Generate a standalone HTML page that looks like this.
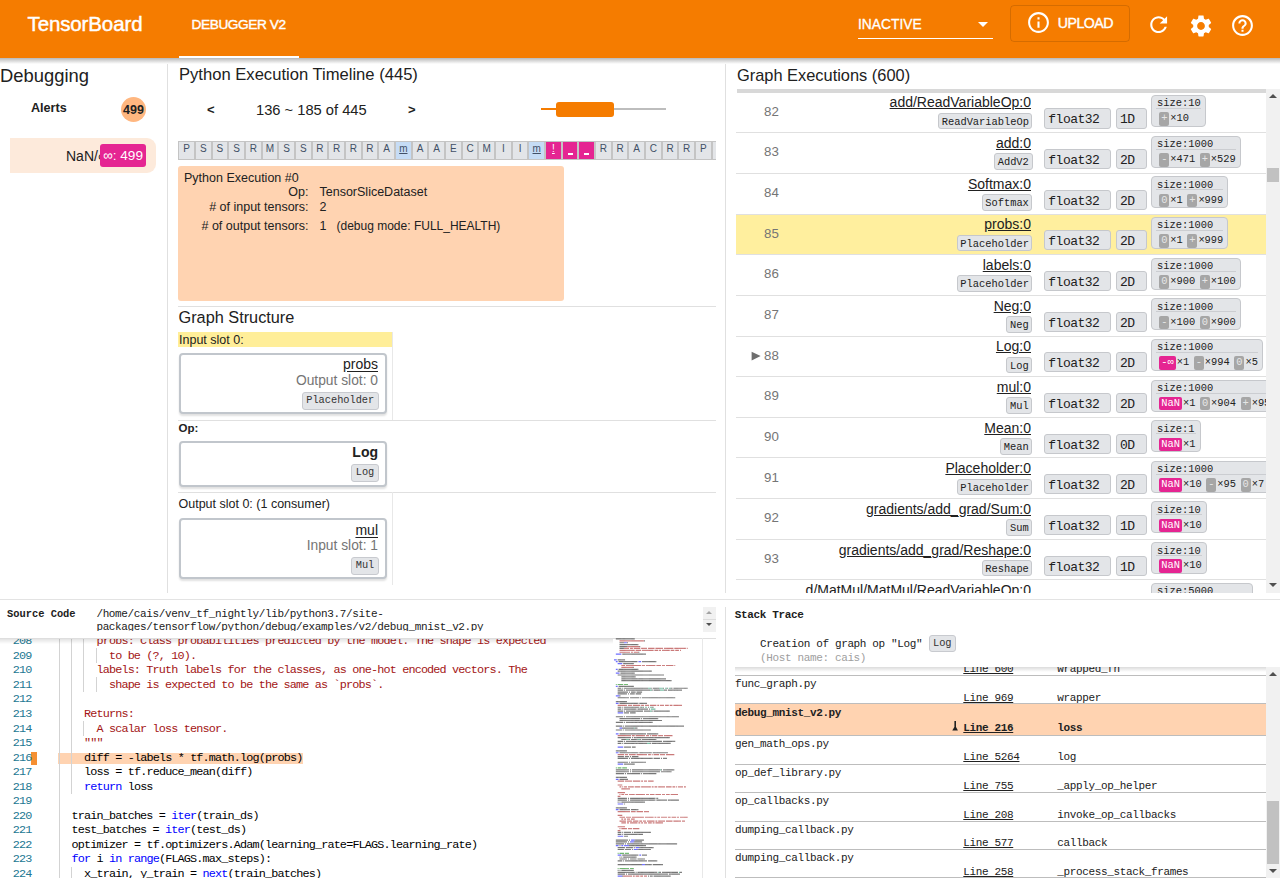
<!DOCTYPE html>
<html><head><meta charset="utf-8">
<style>
*{box-sizing:border-box;margin:0;padding:0}
html,body{width:1280px;height:878px;overflow:hidden;background:#fff;font-family:"Liberation Sans",sans-serif;color:#212121}
body{position:relative}
.t{position:absolute;white-space:pre}
.b{position:absolute}
.m{font-family:"Liberation Mono",monospace}
.u{text-decoration:underline;text-underline-offset:2px}
</style></head><body>

<div class="b" style="left:0px;top:0px;width:1280px;height:58px;background:#f57c00"></div>
<div class="t" style="left:27.5px;top:14.00px;font-size:20.5px;line-height:20px;color:#fff;letter-spacing:-0.12px;-webkit-text-stroke:0.45px #fff">TensorBoard</div>
<div class="t" style="left:191.5px;top:14.60px;font-size:13.7px;line-height:20px;color:#fff;letter-spacing:-0.42px;-webkit-text-stroke:0.4px #fff">DEBUGGER V2</div>
<div class="b" style="left:179px;top:56px;width:120px;height:2px;background:#fff"></div>
<div class="t" style="left:858px;top:14.80px;font-size:13.8px;line-height:20px;color:#fff;-webkit-text-stroke:0.3px #fff">INACTIVE</div>
<div class="b" style="left:858px;top:38px;width:135px;height:1px;background:#fff"></div>
<div class="b" style="left:978px;top:22px;width:0;height:0;border-left:5px solid transparent;border-right:5px solid transparent;border-top:5px solid #fff"></div>
<div class="b" style="left:1010px;top:5px;width:120px;height:37px;border:1px solid rgba(0,0,0,0.13);border-radius:4px"></div>
<div class="t" style="left:1057.8px;top:12.90px;font-size:14.2px;line-height:20px;color:#fff;letter-spacing:-0.55px;-webkit-text-stroke:0.4px #fff">UPLOAD</div>
<svg class="b" style="left:1026.3px;top:10.4px" width="25" height="25" viewBox="0 0 24 24"><path fill="#fff" d="M11 7h2v2h-2zm0 4h2v6h-2zm1-9C6.48 2 2 6.48 2 12s4.48 10 10 10 10-4.48 10-10S17.52 2 12 2zm0 18c-4.41 0-8-3.59-8-8s3.59-8 8-8 8 3.59 8 8-3.59 8-8 8z"/></svg>
<svg class="b" style="left:1146.1px;top:12.1px" width="25.3" height="25.3" viewBox="0 0 24 24"><path fill="#fff" d="M17.65 6.35C16.2 4.9 14.21 4 12 4c-4.42 0-7.99 3.58-7.99 8s3.57 8 7.99 8c3.73 0 6.840-2.55 7.73-6h-2.08c-.82 2.33-3.04 4-5.65 4-3.310 0-6-2.69-6-6s2.69-6 6-6c1.66 0 3.14.69 4.22 1.78L13 11h7V4l-2.35 2.35z"/></svg>
<svg class="b" style="left:1187.5px;top:12.6px" width="26" height="26" viewBox="0 0 24 24"><path fill="#fff" d="M19.14,12.94c0.04-0.3,0.06-0.61,0.06-0.94c0-0.32-0.02-0.64-0.07-0.94l2.03-1.58c0.18-0.14,0.23-0.41,0.12-0.61 l-1.92-3.32c-0.12-0.22-0.37-0.29-0.59-0.22l-2.39,0.96c-0.5-0.38-1.03-0.7-1.62-0.94L14.4,2.81c-0.04-0.24-0.24-0.41-0.48-0.41 h-3.84c-0.24,0-0.43,0.17-0.47,0.41L9.25,5.35C8.66,5.59,8.12,5.92,7.63,6.29L5.24,5.33c-0.22-0.08-0.47,0-0.59,0.22L2.74,8.87 C2.62,9.08,2.66,9.34,2.86,9.48l2.03,1.580C4.84,11.36,4.8,11.69,4.8,12s0.02,0.64,0.07,0.94l-2.03,1.58 c-0.18,0.14-0.23,0.41-0.12,0.61l1.92,3.32c0.12,0.22,0.37,0.29,0.59,0.22l2.39-0.96c0.5,0.38,1.03,0.7,1.62,0.94l0.36,2.54 c0.05,0.24,0.24,0.41,0.48,0.41h3.84c0.24,0,0.44-0.17,0.47-0.41l0.36-2.54c0.59-0.24,1.13-0.56,1.62-0.94l2.39,0.96 c0.22,0.08,0.47,0,0.59-0.22l1.92-3.32c0.12-0.22,0.07-0.47-0.12-0.61L19.14,12.94z M12,15.6c-1.98,0-3.6-1.62-3.6-3.6 s1.62-3.6,3.6-3.6s3.6,1.62,3.6,3.6S13.98,15.6,12,15.6z"/></svg>
<svg class="b" style="left:1229.6px;top:13.25px" width="25" height="25" viewBox="0 0 24 24"><path fill="#fff" d="M11 18h2v-2h-2v2zm1-16C6.48 2 2 6.48 2 12s4.48 10 10 10 10-4.48 10-10S17.52 2 12 2zm0 18c-4.41 0-8-3.590-8-8s3.59-8 8-8 8 3.59 8 8-3.59 8-8 8zm0-14c-2.21 0-4 1.79-4 4h2c0-1.1.9-2 2-2s2 .9 2 2c0 2-3 1.75-3 5h2c0-2.25 3-2.5 3-5 0-2.21-1.790-4-4-4z"/></svg>
<div class="b" style="left:0px;top:58px;width:1280px;height:6px;background:linear-gradient(rgba(0,0,0,0.28),rgba(0,0,0,0))"></div>
<div class="t" style="left:0px;top:66.00px;font-size:18.4px;line-height:20px;color:#212121">Debugging</div>
<div class="t" style="left:31px;top:98.00px;font-size:12.6px;line-height:20px;font-weight:bold;color:#212121">Alerts</div>
<div class="b" style="left:121px;top:97px;width:25px;height:25px;border-radius:50%;background:#ffb780"></div>
<div class="t" style="left:121px;top:100.00px;font-size:12.5px;line-height:20px;font-weight:bold;width:25px;text-align:center;color:#212121">499</div>
<div class="b" style="left:10px;top:138px;width:146px;height:35px;background:#fdeadb;border-radius:0 9px 9px 0"></div>
<div class="t" style="left:66px;top:145.50px;font-size:14px;line-height:20px;color:#212121">NaN/∞</div>
<div class="b" style="left:100px;top:144px;width:46px;height:23px;background:#e52592;border-radius:3px"></div>
<div class="t" style="left:100px;top:146.10px;font-size:13.6px;line-height:20px;color:#fff;width:46px;text-align:center">∞: 499</div>
<div class="b" style="left:167px;top:64px;width:1px;height:529px;background:#e0e0e0"></div>
<div class="t" style="left:179px;top:65.00px;font-size:16.6px;line-height:20px;">Python Execution Timeline (445)</div>
<div class="t" style="left:207px;top:100.00px;font-size:13px;line-height:20px;font-weight:bold">&lt;</div>
<div class="t" style="left:256px;top:100.00px;font-size:14.7px;line-height:20px;">136 ~ 185 of 445</div>
<div class="t" style="left:408px;top:100.00px;font-size:13px;line-height:20px;font-weight:bold">&gt;</div>
<div class="b" style="left:541px;top:108px;width:15px;height:2px;background:#f57c00"></div>
<div class="b" style="left:613px;top:108px;width:53px;height:1.5px;background:#bdbdbd"></div>
<div class="b" style="left:555.5px;top:102px;width:58px;height:14.5px;background:#f57c00;border-radius:3px"></div>
<div class="b" style="left:178.30px;top:141px;width:16.67px;height:19px;background:#e3e5e8;border:1px solid #c4c4c4;color:#425066;font-size:10px;line-height:13.5px;text-align:center;">P</div>
<div class="b" style="left:194.97px;top:141px;width:16.67px;height:19px;background:#e3e5e8;border:1px solid #c4c4c4;color:#425066;font-size:10px;line-height:13.5px;text-align:center;">S</div>
<div class="b" style="left:211.64px;top:141px;width:16.67px;height:19px;background:#e3e5e8;border:1px solid #c4c4c4;color:#425066;font-size:10px;line-height:13.5px;text-align:center;">S</div>
<div class="b" style="left:228.31px;top:141px;width:16.67px;height:19px;background:#e3e5e8;border:1px solid #c4c4c4;color:#425066;font-size:10px;line-height:13.5px;text-align:center;">S</div>
<div class="b" style="left:244.98px;top:141px;width:16.67px;height:19px;background:#e3e5e8;border:1px solid #c4c4c4;color:#425066;font-size:10px;line-height:13.5px;text-align:center;">R</div>
<div class="b" style="left:261.65px;top:141px;width:16.67px;height:19px;background:#e3e5e8;border:1px solid #c4c4c4;color:#425066;font-size:10px;line-height:13.5px;text-align:center;">M</div>
<div class="b" style="left:278.32px;top:141px;width:16.67px;height:19px;background:#e3e5e8;border:1px solid #c4c4c4;color:#425066;font-size:10px;line-height:13.5px;text-align:center;">S</div>
<div class="b" style="left:294.99px;top:141px;width:16.67px;height:19px;background:#e3e5e8;border:1px solid #c4c4c4;color:#425066;font-size:10px;line-height:13.5px;text-align:center;">S</div>
<div class="b" style="left:311.66px;top:141px;width:16.67px;height:19px;background:#e3e5e8;border:1px solid #c4c4c4;color:#425066;font-size:10px;line-height:13.5px;text-align:center;">R</div>
<div class="b" style="left:328.33px;top:141px;width:16.67px;height:19px;background:#e3e5e8;border:1px solid #c4c4c4;color:#425066;font-size:10px;line-height:13.5px;text-align:center;">R</div>
<div class="b" style="left:345.00px;top:141px;width:16.67px;height:19px;background:#e3e5e8;border:1px solid #c4c4c4;color:#425066;font-size:10px;line-height:13.5px;text-align:center;">R</div>
<div class="b" style="left:361.67px;top:141px;width:16.67px;height:19px;background:#e3e5e8;border:1px solid #c4c4c4;color:#425066;font-size:10px;line-height:13.5px;text-align:center;">R</div>
<div class="b" style="left:378.34px;top:141px;width:16.67px;height:19px;background:#e3e5e8;border:1px solid #c4c4c4;color:#425066;font-size:10px;line-height:13.5px;text-align:center;">A</div>
<div class="b" style="left:395.01px;top:141px;width:16.67px;height:19px;background:#c6dcf5;border:1px solid #c4c4c4;color:#425066;font-size:10px;line-height:13.5px;text-align:center;text-decoration:underline;">m</div>
<div class="b" style="left:411.68px;top:141px;width:16.67px;height:19px;background:#e3e5e8;border:1px solid #c4c4c4;color:#425066;font-size:10px;line-height:13.5px;text-align:center;">A</div>
<div class="b" style="left:428.35px;top:141px;width:16.67px;height:19px;background:#e3e5e8;border:1px solid #c4c4c4;color:#425066;font-size:10px;line-height:13.5px;text-align:center;">A</div>
<div class="b" style="left:445.02px;top:141px;width:16.67px;height:19px;background:#e3e5e8;border:1px solid #c4c4c4;color:#425066;font-size:10px;line-height:13.5px;text-align:center;">E</div>
<div class="b" style="left:461.69px;top:141px;width:16.67px;height:19px;background:#e3e5e8;border:1px solid #c4c4c4;color:#425066;font-size:10px;line-height:13.5px;text-align:center;">C</div>
<div class="b" style="left:478.36px;top:141px;width:16.67px;height:19px;background:#e3e5e8;border:1px solid #c4c4c4;color:#425066;font-size:10px;line-height:13.5px;text-align:center;">M</div>
<div class="b" style="left:495.03px;top:141px;width:16.67px;height:19px;background:#e3e5e8;border:1px solid #c4c4c4;color:#425066;font-size:10px;line-height:13.5px;text-align:center;">I</div>
<div class="b" style="left:511.70px;top:141px;width:16.67px;height:19px;background:#e3e5e8;border:1px solid #c4c4c4;color:#425066;font-size:10px;line-height:13.5px;text-align:center;">I</div>
<div class="b" style="left:528.37px;top:141px;width:16.67px;height:19px;background:#c6dcf5;border:1px solid #c4c4c4;color:#425066;font-size:10px;line-height:13.5px;text-align:center;text-decoration:underline;">m</div>
<div class="b" style="left:545.04px;top:141px;width:16.67px;height:19px;background:#e52592;border:1px solid #c4c4c4;color:#fff;font-size:10px;line-height:13.5px;text-align:center;text-decoration:underline;">!</div>
<div class="b" style="left:561.71px;top:141px;width:16.67px;height:19px;background:#e52592;border:1px solid #c4c4c4;color:#fff;font-size:10px;line-height:13.5px;text-align:center;"><span style='display:inline-block;width:5px;height:2px;background:#fff;vertical-align:-3px'></span></div>
<div class="b" style="left:578.38px;top:141px;width:16.67px;height:19px;background:#e52592;border:1px solid #c4c4c4;color:#fff;font-size:10px;line-height:13.5px;text-align:center;"><span style='display:inline-block;width:5px;height:2px;background:#fff;vertical-align:-3px'></span></div>
<div class="b" style="left:595.05px;top:141px;width:16.67px;height:19px;background:#e3e5e8;border:1px solid #c4c4c4;color:#425066;font-size:10px;line-height:13.5px;text-align:center;">R</div>
<div class="b" style="left:611.72px;top:141px;width:16.67px;height:19px;background:#e3e5e8;border:1px solid #c4c4c4;color:#425066;font-size:10px;line-height:13.5px;text-align:center;">R</div>
<div class="b" style="left:628.39px;top:141px;width:16.67px;height:19px;background:#e3e5e8;border:1px solid #c4c4c4;color:#425066;font-size:10px;line-height:13.5px;text-align:center;">A</div>
<div class="b" style="left:645.06px;top:141px;width:16.67px;height:19px;background:#e3e5e8;border:1px solid #c4c4c4;color:#425066;font-size:10px;line-height:13.5px;text-align:center;">C</div>
<div class="b" style="left:661.73px;top:141px;width:16.67px;height:19px;background:#e3e5e8;border:1px solid #c4c4c4;color:#425066;font-size:10px;line-height:13.5px;text-align:center;">R</div>
<div class="b" style="left:678.40px;top:141px;width:16.67px;height:19px;background:#e3e5e8;border:1px solid #c4c4c4;color:#425066;font-size:10px;line-height:13.5px;text-align:center;">R</div>
<div class="b" style="left:695.07px;top:141px;width:16.67px;height:19px;background:#e3e5e8;border:1px solid #c4c4c4;color:#425066;font-size:10px;line-height:13.5px;text-align:center;">P</div>
<div class="b" style="left:711.74px;top:141px;width:4.76px;height:19px;background:#e3e5e8;border:1px solid #c4c4c4;border-right:none"></div>
<div class="b" style="left:178px;top:166px;width:386px;height:135px;background:#ffd3b1;border-radius:3px"></div>
<div class="t" style="left:184px;top:167.50px;font-size:12.5px;line-height:20px;">Python Execution #0</div>
<div class="t" style="left:-191.5px;width:500px;text-align:right;top:182.00px;font-size:12.5px;line-height:20px;">Op:</div>
<div class="t" style="left:319.5px;top:182.00px;font-size:12.5px;line-height:20px;">TensorSliceDataset</div>
<div class="t" style="left:-191.5px;width:500px;text-align:right;top:196.50px;font-size:12.5px;line-height:20px;"># of input tensors:</div>
<div class="t" style="left:319.5px;top:196.50px;font-size:12.5px;line-height:20px;">2</div>
<div class="t" style="left:-191.5px;width:500px;text-align:right;top:215.50px;font-size:12.5px;line-height:20px;"># of output tensors:</div>
<div class="t" style="left:319.5px;top:215.50px;font-size:12.5px;line-height:20px;">1</div>
<div class="t" style="left:336.5px;top:215.50px;font-size:12px;line-height:20px;">(debug mode: FULL_HEALTH)</div>
<div class="b" style="left:178px;top:306px;width:538px;height:1px;background:#e0e0e0"></div>
<div class="t" style="left:178.5px;top:307.00px;font-size:16.3px;line-height:20px;">Graph Structure</div>
<div class="b" style="left:178px;top:332px;width:215px;height:14.5px;background:#ffee99"></div>
<div class="t" style="left:179px;top:329.50px;font-size:12.5px;line-height:20px;">Input slot 0:</div>
<div class="b" style="left:392px;top:332px;width:1px;height:88px;background:#e8e8e8"></div>
<div class="b" style="left:178.5px;top:352.5px;width:208px;height:61.5px;border:2px solid #c1c6cc;border-radius:4px;box-shadow:0 2px 2px rgba(0,0,0,0.12);background:#fff"></div>
<div class="t" style="left:-122px;width:500px;text-align:right;top:354.00px;font-size:14px;line-height:20px;text-decoration:underline;text-underline-offset:2px">probs</div>
<div class="t" style="left:-122px;width:500px;text-align:right;top:370.50px;font-size:13.8px;line-height:20px;color:#757575">Output slot: 0</div>
<div class="b m" style="left:302px;top:392px;width:76.5px;height:17.5px;background:#e3e5e8;border:1px solid #c8cacf;border-radius:3px;font-size:10.3px;line-height:15.5px;text-align:center;color:#333;">Placeholder</div>
<div class="b" style="left:178px;top:420px;width:538px;height:1px;background:#e0e0e0"></div>
<div class="t" style="left:178.5px;top:417.50px;font-size:11.5px;line-height:20px;font-weight:bold">Op:</div>
<div class="b" style="left:178.5px;top:440.5px;width:208px;height:46.2px;border:2px solid #c1c6cc;border-radius:4px;box-shadow:0 2px 2px rgba(0,0,0,0.12);background:#fff"></div>
<div class="t" style="left:-122px;width:500px;text-align:right;top:442.00px;font-size:14px;line-height:20px;font-weight:bold">Log</div>
<div class="b m" style="left:351.4px;top:464px;width:27.2px;height:17.5px;background:#e3e5e8;border:1px solid #c8cacf;border-radius:3px;font-size:10.3px;line-height:15.5px;text-align:center;color:#333;">Log</div>
<div class="b" style="left:178px;top:491.5px;width:538px;height:1px;background:#e0e0e0"></div>
<div class="b" style="left:392px;top:491.5px;width:1px;height:93px;background:#e8e8e8"></div>
<div class="t" style="left:178.5px;top:494.00px;font-size:12.5px;line-height:20px;">Output slot 0: (1 consumer)</div>
<div class="b" style="left:178.5px;top:517.5px;width:208px;height:61px;border:2px solid #c1c6cc;border-radius:4px;box-shadow:0 2px 2px rgba(0,0,0,0.12);background:#fff"></div>
<div class="t" style="left:-122px;width:500px;text-align:right;top:519.50px;font-size:14px;line-height:20px;text-decoration:underline;text-underline-offset:2px">mul</div>
<div class="t" style="left:-122px;width:500px;text-align:right;top:536.00px;font-size:13.8px;line-height:20px;color:#757575">Input slot: 1</div>
<div class="b m" style="left:351.4px;top:557px;width:27.2px;height:17.5px;background:#e3e5e8;border:1px solid #c8cacf;border-radius:3px;font-size:10.3px;line-height:15.5px;text-align:center;color:#333;">Mul</div>
<div class="b" style="left:725px;top:64px;width:1px;height:529px;background:#e0e0e0"></div>
<div class="t" style="left:737px;top:65.00px;font-size:16.4px;line-height:20px;">Graph Executions (600)</div>
<div class="b" style="left:736px;top:89px;width:530px;height:504px;overflow:hidden">
<div class="b" style="left:1px;top:0px;width:529px;height:4px;background:#d8d8d8"></div>
<div class="b" style="left:0;top:3.65px;width:530px;height:40.65px;background:transparent;border-bottom:1px solid #e0e0e0"></div>
<div class="t" style="left:28px;top:12.65px;font-size:13.3px;line-height:20px;color:#757575">82</div>
<div class="t" style="left:-105px;width:400px;text-align:right;top:3.40px;font-size:14px;line-height:20px;color:#212121;overflow:hidden"><span style="text-decoration:underline;text-underline-offset:1px">add/ReadVariableOp:0</span></div>
<div class="b m" style="left:202.20px;top:23.65px;width:94.30px;height:16.7px;background:#e3e5e8;border:1px solid #c6c8cc;border-radius:3px;font-size:10.4px;line-height:16.6px;text-align:center;color:#212121">ReadVariableOp</div>
<div class="b m" style="left:307.70000000000005px;top:19.35px;width:67.2px;height:20.2px;background:#e3e5e8;border:1px solid #c6c8cc;border-radius:3px;font-size:13px;letter-spacing:-0.5px;line-height:21.7px;padding-left:3.6px;color:#212121">float32</div>
<div class="b m" style="left:380px;top:19.35px;width:30.5px;height:20.2px;background:#e3e5e8;border:1px solid #c6c8cc;border-radius:3px;font-size:13px;letter-spacing:-0.5px;line-height:21.7px;padding-left:3px;color:#212121">1D</div>
<div class="b m" style="left:415px;top:5.95px;height:32px;background:#e3e5e8;border:1px solid #c6c8cc;border-radius:4px;font-size:10.4px;color:#212121;white-space:nowrap;padding:0 4px 0 4px"><div style="line-height:15px;height:12.5px;border-bottom:1px solid #cbcdd1;padding-left:1px;margin-top:0.5px">size:10</div><div style="padding-left:3.3px;padding-top:3.4px;height:16px"><span style="display:inline-block;margin-left:0;background:#a6a6a6;color:#e6e6e6;border-radius:2px;width:10px;text-align:center;line-height:13.6px;height:13.6px;vertical-align:top">+</span><span style="display:inline-block;padding-left:1px;line-height:13.2px;vertical-align:top">×10</span></div></div>
<div class="b" style="left:0;top:44.30px;width:530px;height:40.65px;background:transparent;border-bottom:1px solid #e0e0e0"></div>
<div class="t" style="left:28px;top:53.30px;font-size:13.3px;line-height:20px;color:#757575">83</div>
<div class="t" style="left:-105px;width:400px;text-align:right;top:44.05px;font-size:14px;line-height:20px;color:#212121;overflow:hidden"><span style="text-decoration:underline;text-underline-offset:1px">add:0</span></div>
<div class="b m" style="left:258.00px;top:64.30px;width:38.50px;height:16.7px;background:#e3e5e8;border:1px solid #c6c8cc;border-radius:3px;font-size:10.4px;line-height:16.6px;text-align:center;color:#212121">AddV2</div>
<div class="b m" style="left:307.70000000000005px;top:60.00px;width:67.2px;height:20.2px;background:#e3e5e8;border:1px solid #c6c8cc;border-radius:3px;font-size:13px;letter-spacing:-0.5px;line-height:21.7px;padding-left:3.6px;color:#212121">float32</div>
<div class="b m" style="left:380px;top:60.00px;width:30.5px;height:20.2px;background:#e3e5e8;border:1px solid #c6c8cc;border-radius:3px;font-size:13px;letter-spacing:-0.5px;line-height:21.7px;padding-left:3px;color:#212121">2D</div>
<div class="b m" style="left:415px;top:46.60px;height:32px;background:#e3e5e8;border:1px solid #c6c8cc;border-radius:4px;font-size:10.4px;color:#212121;white-space:nowrap;padding:0 4px 0 4px"><div style="line-height:15px;height:12.5px;border-bottom:1px solid #cbcdd1;padding-left:1px;margin-top:0.5px">size:1000</div><div style="padding-left:3.3px;padding-top:3.4px;height:16px"><span style="display:inline-block;margin-left:0;background:#a6a6a6;color:#e6e6e6;border-radius:2px;width:10px;text-align:center;line-height:13.6px;height:13.6px;vertical-align:top">-</span><span style="display:inline-block;padding-left:1px;line-height:13.2px;vertical-align:top">×471</span><span style="display:inline-block;margin-left:4.6px;background:#a6a6a6;color:#e6e6e6;border-radius:2px;width:10px;text-align:center;line-height:13.6px;height:13.6px;vertical-align:top">+</span><span style="display:inline-block;padding-left:1px;line-height:13.2px;vertical-align:top">×529</span></div></div>
<div class="b" style="left:0;top:84.95px;width:530px;height:40.65px;background:transparent;border-bottom:1px solid #e0e0e0"></div>
<div class="t" style="left:28px;top:93.95px;font-size:13.3px;line-height:20px;color:#757575">84</div>
<div class="t" style="left:-105px;width:400px;text-align:right;top:84.70px;font-size:14px;line-height:20px;color:#212121;overflow:hidden"><span style="text-decoration:underline;text-underline-offset:1px">Softmax:0</span></div>
<div class="b m" style="left:245.60px;top:104.95px;width:50.90px;height:16.7px;background:#e3e5e8;border:1px solid #c6c8cc;border-radius:3px;font-size:10.4px;line-height:16.6px;text-align:center;color:#212121">Softmax</div>
<div class="b m" style="left:307.70000000000005px;top:100.65px;width:67.2px;height:20.2px;background:#e3e5e8;border:1px solid #c6c8cc;border-radius:3px;font-size:13px;letter-spacing:-0.5px;line-height:21.7px;padding-left:3.6px;color:#212121">float32</div>
<div class="b m" style="left:380px;top:100.65px;width:30.5px;height:20.2px;background:#e3e5e8;border:1px solid #c6c8cc;border-radius:3px;font-size:13px;letter-spacing:-0.5px;line-height:21.7px;padding-left:3px;color:#212121">2D</div>
<div class="b m" style="left:415px;top:87.25px;height:32px;background:#e3e5e8;border:1px solid #c6c8cc;border-radius:4px;font-size:10.4px;color:#212121;white-space:nowrap;padding:0 4px 0 4px"><div style="line-height:15px;height:12.5px;border-bottom:1px solid #cbcdd1;padding-left:1px;margin-top:0.5px">size:1000</div><div style="padding-left:3.3px;padding-top:3.4px;height:16px"><span style="display:inline-block;margin-left:0;background:#a6a6a6;color:#e6e6e6;border-radius:2px;width:10px;text-align:center;line-height:13.6px;height:13.6px;vertical-align:top">0</span><span style="display:inline-block;padding-left:1px;line-height:13.2px;vertical-align:top">×1</span><span style="display:inline-block;margin-left:4.6px;background:#a6a6a6;color:#e6e6e6;border-radius:2px;width:10px;text-align:center;line-height:13.6px;height:13.6px;vertical-align:top">+</span><span style="display:inline-block;padding-left:1px;line-height:13.2px;vertical-align:top">×999</span></div></div>
<div class="b" style="left:0;top:125.60px;width:530px;height:40.65px;background:#ffef9e;border-bottom:1px solid #e0e0e0"></div>
<div class="t" style="left:28px;top:134.60px;font-size:13.3px;line-height:20px;color:#757575">85</div>
<div class="t" style="left:-105px;width:400px;text-align:right;top:125.35px;font-size:14px;line-height:20px;color:#212121;overflow:hidden"><span style="text-decoration:underline;text-underline-offset:1px">probs:0</span></div>
<div class="b m" style="left:220.80px;top:145.60px;width:75.70px;height:16.7px;background:#e3e5e8;border:1px solid #c6c8cc;border-radius:3px;font-size:10.4px;line-height:16.6px;text-align:center;color:#212121">Placeholder</div>
<div class="b m" style="left:307.70000000000005px;top:141.30px;width:67.2px;height:20.2px;background:#e3e5e8;border:1px solid #c6c8cc;border-radius:3px;font-size:13px;letter-spacing:-0.5px;line-height:21.7px;padding-left:3.6px;color:#212121">float32</div>
<div class="b m" style="left:380px;top:141.30px;width:30.5px;height:20.2px;background:#e3e5e8;border:1px solid #c6c8cc;border-radius:3px;font-size:13px;letter-spacing:-0.5px;line-height:21.7px;padding-left:3px;color:#212121">2D</div>
<div class="b m" style="left:415px;top:127.90px;height:32px;background:#e3e5e8;border:1px solid #c6c8cc;border-radius:4px;font-size:10.4px;color:#212121;white-space:nowrap;padding:0 4px 0 4px"><div style="line-height:15px;height:12.5px;border-bottom:1px solid #cbcdd1;padding-left:1px;margin-top:0.5px">size:1000</div><div style="padding-left:3.3px;padding-top:3.4px;height:16px"><span style="display:inline-block;margin-left:0;background:#a6a6a6;color:#e6e6e6;border-radius:2px;width:10px;text-align:center;line-height:13.6px;height:13.6px;vertical-align:top">0</span><span style="display:inline-block;padding-left:1px;line-height:13.2px;vertical-align:top">×1</span><span style="display:inline-block;margin-left:4.6px;background:#a6a6a6;color:#e6e6e6;border-radius:2px;width:10px;text-align:center;line-height:13.6px;height:13.6px;vertical-align:top">+</span><span style="display:inline-block;padding-left:1px;line-height:13.2px;vertical-align:top">×999</span></div></div>
<div class="b" style="left:0;top:166.25px;width:530px;height:40.65px;background:transparent;border-bottom:1px solid #e0e0e0"></div>
<div class="t" style="left:28px;top:175.25px;font-size:13.3px;line-height:20px;color:#757575">86</div>
<div class="t" style="left:-105px;width:400px;text-align:right;top:166.00px;font-size:14px;line-height:20px;color:#212121;overflow:hidden"><span style="text-decoration:underline;text-underline-offset:1px">labels:0</span></div>
<div class="b m" style="left:220.80px;top:186.25px;width:75.70px;height:16.7px;background:#e3e5e8;border:1px solid #c6c8cc;border-radius:3px;font-size:10.4px;line-height:16.6px;text-align:center;color:#212121">Placeholder</div>
<div class="b m" style="left:307.70000000000005px;top:181.95px;width:67.2px;height:20.2px;background:#e3e5e8;border:1px solid #c6c8cc;border-radius:3px;font-size:13px;letter-spacing:-0.5px;line-height:21.7px;padding-left:3.6px;color:#212121">float32</div>
<div class="b m" style="left:380px;top:181.95px;width:30.5px;height:20.2px;background:#e3e5e8;border:1px solid #c6c8cc;border-radius:3px;font-size:13px;letter-spacing:-0.5px;line-height:21.7px;padding-left:3px;color:#212121">2D</div>
<div class="b m" style="left:415px;top:168.55px;height:32px;background:#e3e5e8;border:1px solid #c6c8cc;border-radius:4px;font-size:10.4px;color:#212121;white-space:nowrap;padding:0 4px 0 4px"><div style="line-height:15px;height:12.5px;border-bottom:1px solid #cbcdd1;padding-left:1px;margin-top:0.5px">size:1000</div><div style="padding-left:3.3px;padding-top:3.4px;height:16px"><span style="display:inline-block;margin-left:0;background:#a6a6a6;color:#e6e6e6;border-radius:2px;width:10px;text-align:center;line-height:13.6px;height:13.6px;vertical-align:top">0</span><span style="display:inline-block;padding-left:1px;line-height:13.2px;vertical-align:top">×900</span><span style="display:inline-block;margin-left:4.6px;background:#a6a6a6;color:#e6e6e6;border-radius:2px;width:10px;text-align:center;line-height:13.6px;height:13.6px;vertical-align:top">+</span><span style="display:inline-block;padding-left:1px;line-height:13.2px;vertical-align:top">×100</span></div></div>
<div class="b" style="left:0;top:206.90px;width:530px;height:40.65px;background:transparent;border-bottom:1px solid #e0e0e0"></div>
<div class="t" style="left:28px;top:215.90px;font-size:13.3px;line-height:20px;color:#757575">87</div>
<div class="t" style="left:-105px;width:400px;text-align:right;top:206.65px;font-size:14px;line-height:20px;color:#212121;overflow:hidden"><span style="text-decoration:underline;text-underline-offset:1px">Neg:0</span></div>
<div class="b m" style="left:270.40px;top:226.90px;width:26.10px;height:16.7px;background:#e3e5e8;border:1px solid #c6c8cc;border-radius:3px;font-size:10.4px;line-height:16.6px;text-align:center;color:#212121">Neg</div>
<div class="b m" style="left:307.70000000000005px;top:222.60px;width:67.2px;height:20.2px;background:#e3e5e8;border:1px solid #c6c8cc;border-radius:3px;font-size:13px;letter-spacing:-0.5px;line-height:21.7px;padding-left:3.6px;color:#212121">float32</div>
<div class="b m" style="left:380px;top:222.60px;width:30.5px;height:20.2px;background:#e3e5e8;border:1px solid #c6c8cc;border-radius:3px;font-size:13px;letter-spacing:-0.5px;line-height:21.7px;padding-left:3px;color:#212121">2D</div>
<div class="b m" style="left:415px;top:209.20px;height:32px;background:#e3e5e8;border:1px solid #c6c8cc;border-radius:4px;font-size:10.4px;color:#212121;white-space:nowrap;padding:0 4px 0 4px"><div style="line-height:15px;height:12.5px;border-bottom:1px solid #cbcdd1;padding-left:1px;margin-top:0.5px">size:1000</div><div style="padding-left:3.3px;padding-top:3.4px;height:16px"><span style="display:inline-block;margin-left:0;background:#a6a6a6;color:#e6e6e6;border-radius:2px;width:10px;text-align:center;line-height:13.6px;height:13.6px;vertical-align:top">-</span><span style="display:inline-block;padding-left:1px;line-height:13.2px;vertical-align:top">×100</span><span style="display:inline-block;margin-left:4.6px;background:#a6a6a6;color:#e6e6e6;border-radius:2px;width:10px;text-align:center;line-height:13.6px;height:13.6px;vertical-align:top">0</span><span style="display:inline-block;padding-left:1px;line-height:13.2px;vertical-align:top">×900</span></div></div>
<div class="b" style="left:0;top:247.55px;width:530px;height:40.65px;background:transparent;border-bottom:1px solid #e0e0e0"></div>
<svg class="b" style="left:15px;top:262px" width="11" height="11" viewBox="751 351 11 11"><polygon points="751.6,351.8 760.6,356.1 751.6,360.5" fill="#6e6e6e"/></svg>
<div class="t" style="left:28px;top:256.55px;font-size:13.3px;line-height:20px;color:#757575">88</div>
<div class="t" style="left:-105px;width:400px;text-align:right;top:247.30px;font-size:14px;line-height:20px;color:#212121;overflow:hidden"><span style="text-decoration:underline;text-underline-offset:1px">Log:0</span></div>
<div class="b m" style="left:270.40px;top:267.55px;width:26.10px;height:16.7px;background:#e3e5e8;border:1px solid #c6c8cc;border-radius:3px;font-size:10.4px;line-height:16.6px;text-align:center;color:#212121">Log</div>
<div class="b m" style="left:307.70000000000005px;top:263.25px;width:67.2px;height:20.2px;background:#e3e5e8;border:1px solid #c6c8cc;border-radius:3px;font-size:13px;letter-spacing:-0.5px;line-height:21.7px;padding-left:3.6px;color:#212121">float32</div>
<div class="b m" style="left:380px;top:263.25px;width:30.5px;height:20.2px;background:#e3e5e8;border:1px solid #c6c8cc;border-radius:3px;font-size:13px;letter-spacing:-0.5px;line-height:21.7px;padding-left:3px;color:#212121">2D</div>
<div class="b m" style="left:415px;top:249.85px;height:32px;background:#e3e5e8;border:1px solid #c6c8cc;border-radius:4px;font-size:10.4px;color:#212121;white-space:nowrap;padding:0 4px 0 4px"><div style="line-height:15px;height:12.5px;border-bottom:1px solid #cbcdd1;padding-left:1px;margin-top:0.5px">size:1000</div><div style="padding-left:3.3px;padding-top:3.4px;height:16px"><span style="display:inline-block;margin-left:0;background:#e52592;color:#fff;border-radius:2px;padding:0 2px;line-height:13.6px;height:13.6px;vertical-align:top">-∞</span><span style="display:inline-block;padding-left:1px;line-height:13.2px;vertical-align:top">×1</span><span style="display:inline-block;margin-left:4.6px;background:#a6a6a6;color:#e6e6e6;border-radius:2px;width:10px;text-align:center;line-height:13.6px;height:13.6px;vertical-align:top">-</span><span style="display:inline-block;padding-left:1px;line-height:13.2px;vertical-align:top">×994</span><span style="display:inline-block;margin-left:4.6px;background:#a6a6a6;color:#e6e6e6;border-radius:2px;width:10px;text-align:center;line-height:13.6px;height:13.6px;vertical-align:top">0</span><span style="display:inline-block;padding-left:1px;line-height:13.2px;vertical-align:top">×5</span></div></div>
<div class="b" style="left:0;top:288.20px;width:530px;height:40.65px;background:transparent;border-bottom:1px solid #e0e0e0"></div>
<div class="t" style="left:28px;top:297.20px;font-size:13.3px;line-height:20px;color:#757575">89</div>
<div class="t" style="left:-105px;width:400px;text-align:right;top:287.95px;font-size:14px;line-height:20px;color:#212121;overflow:hidden"><span style="text-decoration:underline;text-underline-offset:1px">mul:0</span></div>
<div class="b m" style="left:270.40px;top:308.20px;width:26.10px;height:16.7px;background:#e3e5e8;border:1px solid #c6c8cc;border-radius:3px;font-size:10.4px;line-height:16.6px;text-align:center;color:#212121">Mul</div>
<div class="b m" style="left:307.70000000000005px;top:303.90px;width:67.2px;height:20.2px;background:#e3e5e8;border:1px solid #c6c8cc;border-radius:3px;font-size:13px;letter-spacing:-0.5px;line-height:21.7px;padding-left:3.6px;color:#212121">float32</div>
<div class="b m" style="left:380px;top:303.90px;width:30.5px;height:20.2px;background:#e3e5e8;border:1px solid #c6c8cc;border-radius:3px;font-size:13px;letter-spacing:-0.5px;line-height:21.7px;padding-left:3px;color:#212121">2D</div>
<div class="b m" style="left:415px;top:290.50px;height:32px;background:#e3e5e8;border:1px solid #c6c8cc;border-radius:4px;font-size:10.4px;color:#212121;white-space:nowrap;padding:0 4px 0 4px"><div style="line-height:15px;height:12.5px;border-bottom:1px solid #cbcdd1;padding-left:1px;margin-top:0.5px">size:1000</div><div style="padding-left:3.3px;padding-top:3.4px;height:16px"><span style="display:inline-block;margin-left:0;background:#e52592;color:#fff;border-radius:2px;padding:0 2px;line-height:13.6px;height:13.6px;vertical-align:top">NaN</span><span style="display:inline-block;padding-left:1px;line-height:13.2px;vertical-align:top">×1</span><span style="display:inline-block;margin-left:4.6px;background:#a6a6a6;color:#e6e6e6;border-radius:2px;width:10px;text-align:center;line-height:13.6px;height:13.6px;vertical-align:top">0</span><span style="display:inline-block;padding-left:1px;line-height:13.2px;vertical-align:top">×904</span><span style="display:inline-block;margin-left:4.6px;background:#a6a6a6;color:#e6e6e6;border-radius:2px;width:10px;text-align:center;line-height:13.6px;height:13.6px;vertical-align:top">+</span><span style="display:inline-block;padding-left:1px;line-height:13.2px;vertical-align:top">×95</span></div></div>
<div class="b" style="left:0;top:328.85px;width:530px;height:40.65px;background:transparent;border-bottom:1px solid #e0e0e0"></div>
<div class="t" style="left:28px;top:337.85px;font-size:13.3px;line-height:20px;color:#757575">90</div>
<div class="t" style="left:-105px;width:400px;text-align:right;top:328.60px;font-size:14px;line-height:20px;color:#212121;overflow:hidden"><span style="text-decoration:underline;text-underline-offset:1px">Mean:0</span></div>
<div class="b m" style="left:264.20px;top:348.85px;width:32.30px;height:16.7px;background:#e3e5e8;border:1px solid #c6c8cc;border-radius:3px;font-size:10.4px;line-height:16.6px;text-align:center;color:#212121">Mean</div>
<div class="b m" style="left:307.70000000000005px;top:344.55px;width:67.2px;height:20.2px;background:#e3e5e8;border:1px solid #c6c8cc;border-radius:3px;font-size:13px;letter-spacing:-0.5px;line-height:21.7px;padding-left:3.6px;color:#212121">float32</div>
<div class="b m" style="left:380px;top:344.55px;width:30.5px;height:20.2px;background:#e3e5e8;border:1px solid #c6c8cc;border-radius:3px;font-size:13px;letter-spacing:-0.5px;line-height:21.7px;padding-left:3px;color:#212121">0D</div>
<div class="b m" style="left:415px;top:331.15px;height:32px;background:#e3e5e8;border:1px solid #c6c8cc;border-radius:4px;font-size:10.4px;color:#212121;white-space:nowrap;padding:0 4px 0 4px"><div style="line-height:15px;height:12.5px;border-bottom:1px solid #cbcdd1;padding-left:1px;margin-top:0.5px">size:1</div><div style="padding-left:3.3px;padding-top:3.4px;height:16px"><span style="display:inline-block;margin-left:0;background:#e52592;color:#fff;border-radius:2px;padding:0 2px;line-height:13.6px;height:13.6px;vertical-align:top">NaN</span><span style="display:inline-block;padding-left:1px;line-height:13.2px;vertical-align:top">×1</span></div></div>
<div class="b" style="left:0;top:369.50px;width:530px;height:40.65px;background:transparent;border-bottom:1px solid #e0e0e0"></div>
<div class="t" style="left:28px;top:378.50px;font-size:13.3px;line-height:20px;color:#757575">91</div>
<div class="t" style="left:-105px;width:400px;text-align:right;top:369.25px;font-size:14px;line-height:20px;color:#212121;overflow:hidden"><span style="text-decoration:underline;text-underline-offset:1px">Placeholder:0</span></div>
<div class="b m" style="left:220.80px;top:389.50px;width:75.70px;height:16.7px;background:#e3e5e8;border:1px solid #c6c8cc;border-radius:3px;font-size:10.4px;line-height:16.6px;text-align:center;color:#212121">Placeholder</div>
<div class="b m" style="left:307.70000000000005px;top:385.20px;width:67.2px;height:20.2px;background:#e3e5e8;border:1px solid #c6c8cc;border-radius:3px;font-size:13px;letter-spacing:-0.5px;line-height:21.7px;padding-left:3.6px;color:#212121">float32</div>
<div class="b m" style="left:380px;top:385.20px;width:30.5px;height:20.2px;background:#e3e5e8;border:1px solid #c6c8cc;border-radius:3px;font-size:13px;letter-spacing:-0.5px;line-height:21.7px;padding-left:3px;color:#212121">2D</div>
<div class="b m" style="left:415px;top:371.80px;height:32px;background:#e3e5e8;border:1px solid #c6c8cc;border-radius:4px;font-size:10.4px;color:#212121;white-space:nowrap;padding:0 4px 0 4px"><div style="line-height:15px;height:12.5px;border-bottom:1px solid #cbcdd1;padding-left:1px;margin-top:0.5px">size:1000</div><div style="padding-left:3.3px;padding-top:3.4px;height:16px"><span style="display:inline-block;margin-left:0;background:#e52592;color:#fff;border-radius:2px;padding:0 2px;line-height:13.6px;height:13.6px;vertical-align:top">NaN</span><span style="display:inline-block;padding-left:1px;line-height:13.2px;vertical-align:top">×10</span><span style="display:inline-block;margin-left:4.6px;background:#a6a6a6;color:#e6e6e6;border-radius:2px;width:10px;text-align:center;line-height:13.6px;height:13.6px;vertical-align:top">-</span><span style="display:inline-block;padding-left:1px;line-height:13.2px;vertical-align:top">×95</span><span style="display:inline-block;margin-left:4.6px;background:#a6a6a6;color:#e6e6e6;border-radius:2px;width:10px;text-align:center;line-height:13.6px;height:13.6px;vertical-align:top">0</span><span style="display:inline-block;padding-left:1px;line-height:13.2px;vertical-align:top">×7</span><span style="display:inline-block;margin-left:4.6px;background:#a6a6a6;color:#e6e6e6;border-radius:2px;width:10px;text-align:center;line-height:13.6px;height:13.6px;vertical-align:top">+</span><span style="display:inline-block;padding-left:1px;line-height:13.2px;vertical-align:top">×888</span></div></div>
<div class="b" style="left:0;top:410.15px;width:530px;height:40.65px;background:transparent;border-bottom:1px solid #e0e0e0"></div>
<div class="t" style="left:28px;top:419.15px;font-size:13.3px;line-height:20px;color:#757575">92</div>
<div class="t" style="left:-105px;width:400px;text-align:right;top:409.90px;font-size:14px;line-height:20px;color:#212121;overflow:hidden"><span style="text-decoration:underline;text-underline-offset:1px">gradients/add_grad/Sum:0</span></div>
<div class="b m" style="left:270.40px;top:430.15px;width:26.10px;height:16.7px;background:#e3e5e8;border:1px solid #c6c8cc;border-radius:3px;font-size:10.4px;line-height:16.6px;text-align:center;color:#212121">Sum</div>
<div class="b m" style="left:307.70000000000005px;top:425.85px;width:67.2px;height:20.2px;background:#e3e5e8;border:1px solid #c6c8cc;border-radius:3px;font-size:13px;letter-spacing:-0.5px;line-height:21.7px;padding-left:3.6px;color:#212121">float32</div>
<div class="b m" style="left:380px;top:425.85px;width:30.5px;height:20.2px;background:#e3e5e8;border:1px solid #c6c8cc;border-radius:3px;font-size:13px;letter-spacing:-0.5px;line-height:21.7px;padding-left:3px;color:#212121">1D</div>
<div class="b m" style="left:415px;top:412.45px;height:32px;background:#e3e5e8;border:1px solid #c6c8cc;border-radius:4px;font-size:10.4px;color:#212121;white-space:nowrap;padding:0 4px 0 4px"><div style="line-height:15px;height:12.5px;border-bottom:1px solid #cbcdd1;padding-left:1px;margin-top:0.5px">size:10</div><div style="padding-left:3.3px;padding-top:3.4px;height:16px"><span style="display:inline-block;margin-left:0;background:#e52592;color:#fff;border-radius:2px;padding:0 2px;line-height:13.6px;height:13.6px;vertical-align:top">NaN</span><span style="display:inline-block;padding-left:1px;line-height:13.2px;vertical-align:top">×10</span></div></div>
<div class="b" style="left:0;top:450.80px;width:530px;height:40.65px;background:transparent;border-bottom:1px solid #e0e0e0"></div>
<div class="t" style="left:28px;top:459.80px;font-size:13.3px;line-height:20px;color:#757575">93</div>
<div class="t" style="left:-105px;width:400px;text-align:right;top:450.55px;font-size:14px;line-height:20px;color:#212121;overflow:hidden"><span style="text-decoration:underline;text-underline-offset:1px">gradients/add_grad/Reshape:0</span></div>
<div class="b m" style="left:245.60px;top:470.80px;width:50.90px;height:16.7px;background:#e3e5e8;border:1px solid #c6c8cc;border-radius:3px;font-size:10.4px;line-height:16.6px;text-align:center;color:#212121">Reshape</div>
<div class="b m" style="left:307.70000000000005px;top:466.50px;width:67.2px;height:20.2px;background:#e3e5e8;border:1px solid #c6c8cc;border-radius:3px;font-size:13px;letter-spacing:-0.5px;line-height:21.7px;padding-left:3.6px;color:#212121">float32</div>
<div class="b m" style="left:380px;top:466.50px;width:30.5px;height:20.2px;background:#e3e5e8;border:1px solid #c6c8cc;border-radius:3px;font-size:13px;letter-spacing:-0.5px;line-height:21.7px;padding-left:3px;color:#212121">1D</div>
<div class="b m" style="left:415px;top:453.10px;height:32px;background:#e3e5e8;border:1px solid #c6c8cc;border-radius:4px;font-size:10.4px;color:#212121;white-space:nowrap;padding:0 4px 0 4px"><div style="line-height:15px;height:12.5px;border-bottom:1px solid #cbcdd1;padding-left:1px;margin-top:0.5px">size:10</div><div style="padding-left:3.3px;padding-top:3.4px;height:16px"><span style="display:inline-block;margin-left:0;background:#e52592;color:#fff;border-radius:2px;padding:0 2px;line-height:13.6px;height:13.6px;vertical-align:top">NaN</span><span style="display:inline-block;padding-left:1px;line-height:13.2px;vertical-align:top">×10</span></div></div>
<div class="b" style="left:0;top:491.45px;width:530px;height:40.65px;background:transparent;border-bottom:1px solid #e0e0e0"></div>
<div class="t" style="left:28px;top:500.45px;font-size:13.3px;line-height:20px;color:#757575">94</div>
<div class="t" style="left:-105px;width:400px;text-align:right;top:491.20px;font-size:14px;line-height:20px;color:#212121;overflow:hidden"><span style="text-decoration:underline;text-underline-offset:1px">d/MatMul/MatMul/ReadVariableOp:0</span></div>
<div class="b m" style="left:202.20px;top:511.45px;width:94.30px;height:16.7px;background:#e3e5e8;border:1px solid #c6c8cc;border-radius:3px;font-size:10.4px;line-height:16.6px;text-align:center;color:#212121">ReadVariableOp</div>
<div class="b m" style="left:307.70000000000005px;top:507.15px;width:67.2px;height:20.2px;background:#e3e5e8;border:1px solid #c6c8cc;border-radius:3px;font-size:13px;letter-spacing:-0.5px;line-height:21.7px;padding-left:3.6px;color:#212121">float32</div>
<div class="b m" style="left:380px;top:507.15px;width:30.5px;height:20.2px;background:#e3e5e8;border:1px solid #c6c8cc;border-radius:3px;font-size:13px;letter-spacing:-0.5px;line-height:21.7px;padding-left:3px;color:#212121">2D</div>
<div class="b m" style="left:415px;top:493.75px;height:32px;background:#e3e5e8;border:1px solid #c6c8cc;border-radius:4px;font-size:10.4px;color:#212121;white-space:nowrap;padding:0 4px 0 4px"><div style="line-height:15px;height:12.5px;border-bottom:1px solid #cbcdd1;padding-left:1px;margin-top:0.5px">size:5000</div><div style="padding-left:3.3px;padding-top:3.4px;height:16px"><span style="display:inline-block;margin-left:0;background:#a6a6a6;color:#e6e6e6;border-radius:2px;width:10px;text-align:center;line-height:13.6px;height:13.6px;vertical-align:top">-</span><span style="display:inline-block;padding-left:1px;line-height:13.2px;vertical-align:top">×2471</span><span style="display:inline-block;margin-left:4.6px;background:#a6a6a6;color:#e6e6e6;border-radius:2px;width:10px;text-align:center;line-height:13.6px;height:13.6px;vertical-align:top">+</span><span style="display:inline-block;padding-left:1px;line-height:13.2px;vertical-align:top">×2529</span></div></div>
</div>
<div class="b" style="left:1266px;top:89px;width:14px;height:504px;background:#f1f1f1"></div>
<div class="b" style="left:1267px;top:168px;width:12px;height:14px;background:#c1c1c1"></div>
<div class="b" style="left:1269px;top:94px;width:0;height:0;border-left:4px solid transparent;border-right:4px solid transparent;border-bottom:4px solid #505050"></div>
<div class="b" style="left:1269px;top:583px;width:0;height:0;border-left:4px solid transparent;border-right:4px solid transparent;border-top:4px solid #505050"></div>
<div class="b" style="left:0px;top:599px;width:1280px;height:1px;background:#e3e3e3"></div>
<div class="b" style="left:0px;top:600px;width:725px;height:38px;background:#fff"></div>
<div class="t m" style="left:7px;top:607px;font-size:10.4px;line-height:15px;font-weight:bold;color:#212121">Source Code</div>
<div class="b" style="left:96.4px;top:600px;width:600px;height:31.2px;overflow:hidden"><div class="t m" style="left:0;top:7.6px;font-size:11px;letter-spacing:-0.36px;line-height:13.1px;color:#212121">/home/cais/venv_tf_nightly/lib/python3.7/site-
packages/tensorflow/python/debug/examples/v2/debug_mnist_v2.py</div></div>
<div class="b" style="left:703px;top:607px;width:13px;height:25px;background:#f1f1f1"></div>
<div class="b" style="left:706px;top:611px;width:0;height:0;border-left:3.5px solid transparent;border-right:3.5px solid transparent;border-bottom:3.5px solid #a3a3a3"></div>
<div class="b" style="left:706px;top:623px;width:0;height:0;border-left:3.5px solid transparent;border-right:3.5px solid transparent;border-top:3.5px solid #505050"></div>
<div class="b" style="left:703px;top:619px;width:13px;height:1px;background:#dcdcdc"></div>
<div class="b" style="left:0;top:638px;width:716px;height:240px;overflow:hidden;background:#fff">
<div class="t m" style="left:0;width:31.4px;text-align:right;top:-18.32px;font-size:11.8px;letter-spacing:-0.84px;line-height:14.55px;color:#237893">207</div>
<div class="b" style="left:58.50px;top:-18.82px;width:1px;height:14.55px;background:#d3d3d3"></div>
<div class="b" style="left:70.98px;top:-18.82px;width:1px;height:14.55px;background:#d3d3d3"></div>
<div class="t m" style="left:59px;top:-18.32px;font-size:11.8px;letter-spacing:-0.84px;line-height:14.55px"><span style="color:#a31515">    Args:</span></div>
<div class="t m" style="left:0;width:31.4px;text-align:right;top:-3.77px;font-size:11.8px;letter-spacing:-0.84px;line-height:14.55px;color:#237893">208</div>
<div class="b" style="left:58.50px;top:-4.27px;width:1px;height:14.55px;background:#d3d3d3"></div>
<div class="b" style="left:70.98px;top:-4.27px;width:1px;height:14.55px;background:#d3d3d3"></div>
<div class="b" style="left:83.46px;top:-4.27px;width:1px;height:14.55px;background:#d3d3d3"></div>
<div class="t m" style="left:59px;top:-3.77px;font-size:11.8px;letter-spacing:-0.84px;line-height:14.55px"><span style="color:#a31515">      probs: Class probabilities predicted by the model. The shape is expected</span></div>
<div class="t m" style="left:0;width:31.4px;text-align:right;top:10.77px;font-size:11.8px;letter-spacing:-0.84px;line-height:14.55px;color:#237893">209</div>
<div class="b" style="left:58.50px;top:10.27px;width:1px;height:14.55px;background:#d3d3d3"></div>
<div class="b" style="left:70.98px;top:10.27px;width:1px;height:14.55px;background:#d3d3d3"></div>
<div class="b" style="left:83.46px;top:10.27px;width:1px;height:14.55px;background:#d3d3d3"></div>
<div class="b" style="left:95.94px;top:10.27px;width:1px;height:14.55px;background:#d3d3d3"></div>
<div class="t m" style="left:59px;top:10.77px;font-size:11.8px;letter-spacing:-0.84px;line-height:14.55px"><span style="color:#a31515">        to be (?, 10).</span></div>
<div class="t m" style="left:0;width:31.4px;text-align:right;top:25.33px;font-size:11.8px;letter-spacing:-0.84px;line-height:14.55px;color:#237893">210</div>
<div class="b" style="left:58.50px;top:24.83px;width:1px;height:14.55px;background:#d3d3d3"></div>
<div class="b" style="left:70.98px;top:24.83px;width:1px;height:14.55px;background:#d3d3d3"></div>
<div class="b" style="left:83.46px;top:24.83px;width:1px;height:14.55px;background:#d3d3d3"></div>
<div class="t m" style="left:59px;top:25.33px;font-size:11.8px;letter-spacing:-0.84px;line-height:14.55px"><span style="color:#a31515">      labels: Truth labels for the classes, as one-hot encoded vectors. The</span></div>
<div class="t m" style="left:0;width:31.4px;text-align:right;top:39.88px;font-size:11.8px;letter-spacing:-0.84px;line-height:14.55px;color:#237893">211</div>
<div class="b" style="left:58.50px;top:39.38px;width:1px;height:14.55px;background:#d3d3d3"></div>
<div class="b" style="left:70.98px;top:39.38px;width:1px;height:14.55px;background:#d3d3d3"></div>
<div class="b" style="left:83.46px;top:39.38px;width:1px;height:14.55px;background:#d3d3d3"></div>
<div class="b" style="left:95.94px;top:39.38px;width:1px;height:14.55px;background:#d3d3d3"></div>
<div class="t m" style="left:59px;top:39.88px;font-size:11.8px;letter-spacing:-0.84px;line-height:14.55px"><span style="color:#a31515">        shape is expected to be the same as `probs`.</span></div>
<div class="t m" style="left:0;width:31.4px;text-align:right;top:54.43px;font-size:11.8px;letter-spacing:-0.84px;line-height:14.55px;color:#237893">212</div>
<div class="b" style="left:58.50px;top:53.93px;width:1px;height:14.55px;background:#d3d3d3"></div>
<div class="b" style="left:70.98px;top:53.93px;width:1px;height:14.55px;background:#d3d3d3"></div>
<div class="t m" style="left:59px;top:54.43px;font-size:11.8px;letter-spacing:-0.84px;line-height:14.55px"><span style="color:#a31515"></span></div>
<div class="t m" style="left:0;width:31.4px;text-align:right;top:68.98px;font-size:11.8px;letter-spacing:-0.84px;line-height:14.55px;color:#237893">213</div>
<div class="b" style="left:58.50px;top:68.48px;width:1px;height:14.55px;background:#d3d3d3"></div>
<div class="b" style="left:70.98px;top:68.48px;width:1px;height:14.55px;background:#d3d3d3"></div>
<div class="t m" style="left:59px;top:68.98px;font-size:11.8px;letter-spacing:-0.84px;line-height:14.55px"><span style="color:#a31515">    Returns:</span></div>
<div class="t m" style="left:0;width:31.4px;text-align:right;top:83.52px;font-size:11.8px;letter-spacing:-0.84px;line-height:14.55px;color:#237893">214</div>
<div class="b" style="left:58.50px;top:83.02px;width:1px;height:14.55px;background:#d3d3d3"></div>
<div class="b" style="left:70.98px;top:83.02px;width:1px;height:14.55px;background:#d3d3d3"></div>
<div class="b" style="left:83.46px;top:83.02px;width:1px;height:14.55px;background:#d3d3d3"></div>
<div class="t m" style="left:59px;top:83.52px;font-size:11.8px;letter-spacing:-0.84px;line-height:14.55px"><span style="color:#a31515">      A scalar loss tensor.</span></div>
<div class="t m" style="left:0;width:31.4px;text-align:right;top:98.08px;font-size:11.8px;letter-spacing:-0.84px;line-height:14.55px;color:#237893">215</div>
<div class="b" style="left:58.50px;top:97.58px;width:1px;height:14.55px;background:#d3d3d3"></div>
<div class="b" style="left:70.98px;top:97.58px;width:1px;height:14.55px;background:#d3d3d3"></div>
<div class="t m" style="left:59px;top:98.08px;font-size:11.8px;letter-spacing:-0.84px;line-height:14.55px"><span style="color:#a31515">    &quot;&quot;&quot;</span></div>
<div class="b" style="left:58.25px;top:114.50px;width:245px;height:11.2px;background:#ffd3b1"></div>
<div class="b" style="left:31.25px;top:113.70px;width:5.5px;height:13.8px;background:#f59033"></div>
<div class="t m" style="left:0;width:31.4px;text-align:right;top:112.62px;font-size:11.8px;letter-spacing:-0.84px;line-height:14.55px;color:#237893">216</div>
<div class="b" style="left:58.50px;top:112.12px;width:1px;height:14.55px;background:#d3d3d3"></div>
<div class="b" style="left:70.98px;top:112.12px;width:1px;height:14.55px;background:#d3d3d3"></div>
<div class="t m" style="left:59px;top:112.62px;font-size:11.8px;letter-spacing:-0.84px;line-height:14.55px"><span style="color:#000000">    </span><span style="color:#000000">diff</span><span style="color:#000000"> </span><span style="color:#000000">=</span><span style="color:#000000"> </span><span style="color:#000000">-</span><span style="color:#000000">labels</span><span style="color:#000000"> </span><span style="color:#000000">*</span><span style="color:#000000"> </span><span style="color:#000000">tf</span><span style="color:#000000">.</span><span style="color:#000000">math</span><span style="color:#000000">.</span><span style="color:#000000">log</span><span style="color:#000000">(</span><span style="color:#000000">probs</span><span style="color:#000000">)</span></div>
<div class="t m" style="left:0;width:31.4px;text-align:right;top:127.18px;font-size:11.8px;letter-spacing:-0.84px;line-height:14.55px;color:#237893">217</div>
<div class="b" style="left:58.50px;top:126.68px;width:1px;height:14.55px;background:#d3d3d3"></div>
<div class="b" style="left:70.98px;top:126.68px;width:1px;height:14.55px;background:#d3d3d3"></div>
<div class="t m" style="left:59px;top:127.18px;font-size:11.8px;letter-spacing:-0.84px;line-height:14.55px"><span style="color:#000000">    </span><span style="color:#000000">loss</span><span style="color:#000000"> </span><span style="color:#000000">=</span><span style="color:#000000"> </span><span style="color:#000000">tf</span><span style="color:#000000">.</span><span style="color:#000000">reduce_mean</span><span style="color:#000000">(</span><span style="color:#000000">diff</span><span style="color:#000000">)</span></div>
<div class="t m" style="left:0;width:31.4px;text-align:right;top:141.73px;font-size:11.8px;letter-spacing:-0.84px;line-height:14.55px;color:#237893">218</div>
<div class="b" style="left:58.50px;top:141.23px;width:1px;height:14.55px;background:#d3d3d3"></div>
<div class="b" style="left:70.98px;top:141.23px;width:1px;height:14.55px;background:#d3d3d3"></div>
<div class="t m" style="left:59px;top:141.73px;font-size:11.8px;letter-spacing:-0.84px;line-height:14.55px"><span style="color:#000000">    </span><span style="color:#0000ff">return</span><span style="color:#000000"> </span><span style="color:#000000">loss</span></div>
<div class="t m" style="left:0;width:31.4px;text-align:right;top:156.27px;font-size:11.8px;letter-spacing:-0.84px;line-height:14.55px;color:#237893">219</div>
<div class="b" style="left:58.50px;top:155.77px;width:1px;height:14.55px;background:#d3d3d3"></div>
<div class="t m" style="left:59px;top:156.27px;font-size:11.8px;letter-spacing:-0.84px;line-height:14.55px"></div>
<div class="t m" style="left:0;width:31.4px;text-align:right;top:170.83px;font-size:11.8px;letter-spacing:-0.84px;line-height:14.55px;color:#237893">220</div>
<div class="b" style="left:58.50px;top:170.33px;width:1px;height:14.55px;background:#d3d3d3"></div>
<div class="t m" style="left:59px;top:170.83px;font-size:11.8px;letter-spacing:-0.84px;line-height:14.55px"><span style="color:#000000">  </span><span style="color:#000000">train_batches</span><span style="color:#000000"> </span><span style="color:#000000">=</span><span style="color:#000000"> </span><span style="color:#0000ff">iter</span><span style="color:#000000">(</span><span style="color:#000000">train_ds</span><span style="color:#000000">)</span></div>
<div class="t m" style="left:0;width:31.4px;text-align:right;top:185.38px;font-size:11.8px;letter-spacing:-0.84px;line-height:14.55px;color:#237893">221</div>
<div class="b" style="left:58.50px;top:184.88px;width:1px;height:14.55px;background:#d3d3d3"></div>
<div class="t m" style="left:59px;top:185.38px;font-size:11.8px;letter-spacing:-0.84px;line-height:14.55px"><span style="color:#000000">  </span><span style="color:#000000">test_batches</span><span style="color:#000000"> </span><span style="color:#000000">=</span><span style="color:#000000"> </span><span style="color:#0000ff">iter</span><span style="color:#000000">(</span><span style="color:#000000">test_ds</span><span style="color:#000000">)</span></div>
<div class="t m" style="left:0;width:31.4px;text-align:right;top:199.93px;font-size:11.8px;letter-spacing:-0.84px;line-height:14.55px;color:#237893">222</div>
<div class="b" style="left:58.50px;top:199.43px;width:1px;height:14.55px;background:#d3d3d3"></div>
<div class="t m" style="left:59px;top:199.93px;font-size:11.8px;letter-spacing:-0.84px;line-height:14.55px"><span style="color:#000000">  </span><span style="color:#000000">optimizer</span><span style="color:#000000"> </span><span style="color:#000000">=</span><span style="color:#000000"> </span><span style="color:#000000">tf</span><span style="color:#000000">.</span><span style="color:#000000">optimizers</span><span style="color:#000000">.</span><span style="color:#000000">Adam</span><span style="color:#000000">(</span><span style="color:#000000">learning_rate</span><span style="color:#000000">=</span><span style="color:#000000">FLAGS</span><span style="color:#000000">.</span><span style="color:#000000">learning_rate</span><span style="color:#000000">)</span></div>
<div class="t m" style="left:0;width:31.4px;text-align:right;top:214.48px;font-size:11.8px;letter-spacing:-0.84px;line-height:14.55px;color:#237893">223</div>
<div class="b" style="left:58.50px;top:213.98px;width:1px;height:14.55px;background:#d3d3d3"></div>
<div class="t m" style="left:59px;top:214.48px;font-size:11.8px;letter-spacing:-0.84px;line-height:14.55px"><span style="color:#000000">  </span><span style="color:#0000ff">for</span><span style="color:#000000"> </span><span style="color:#000000">i</span><span style="color:#000000"> </span><span style="color:#0000ff">in</span><span style="color:#000000"> </span><span style="color:#0000ff">range</span><span style="color:#000000">(</span><span style="color:#000000">FLAGS</span><span style="color:#000000">.</span><span style="color:#000000">max_steps</span><span style="color:#000000">)</span><span style="color:#000000">:</span></div>
<div class="t m" style="left:0;width:31.4px;text-align:right;top:229.02px;font-size:11.8px;letter-spacing:-0.84px;line-height:14.55px;color:#237893">224</div>
<div class="b" style="left:58.50px;top:228.52px;width:1px;height:14.55px;background:#d3d3d3"></div>
<div class="b" style="left:70.98px;top:228.52px;width:1px;height:14.55px;background:#d3d3d3"></div>
<div class="t m" style="left:59px;top:229.02px;font-size:11.8px;letter-spacing:-0.84px;line-height:14.55px"><span style="color:#000000">    </span><span style="color:#000000">x_train</span><span style="color:#000000">,</span><span style="color:#000000"> </span><span style="color:#000000">y_train</span><span style="color:#000000"> </span><span style="color:#000000">=</span><span style="color:#000000"> </span><span style="color:#0000ff">next</span><span style="color:#000000">(</span><span style="color:#000000">train_batches</span><span style="color:#000000">)</span></div>
<div class="t m" style="left:0;width:31.4px;text-align:right;top:243.58px;font-size:11.8px;letter-spacing:-0.84px;line-height:14.55px;color:#237893">225</div>
<div class="b" style="left:58.50px;top:243.08px;width:1px;height:14.55px;background:#d3d3d3"></div>
<div class="b" style="left:70.98px;top:243.08px;width:1px;height:14.55px;background:#d3d3d3"></div>
<div class="t m" style="left:59px;top:243.58px;font-size:11.8px;letter-spacing:-0.84px;line-height:14.55px"><span style="color:#000000">    </span><span style="color:#000000">x_test</span><span style="color:#000000">,</span><span style="color:#000000"> </span><span style="color:#000000">y_test</span><span style="color:#000000"> </span><span style="color:#000000">=</span><span style="color:#000000"> </span><span style="color:#0000ff">next</span><span style="color:#000000">(</span><span style="color:#000000">test_batches</span><span style="color:#000000">)</span></div>
<div class="b" style="left:0;top:0;width:613px;height:6px;background:linear-gradient(rgba(0,0,0,0.13),rgba(0,0,0,0))"></div>
<div class="b" style="left:0;top:0;width:716px;height:1px;background:#dedede"></div>
<svg class="b" style="left:614px;top:0.35000000000002274px" width="89" height="240" viewBox="0 0 89 240"><line x1="1.89" y1="0.95" x2="7.57" y2="0.95" stroke="#111111" stroke-width="1.2" stroke-dasharray="0.62 0.326" opacity="0.85"/><line x1="7.57" y1="0.95" x2="8.51" y2="0.95" stroke="#111111" stroke-width="1.2" stroke-dasharray="0.62 0.326" opacity="0.85"/><line x1="8.51" y1="0.95" x2="19.87" y2="0.95" stroke="#111111" stroke-width="1.2" stroke-dasharray="0.62 0.326" opacity="0.85"/><line x1="19.87" y1="0.95" x2="20.81" y2="0.95" stroke="#111111" stroke-width="1.2" stroke-dasharray="0.62 0.326" opacity="0.85"/><line x1="5.68" y1="2.85" x2="30.27" y2="2.85" stroke="#a31515" stroke-width="1.2" stroke-dasharray="0.62 0.326" opacity="0.85"/><line x1="30.27" y1="2.85" x2="31.22" y2="2.85" stroke="#111111" stroke-width="1.2" stroke-dasharray="0.62 0.326" opacity="0.85"/><line x1="5.68" y1="4.74" x2="9.46" y2="4.74" stroke="#111111" stroke-width="1.2" stroke-dasharray="0.62 0.326" opacity="0.85"/><line x1="9.46" y1="4.74" x2="10.41" y2="4.74" stroke="#111111" stroke-width="1.2" stroke-dasharray="0.62 0.326" opacity="0.85"/><line x1="10.41" y1="4.74" x2="13.24" y2="4.74" stroke="#0000ff" stroke-width="1.2" stroke-dasharray="0.62 0.326" opacity="0.85"/><line x1="13.24" y1="4.74" x2="14.19" y2="4.74" stroke="#111111" stroke-width="1.2" stroke-dasharray="0.62 0.326" opacity="0.85"/><line x1="5.68" y1="6.64" x2="12.30" y2="6.64" stroke="#111111" stroke-width="1.2" stroke-dasharray="0.62 0.326" opacity="0.85"/><line x1="12.30" y1="6.64" x2="13.24" y2="6.64" stroke="#111111" stroke-width="1.2" stroke-dasharray="0.62 0.326" opacity="0.85"/><line x1="13.24" y1="6.64" x2="23.65" y2="6.64" stroke="#111111" stroke-width="1.2" stroke-dasharray="0.62 0.326" opacity="0.85"/><line x1="23.65" y1="6.64" x2="24.60" y2="6.64" stroke="#111111" stroke-width="1.2" stroke-dasharray="0.62 0.326" opacity="0.85"/><line x1="5.68" y1="8.54" x2="12.30" y2="8.54" stroke="#111111" stroke-width="1.2" stroke-dasharray="0.62 0.326" opacity="0.85"/><line x1="12.30" y1="8.54" x2="13.24" y2="8.54" stroke="#111111" stroke-width="1.2" stroke-dasharray="0.62 0.326" opacity="0.85"/><line x1="13.24" y1="8.54" x2="25.54" y2="8.54" stroke="#a31515" stroke-width="1.2" stroke-dasharray="0.62 0.326" opacity="0.85"/><line x1="25.54" y1="8.54" x2="26.49" y2="8.54" stroke="#111111" stroke-width="1.2" stroke-dasharray="0.62 0.326" opacity="0.85"/><line x1="5.68" y1="10.43" x2="9.46" y2="10.43" stroke="#111111" stroke-width="1.2" stroke-dasharray="0.62 0.326" opacity="0.85"/><line x1="9.46" y1="10.43" x2="10.41" y2="10.43" stroke="#111111" stroke-width="1.2" stroke-dasharray="0.62 0.326" opacity="0.85"/><line x1="10.41" y1="10.43" x2="15.14" y2="10.43" stroke="#a31515" stroke-width="1.2" stroke-dasharray="0.62 0.326" opacity="0.85"/><line x1="16.08" y1="10.43" x2="18.92" y2="10.43" stroke="#a31515" stroke-width="1.2" stroke-dasharray="0.62 0.326" opacity="0.85"/><line x1="19.87" y1="10.43" x2="26.49" y2="10.43" stroke="#a31515" stroke-width="1.2" stroke-dasharray="0.62 0.326" opacity="0.85"/><line x1="27.43" y1="10.43" x2="33.11" y2="10.43" stroke="#a31515" stroke-width="1.2" stroke-dasharray="0.62 0.326" opacity="0.85"/><line x1="34.06" y1="10.43" x2="40.68" y2="10.43" stroke="#a31515" stroke-width="1.2" stroke-dasharray="0.62 0.326" opacity="0.85"/><line x1="41.62" y1="10.43" x2="49.19" y2="10.43" stroke="#a31515" stroke-width="1.2" stroke-dasharray="0.62 0.326" opacity="0.85"/><line x1="50.14" y1="10.43" x2="59.60" y2="10.43" stroke="#a31515" stroke-width="1.2" stroke-dasharray="0.62 0.326" opacity="0.85"/><line x1="60.54" y1="10.43" x2="71.90" y2="10.43" stroke="#a31515" stroke-width="1.2" stroke-dasharray="0.62 0.326" opacity="0.85"/><line x1="72.84" y1="10.43" x2="73.79" y2="10.43" stroke="#a31515" stroke-width="1.2" stroke-dasharray="0.62 0.326" opacity="0.85"/><line x1="5.68" y1="12.33" x2="20.81" y2="12.33" stroke="#a31515" stroke-width="1.2" stroke-dasharray="0.62 0.326" opacity="0.85"/><line x1="21.76" y1="12.33" x2="27.43" y2="12.33" stroke="#a31515" stroke-width="1.2" stroke-dasharray="0.62 0.326" opacity="0.85"/><line x1="28.38" y1="12.33" x2="39.73" y2="12.33" stroke="#a31515" stroke-width="1.2" stroke-dasharray="0.62 0.326" opacity="0.85"/><line x1="40.68" y1="12.33" x2="44.46" y2="12.33" stroke="#a31515" stroke-width="1.2" stroke-dasharray="0.62 0.326" opacity="0.85"/><line x1="45.41" y1="12.33" x2="47.30" y2="12.33" stroke="#a31515" stroke-width="1.2" stroke-dasharray="0.62 0.326" opacity="0.85"/><line x1="48.25" y1="12.33" x2="55.81" y2="12.33" stroke="#a31515" stroke-width="1.2" stroke-dasharray="0.62 0.326" opacity="0.85"/><line x1="56.76" y1="12.33" x2="60.54" y2="12.33" stroke="#a31515" stroke-width="1.2" stroke-dasharray="0.62 0.326" opacity="0.85"/><line x1="61.49" y1="12.33" x2="65.27" y2="12.33" stroke="#a31515" stroke-width="1.2" stroke-dasharray="0.62 0.326" opacity="0.85"/><line x1="66.22" y1="12.33" x2="67.17" y2="12.33" stroke="#a31515" stroke-width="1.2" stroke-dasharray="0.62 0.326" opacity="0.85"/><line x1="5.68" y1="14.23" x2="16.08" y2="14.23" stroke="#a31515" stroke-width="1.2" stroke-dasharray="0.62 0.326" opacity="0.85"/><line x1="17.03" y1="14.23" x2="18.92" y2="14.23" stroke="#a31515" stroke-width="1.2" stroke-dasharray="0.62 0.326" opacity="0.85"/><line x1="19.87" y1="14.23" x2="24.60" y2="14.23" stroke="#a31515" stroke-width="1.2" stroke-dasharray="0.62 0.326" opacity="0.85"/><line x1="24.60" y1="14.23" x2="25.54" y2="14.23" stroke="#111111" stroke-width="1.2" stroke-dasharray="0.62 0.326" opacity="0.85"/><line x1="1.89" y1="16.13" x2="7.57" y2="16.13" stroke="#0000ff" stroke-width="1.2" stroke-dasharray="0.62 0.326" opacity="0.85"/><line x1="8.51" y1="16.13" x2="14.19" y2="16.13" stroke="#111111" stroke-width="1.2" stroke-dasharray="0.62 0.326" opacity="0.85"/><line x1="14.19" y1="16.13" x2="15.14" y2="16.13" stroke="#111111" stroke-width="1.2" stroke-dasharray="0.62 0.326" opacity="0.85"/><line x1="15.14" y1="16.13" x2="30.27" y2="16.13" stroke="#111111" stroke-width="1.2" stroke-dasharray="0.62 0.326" opacity="0.85"/><line x1="30.27" y1="16.13" x2="31.22" y2="16.13" stroke="#111111" stroke-width="1.2" stroke-dasharray="0.62 0.326" opacity="0.85"/><line x1="31.22" y1="16.13" x2="32.16" y2="16.13" stroke="#111111" stroke-width="1.2" stroke-dasharray="0.62 0.326" opacity="0.85"/><line x1="0.00" y1="21.82" x2="2.84" y2="21.82" stroke="#0000ff" stroke-width="1.2" stroke-dasharray="0.62 0.326" opacity="0.85"/><line x1="3.78" y1="21.82" x2="7.57" y2="21.82" stroke="#111111" stroke-width="1.2" stroke-dasharray="0.62 0.326" opacity="0.85"/><line x1="7.57" y1="21.82" x2="8.51" y2="21.82" stroke="#111111" stroke-width="1.2" stroke-dasharray="0.62 0.326" opacity="0.85"/><line x1="8.51" y1="21.82" x2="9.46" y2="21.82" stroke="#111111" stroke-width="1.2" stroke-dasharray="0.62 0.326" opacity="0.85"/><line x1="9.46" y1="21.82" x2="10.41" y2="21.82" stroke="#111111" stroke-width="1.2" stroke-dasharray="0.62 0.326" opacity="0.85"/><line x1="10.41" y1="21.82" x2="11.35" y2="21.82" stroke="#111111" stroke-width="1.2" stroke-dasharray="0.62 0.326" opacity="0.85"/><line x1="1.89" y1="23.71" x2="3.78" y2="23.71" stroke="#0000ff" stroke-width="1.2" stroke-dasharray="0.62 0.326" opacity="0.85"/><line x1="4.73" y1="23.71" x2="9.46" y2="23.71" stroke="#111111" stroke-width="1.2" stroke-dasharray="0.62 0.326" opacity="0.85"/><line x1="9.46" y1="23.71" x2="10.41" y2="23.71" stroke="#111111" stroke-width="1.2" stroke-dasharray="0.62 0.326" opacity="0.85"/><line x1="10.41" y1="23.71" x2="23.65" y2="23.71" stroke="#111111" stroke-width="1.2" stroke-dasharray="0.62 0.326" opacity="0.85"/><line x1="24.60" y1="23.71" x2="27.43" y2="23.71" stroke="#0000ff" stroke-width="1.2" stroke-dasharray="0.62 0.326" opacity="0.85"/><line x1="28.38" y1="23.71" x2="33.11" y2="23.71" stroke="#111111" stroke-width="1.2" stroke-dasharray="0.62 0.326" opacity="0.85"/><line x1="33.11" y1="23.71" x2="34.06" y2="23.71" stroke="#111111" stroke-width="1.2" stroke-dasharray="0.62 0.326" opacity="0.85"/><line x1="34.06" y1="23.71" x2="41.62" y2="23.71" stroke="#111111" stroke-width="1.2" stroke-dasharray="0.62 0.326" opacity="0.85"/><line x1="41.62" y1="23.71" x2="42.57" y2="23.71" stroke="#111111" stroke-width="1.2" stroke-dasharray="0.62 0.326" opacity="0.85"/><line x1="3.78" y1="25.61" x2="8.51" y2="25.61" stroke="#0000ff" stroke-width="1.2" stroke-dasharray="0.62 0.326" opacity="0.85"/><line x1="9.46" y1="25.61" x2="18.92" y2="25.61" stroke="#111111" stroke-width="1.2" stroke-dasharray="0.62 0.326" opacity="0.85"/><line x1="18.92" y1="25.61" x2="19.87" y2="25.61" stroke="#111111" stroke-width="1.2" stroke-dasharray="0.62 0.326" opacity="0.85"/><line x1="7.57" y1="27.51" x2="11.35" y2="27.51" stroke="#a31515" stroke-width="1.2" stroke-dasharray="0.62 0.326" opacity="0.85"/><line x1="12.30" y1="27.51" x2="27.43" y2="27.51" stroke="#a31515" stroke-width="1.2" stroke-dasharray="0.62 0.326" opacity="0.85"/><line x1="28.38" y1="27.51" x2="31.22" y2="27.51" stroke="#a31515" stroke-width="1.2" stroke-dasharray="0.62 0.326" opacity="0.85"/><line x1="32.16" y1="27.51" x2="41.62" y2="27.51" stroke="#a31515" stroke-width="1.2" stroke-dasharray="0.62 0.326" opacity="0.85"/><line x1="42.57" y1="27.51" x2="47.30" y2="27.51" stroke="#a31515" stroke-width="1.2" stroke-dasharray="0.62 0.326" opacity="0.85"/><line x1="48.25" y1="27.51" x2="51.08" y2="27.51" stroke="#a31515" stroke-width="1.2" stroke-dasharray="0.62 0.326" opacity="0.85"/><line x1="52.03" y1="27.51" x2="59.60" y2="27.51" stroke="#a31515" stroke-width="1.2" stroke-dasharray="0.62 0.326" opacity="0.85"/><line x1="60.54" y1="27.51" x2="61.49" y2="27.51" stroke="#a31515" stroke-width="1.2" stroke-dasharray="0.62 0.326" opacity="0.85"/><line x1="7.57" y1="29.41" x2="18.92" y2="29.41" stroke="#a31515" stroke-width="1.2" stroke-dasharray="0.62 0.326" opacity="0.85"/><line x1="18.92" y1="29.41" x2="19.87" y2="29.41" stroke="#111111" stroke-width="1.2" stroke-dasharray="0.62 0.326" opacity="0.85"/><line x1="1.89" y1="31.30" x2="3.78" y2="31.30" stroke="#0000ff" stroke-width="1.2" stroke-dasharray="0.62 0.326" opacity="0.85"/><line x1="4.73" y1="31.30" x2="9.46" y2="31.30" stroke="#111111" stroke-width="1.2" stroke-dasharray="0.62 0.326" opacity="0.85"/><line x1="9.46" y1="31.30" x2="10.41" y2="31.30" stroke="#111111" stroke-width="1.2" stroke-dasharray="0.62 0.326" opacity="0.85"/><line x1="10.41" y1="31.30" x2="23.65" y2="31.30" stroke="#111111" stroke-width="1.2" stroke-dasharray="0.62 0.326" opacity="0.85"/><line x1="23.65" y1="31.30" x2="24.60" y2="31.30" stroke="#111111" stroke-width="1.2" stroke-dasharray="0.62 0.326" opacity="0.85"/><line x1="3.78" y1="33.20" x2="5.68" y2="33.20" stroke="#111111" stroke-width="1.2" stroke-dasharray="0.62 0.326" opacity="0.85"/><line x1="5.68" y1="33.20" x2="6.62" y2="33.20" stroke="#111111" stroke-width="1.2" stroke-dasharray="0.62 0.326" opacity="0.85"/><line x1="6.62" y1="33.20" x2="15.14" y2="33.20" stroke="#111111" stroke-width="1.2" stroke-dasharray="0.62 0.326" opacity="0.85"/><line x1="15.14" y1="33.20" x2="16.08" y2="33.20" stroke="#111111" stroke-width="1.2" stroke-dasharray="0.62 0.326" opacity="0.85"/><line x1="16.08" y1="33.20" x2="35.95" y2="33.20" stroke="#111111" stroke-width="1.2" stroke-dasharray="0.62 0.326" opacity="0.85"/><line x1="35.95" y1="33.20" x2="36.89" y2="33.20" stroke="#111111" stroke-width="1.2" stroke-dasharray="0.62 0.326" opacity="0.85"/><line x1="36.89" y1="33.20" x2="37.84" y2="33.20" stroke="#111111" stroke-width="1.2" stroke-dasharray="0.62 0.326" opacity="0.85"/><line x1="1.89" y1="35.10" x2="5.68" y2="35.10" stroke="#0000ff" stroke-width="1.2" stroke-dasharray="0.62 0.326" opacity="0.85"/><line x1="6.62" y1="35.10" x2="11.35" y2="35.10" stroke="#111111" stroke-width="1.2" stroke-dasharray="0.62 0.326" opacity="0.85"/><line x1="11.35" y1="35.10" x2="12.30" y2="35.10" stroke="#111111" stroke-width="1.2" stroke-dasharray="0.62 0.326" opacity="0.85"/><line x1="12.30" y1="35.10" x2="19.87" y2="35.10" stroke="#111111" stroke-width="1.2" stroke-dasharray="0.62 0.326" opacity="0.85"/><line x1="19.87" y1="35.10" x2="20.81" y2="35.10" stroke="#111111" stroke-width="1.2" stroke-dasharray="0.62 0.326" opacity="0.85"/><line x1="3.78" y1="36.99" x2="5.68" y2="36.99" stroke="#111111" stroke-width="1.2" stroke-dasharray="0.62 0.326" opacity="0.85"/><line x1="5.68" y1="36.99" x2="6.62" y2="36.99" stroke="#111111" stroke-width="1.2" stroke-dasharray="0.62 0.326" opacity="0.85"/><line x1="6.62" y1="36.99" x2="15.14" y2="36.99" stroke="#111111" stroke-width="1.2" stroke-dasharray="0.62 0.326" opacity="0.85"/><line x1="15.14" y1="36.99" x2="16.08" y2="36.99" stroke="#111111" stroke-width="1.2" stroke-dasharray="0.62 0.326" opacity="0.85"/><line x1="16.08" y1="36.99" x2="27.43" y2="36.99" stroke="#111111" stroke-width="1.2" stroke-dasharray="0.62 0.326" opacity="0.85"/><line x1="27.43" y1="36.99" x2="28.38" y2="36.99" stroke="#111111" stroke-width="1.2" stroke-dasharray="0.62 0.326" opacity="0.85"/><line x1="28.38" y1="36.99" x2="49.19" y2="36.99" stroke="#111111" stroke-width="1.2" stroke-dasharray="0.62 0.326" opacity="0.85"/><line x1="49.19" y1="36.99" x2="50.14" y2="36.99" stroke="#111111" stroke-width="1.2" stroke-dasharray="0.62 0.326" opacity="0.85"/><line x1="7.57" y1="38.89" x2="12.30" y2="38.89" stroke="#111111" stroke-width="1.2" stroke-dasharray="0.62 0.326" opacity="0.85"/><line x1="12.30" y1="38.89" x2="13.24" y2="38.89" stroke="#111111" stroke-width="1.2" stroke-dasharray="0.62 0.326" opacity="0.85"/><line x1="13.24" y1="38.89" x2="20.81" y2="38.89" stroke="#111111" stroke-width="1.2" stroke-dasharray="0.62 0.326" opacity="0.85"/><line x1="20.81" y1="38.89" x2="21.76" y2="38.89" stroke="#111111" stroke-width="1.2" stroke-dasharray="0.62 0.326" opacity="0.85"/><line x1="7.57" y1="40.79" x2="23.65" y2="40.79" stroke="#111111" stroke-width="1.2" stroke-dasharray="0.62 0.326" opacity="0.85"/><line x1="23.65" y1="40.79" x2="24.60" y2="40.79" stroke="#111111" stroke-width="1.2" stroke-dasharray="0.62 0.326" opacity="0.85"/><line x1="24.60" y1="40.79" x2="29.33" y2="40.79" stroke="#111111" stroke-width="1.2" stroke-dasharray="0.62 0.326" opacity="0.85"/><line x1="29.33" y1="40.79" x2="30.27" y2="40.79" stroke="#111111" stroke-width="1.2" stroke-dasharray="0.62 0.326" opacity="0.85"/><line x1="30.27" y1="40.79" x2="51.08" y2="40.79" stroke="#111111" stroke-width="1.2" stroke-dasharray="0.62 0.326" opacity="0.85"/><line x1="51.08" y1="40.79" x2="52.03" y2="40.79" stroke="#111111" stroke-width="1.2" stroke-dasharray="0.62 0.326" opacity="0.85"/><line x1="7.57" y1="42.68" x2="26.49" y2="42.68" stroke="#111111" stroke-width="1.2" stroke-dasharray="0.62 0.326" opacity="0.85"/><line x1="26.49" y1="42.68" x2="27.43" y2="42.68" stroke="#111111" stroke-width="1.2" stroke-dasharray="0.62 0.326" opacity="0.85"/><line x1="27.43" y1="42.68" x2="32.16" y2="42.68" stroke="#111111" stroke-width="1.2" stroke-dasharray="0.62 0.326" opacity="0.85"/><line x1="32.16" y1="42.68" x2="33.11" y2="42.68" stroke="#111111" stroke-width="1.2" stroke-dasharray="0.62 0.326" opacity="0.85"/><line x1="33.11" y1="42.68" x2="56.76" y2="42.68" stroke="#111111" stroke-width="1.2" stroke-dasharray="0.62 0.326" opacity="0.85"/><line x1="56.76" y1="42.68" x2="57.71" y2="42.68" stroke="#111111" stroke-width="1.2" stroke-dasharray="0.62 0.326" opacity="0.85"/><line x1="1.89" y1="46.48" x2="2.84" y2="46.48" stroke="#008000" stroke-width="1.2" stroke-dasharray="0.62 0.326" opacity="0.85"/><line x1="3.78" y1="46.48" x2="9.46" y2="46.48" stroke="#008000" stroke-width="1.2" stroke-dasharray="0.62 0.326" opacity="0.85"/><line x1="10.41" y1="46.48" x2="14.19" y2="46.48" stroke="#008000" stroke-width="1.2" stroke-dasharray="0.62 0.326" opacity="0.85"/><line x1="1.89" y1="48.38" x2="3.78" y2="48.38" stroke="#0000ff" stroke-width="1.2" stroke-dasharray="0.62 0.326" opacity="0.85"/><line x1="4.73" y1="48.38" x2="9.46" y2="48.38" stroke="#111111" stroke-width="1.2" stroke-dasharray="0.62 0.326" opacity="0.85"/><line x1="9.46" y1="48.38" x2="10.41" y2="48.38" stroke="#111111" stroke-width="1.2" stroke-dasharray="0.62 0.326" opacity="0.85"/><line x1="10.41" y1="48.38" x2="18.92" y2="48.38" stroke="#111111" stroke-width="1.2" stroke-dasharray="0.62 0.326" opacity="0.85"/><line x1="18.92" y1="48.38" x2="19.87" y2="48.38" stroke="#111111" stroke-width="1.2" stroke-dasharray="0.62 0.326" opacity="0.85"/><line x1="3.78" y1="50.27" x2="7.57" y2="50.27" stroke="#111111" stroke-width="1.2" stroke-dasharray="0.62 0.326" opacity="0.85"/><line x1="8.51" y1="50.27" x2="9.46" y2="50.27" stroke="#111111" stroke-width="1.2" stroke-dasharray="0.62 0.326" opacity="0.85"/><line x1="10.41" y1="50.27" x2="12.30" y2="50.27" stroke="#111111" stroke-width="1.2" stroke-dasharray="0.62 0.326" opacity="0.85"/><line x1="12.30" y1="50.27" x2="13.24" y2="50.27" stroke="#111111" stroke-width="1.2" stroke-dasharray="0.62 0.326" opacity="0.85"/><line x1="13.24" y1="50.27" x2="18.92" y2="50.27" stroke="#111111" stroke-width="1.2" stroke-dasharray="0.62 0.326" opacity="0.85"/><line x1="18.92" y1="50.27" x2="19.87" y2="50.27" stroke="#111111" stroke-width="1.2" stroke-dasharray="0.62 0.326" opacity="0.85"/><line x1="19.87" y1="50.27" x2="26.49" y2="50.27" stroke="#111111" stroke-width="1.2" stroke-dasharray="0.62 0.326" opacity="0.85"/><line x1="26.49" y1="50.27" x2="27.43" y2="50.27" stroke="#111111" stroke-width="1.2" stroke-dasharray="0.62 0.326" opacity="0.85"/><line x1="27.43" y1="50.27" x2="33.11" y2="50.27" stroke="#111111" stroke-width="1.2" stroke-dasharray="0.62 0.326" opacity="0.85"/><line x1="33.11" y1="50.27" x2="34.06" y2="50.27" stroke="#111111" stroke-width="1.2" stroke-dasharray="0.62 0.326" opacity="0.85"/><line x1="34.06" y1="50.27" x2="36.89" y2="50.27" stroke="#098658" stroke-width="1.2" stroke-dasharray="0.62 0.326" opacity="0.85"/><line x1="36.89" y1="50.27" x2="37.84" y2="50.27" stroke="#111111" stroke-width="1.2" stroke-dasharray="0.62 0.326" opacity="0.85"/><line x1="38.79" y1="50.27" x2="43.52" y2="50.27" stroke="#111111" stroke-width="1.2" stroke-dasharray="0.62 0.326" opacity="0.85"/><line x1="43.52" y1="50.27" x2="44.46" y2="50.27" stroke="#111111" stroke-width="1.2" stroke-dasharray="0.62 0.326" opacity="0.85"/><line x1="44.46" y1="50.27" x2="45.41" y2="50.27" stroke="#111111" stroke-width="1.2" stroke-dasharray="0.62 0.326" opacity="0.85"/><line x1="45.41" y1="50.27" x2="49.19" y2="50.27" stroke="#098658" stroke-width="1.2" stroke-dasharray="0.62 0.326" opacity="0.85"/><line x1="49.19" y1="50.27" x2="50.14" y2="50.27" stroke="#111111" stroke-width="1.2" stroke-dasharray="0.62 0.326" opacity="0.85"/><line x1="51.08" y1="50.27" x2="52.98" y2="50.27" stroke="#098658" stroke-width="1.2" stroke-dasharray="0.62 0.326" opacity="0.85"/><line x1="52.98" y1="50.27" x2="53.92" y2="50.27" stroke="#111111" stroke-width="1.2" stroke-dasharray="0.62 0.326" opacity="0.85"/><line x1="54.87" y1="50.27" x2="56.76" y2="50.27" stroke="#098658" stroke-width="1.2" stroke-dasharray="0.62 0.326" opacity="0.85"/><line x1="56.76" y1="50.27" x2="57.71" y2="50.27" stroke="#111111" stroke-width="1.2" stroke-dasharray="0.62 0.326" opacity="0.85"/><line x1="57.71" y1="50.27" x2="58.65" y2="50.27" stroke="#111111" stroke-width="1.2" stroke-dasharray="0.62 0.326" opacity="0.85"/><line x1="59.60" y1="50.27" x2="64.33" y2="50.27" stroke="#111111" stroke-width="1.2" stroke-dasharray="0.62 0.326" opacity="0.85"/><line x1="64.33" y1="50.27" x2="65.27" y2="50.27" stroke="#111111" stroke-width="1.2" stroke-dasharray="0.62 0.326" opacity="0.85"/><line x1="65.27" y1="50.27" x2="67.17" y2="50.27" stroke="#111111" stroke-width="1.2" stroke-dasharray="0.62 0.326" opacity="0.85"/><line x1="67.17" y1="50.27" x2="68.11" y2="50.27" stroke="#111111" stroke-width="1.2" stroke-dasharray="0.62 0.326" opacity="0.85"/><line x1="68.11" y1="50.27" x2="72.84" y2="50.27" stroke="#111111" stroke-width="1.2" stroke-dasharray="0.62 0.326" opacity="0.85"/><line x1="72.84" y1="50.27" x2="73.79" y2="50.27" stroke="#111111" stroke-width="1.2" stroke-dasharray="0.62 0.326" opacity="0.85"/><line x1="3.78" y1="52.17" x2="9.46" y2="52.17" stroke="#111111" stroke-width="1.2" stroke-dasharray="0.62 0.326" opacity="0.85"/><line x1="10.41" y1="52.17" x2="11.35" y2="52.17" stroke="#111111" stroke-width="1.2" stroke-dasharray="0.62 0.326" opacity="0.85"/><line x1="12.30" y1="52.17" x2="14.19" y2="52.17" stroke="#111111" stroke-width="1.2" stroke-dasharray="0.62 0.326" opacity="0.85"/><line x1="14.19" y1="52.17" x2="15.14" y2="52.17" stroke="#111111" stroke-width="1.2" stroke-dasharray="0.62 0.326" opacity="0.85"/><line x1="15.14" y1="52.17" x2="20.81" y2="52.17" stroke="#111111" stroke-width="1.2" stroke-dasharray="0.62 0.326" opacity="0.85"/><line x1="20.81" y1="52.17" x2="21.76" y2="52.17" stroke="#111111" stroke-width="1.2" stroke-dasharray="0.62 0.326" opacity="0.85"/><line x1="21.76" y1="52.17" x2="28.38" y2="52.17" stroke="#111111" stroke-width="1.2" stroke-dasharray="0.62 0.326" opacity="0.85"/><line x1="28.38" y1="52.17" x2="29.33" y2="52.17" stroke="#111111" stroke-width="1.2" stroke-dasharray="0.62 0.326" opacity="0.85"/><line x1="29.33" y1="52.17" x2="35.00" y2="52.17" stroke="#111111" stroke-width="1.2" stroke-dasharray="0.62 0.326" opacity="0.85"/><line x1="35.00" y1="52.17" x2="35.95" y2="52.17" stroke="#111111" stroke-width="1.2" stroke-dasharray="0.62 0.326" opacity="0.85"/><line x1="35.95" y1="52.17" x2="37.84" y2="52.17" stroke="#098658" stroke-width="1.2" stroke-dasharray="0.62 0.326" opacity="0.85"/><line x1="37.84" y1="52.17" x2="38.79" y2="52.17" stroke="#111111" stroke-width="1.2" stroke-dasharray="0.62 0.326" opacity="0.85"/><line x1="39.73" y1="52.17" x2="44.46" y2="52.17" stroke="#111111" stroke-width="1.2" stroke-dasharray="0.62 0.326" opacity="0.85"/><line x1="44.46" y1="52.17" x2="45.41" y2="52.17" stroke="#111111" stroke-width="1.2" stroke-dasharray="0.62 0.326" opacity="0.85"/><line x1="45.41" y1="52.17" x2="46.35" y2="52.17" stroke="#111111" stroke-width="1.2" stroke-dasharray="0.62 0.326" opacity="0.85"/><line x1="46.35" y1="52.17" x2="50.14" y2="52.17" stroke="#098658" stroke-width="1.2" stroke-dasharray="0.62 0.326" opacity="0.85"/><line x1="50.14" y1="52.17" x2="51.08" y2="52.17" stroke="#111111" stroke-width="1.2" stroke-dasharray="0.62 0.326" opacity="0.85"/><line x1="51.08" y1="52.17" x2="52.03" y2="52.17" stroke="#111111" stroke-width="1.2" stroke-dasharray="0.62 0.326" opacity="0.85"/><line x1="52.03" y1="52.17" x2="52.98" y2="52.17" stroke="#111111" stroke-width="1.2" stroke-dasharray="0.62 0.326" opacity="0.85"/><line x1="53.92" y1="52.17" x2="58.65" y2="52.17" stroke="#111111" stroke-width="1.2" stroke-dasharray="0.62 0.326" opacity="0.85"/><line x1="58.65" y1="52.17" x2="59.60" y2="52.17" stroke="#111111" stroke-width="1.2" stroke-dasharray="0.62 0.326" opacity="0.85"/><line x1="59.60" y1="52.17" x2="61.49" y2="52.17" stroke="#111111" stroke-width="1.2" stroke-dasharray="0.62 0.326" opacity="0.85"/><line x1="61.49" y1="52.17" x2="62.44" y2="52.17" stroke="#111111" stroke-width="1.2" stroke-dasharray="0.62 0.326" opacity="0.85"/><line x1="62.44" y1="52.17" x2="67.17" y2="52.17" stroke="#111111" stroke-width="1.2" stroke-dasharray="0.62 0.326" opacity="0.85"/><line x1="67.17" y1="52.17" x2="68.11" y2="52.17" stroke="#111111" stroke-width="1.2" stroke-dasharray="0.62 0.326" opacity="0.85"/><line x1="3.78" y1="54.07" x2="14.19" y2="54.07" stroke="#111111" stroke-width="1.2" stroke-dasharray="0.62 0.326" opacity="0.85"/><line x1="15.14" y1="54.07" x2="16.08" y2="54.07" stroke="#111111" stroke-width="1.2" stroke-dasharray="0.62 0.326" opacity="0.85"/><line x1="17.03" y1="54.07" x2="20.81" y2="54.07" stroke="#111111" stroke-width="1.2" stroke-dasharray="0.62 0.326" opacity="0.85"/><line x1="20.81" y1="54.07" x2="21.76" y2="54.07" stroke="#111111" stroke-width="1.2" stroke-dasharray="0.62 0.326" opacity="0.85"/><line x1="22.70" y1="54.07" x2="28.38" y2="54.07" stroke="#111111" stroke-width="1.2" stroke-dasharray="0.62 0.326" opacity="0.85"/><line x1="3.78" y1="55.96" x2="13.24" y2="55.96" stroke="#111111" stroke-width="1.2" stroke-dasharray="0.62 0.326" opacity="0.85"/><line x1="14.19" y1="55.96" x2="15.14" y2="55.96" stroke="#111111" stroke-width="1.2" stroke-dasharray="0.62 0.326" opacity="0.85"/><line x1="16.08" y1="55.96" x2="19.87" y2="55.96" stroke="#111111" stroke-width="1.2" stroke-dasharray="0.62 0.326" opacity="0.85"/><line x1="19.87" y1="55.96" x2="20.81" y2="55.96" stroke="#111111" stroke-width="1.2" stroke-dasharray="0.62 0.326" opacity="0.85"/><line x1="21.76" y1="55.96" x2="27.43" y2="55.96" stroke="#111111" stroke-width="1.2" stroke-dasharray="0.62 0.326" opacity="0.85"/><line x1="1.89" y1="57.86" x2="5.68" y2="57.86" stroke="#0000ff" stroke-width="1.2" stroke-dasharray="0.62 0.326" opacity="0.85"/><line x1="5.68" y1="57.86" x2="6.62" y2="57.86" stroke="#111111" stroke-width="1.2" stroke-dasharray="0.62 0.326" opacity="0.85"/><line x1="3.78" y1="59.76" x2="14.19" y2="59.76" stroke="#111111" stroke-width="1.2" stroke-dasharray="0.62 0.326" opacity="0.85"/><line x1="14.19" y1="59.76" x2="15.14" y2="59.76" stroke="#111111" stroke-width="1.2" stroke-dasharray="0.62 0.326" opacity="0.85"/><line x1="16.08" y1="59.76" x2="25.54" y2="59.76" stroke="#111111" stroke-width="1.2" stroke-dasharray="0.62 0.326" opacity="0.85"/><line x1="26.49" y1="59.76" x2="27.43" y2="59.76" stroke="#111111" stroke-width="1.2" stroke-dasharray="0.62 0.326" opacity="0.85"/><line x1="28.38" y1="59.76" x2="30.27" y2="59.76" stroke="#111111" stroke-width="1.2" stroke-dasharray="0.62 0.326" opacity="0.85"/><line x1="30.27" y1="59.76" x2="31.22" y2="59.76" stroke="#111111" stroke-width="1.2" stroke-dasharray="0.62 0.326" opacity="0.85"/><line x1="31.22" y1="59.76" x2="35.95" y2="59.76" stroke="#111111" stroke-width="1.2" stroke-dasharray="0.62 0.326" opacity="0.85"/><line x1="35.95" y1="59.76" x2="36.89" y2="59.76" stroke="#111111" stroke-width="1.2" stroke-dasharray="0.62 0.326" opacity="0.85"/><line x1="36.89" y1="59.76" x2="44.46" y2="59.76" stroke="#111111" stroke-width="1.2" stroke-dasharray="0.62 0.326" opacity="0.85"/><line x1="44.46" y1="59.76" x2="45.41" y2="59.76" stroke="#111111" stroke-width="1.2" stroke-dasharray="0.62 0.326" opacity="0.85"/><line x1="45.41" y1="59.76" x2="50.14" y2="59.76" stroke="#111111" stroke-width="1.2" stroke-dasharray="0.62 0.326" opacity="0.85"/><line x1="50.14" y1="59.76" x2="51.08" y2="59.76" stroke="#111111" stroke-width="1.2" stroke-dasharray="0.62 0.326" opacity="0.85"/><line x1="51.08" y1="59.76" x2="59.60" y2="59.76" stroke="#111111" stroke-width="1.2" stroke-dasharray="0.62 0.326" opacity="0.85"/><line x1="59.60" y1="59.76" x2="60.54" y2="59.76" stroke="#111111" stroke-width="1.2" stroke-dasharray="0.62 0.326" opacity="0.85"/><line x1="60.54" y1="59.76" x2="61.49" y2="59.76" stroke="#111111" stroke-width="1.2" stroke-dasharray="0.62 0.326" opacity="0.85"/><line x1="1.89" y1="63.55" x2="2.84" y2="63.55" stroke="#111111" stroke-width="1.2" stroke-dasharray="0.62 0.326" opacity="0.85"/><line x1="2.84" y1="63.55" x2="4.73" y2="63.55" stroke="#111111" stroke-width="1.2" stroke-dasharray="0.62 0.326" opacity="0.85"/><line x1="4.73" y1="63.55" x2="5.68" y2="63.55" stroke="#111111" stroke-width="1.2" stroke-dasharray="0.62 0.326" opacity="0.85"/><line x1="5.68" y1="63.55" x2="13.24" y2="63.55" stroke="#111111" stroke-width="1.2" stroke-dasharray="0.62 0.326" opacity="0.85"/><line x1="1.89" y1="65.45" x2="4.73" y2="65.45" stroke="#0000ff" stroke-width="1.2" stroke-dasharray="0.62 0.326" opacity="0.85"/><line x1="5.68" y1="65.45" x2="18.92" y2="65.45" stroke="#111111" stroke-width="1.2" stroke-dasharray="0.62 0.326" opacity="0.85"/><line x1="18.92" y1="65.45" x2="19.87" y2="65.45" stroke="#111111" stroke-width="1.2" stroke-dasharray="0.62 0.326" opacity="0.85"/><line x1="19.87" y1="65.45" x2="23.65" y2="65.45" stroke="#111111" stroke-width="1.2" stroke-dasharray="0.62 0.326" opacity="0.85"/><line x1="23.65" y1="65.45" x2="24.60" y2="65.45" stroke="#111111" stroke-width="1.2" stroke-dasharray="0.62 0.326" opacity="0.85"/><line x1="25.54" y1="65.45" x2="31.22" y2="65.45" stroke="#111111" stroke-width="1.2" stroke-dasharray="0.62 0.326" opacity="0.85"/><line x1="31.22" y1="65.45" x2="32.16" y2="65.45" stroke="#111111" stroke-width="1.2" stroke-dasharray="0.62 0.326" opacity="0.85"/><line x1="32.16" y1="65.45" x2="33.11" y2="65.45" stroke="#111111" stroke-width="1.2" stroke-dasharray="0.62 0.326" opacity="0.85"/><line x1="3.78" y1="67.34" x2="13.24" y2="67.34" stroke="#a31515" stroke-width="1.2" stroke-dasharray="0.62 0.326" opacity="0.85"/><line x1="14.19" y1="67.34" x2="17.97" y2="67.34" stroke="#a31515" stroke-width="1.2" stroke-dasharray="0.62 0.326" opacity="0.85"/><line x1="18.92" y1="67.34" x2="26.49" y2="67.34" stroke="#a31515" stroke-width="1.2" stroke-dasharray="0.62 0.326" opacity="0.85"/><line x1="27.43" y1="67.34" x2="30.27" y2="67.34" stroke="#a31515" stroke-width="1.2" stroke-dasharray="0.62 0.326" opacity="0.85"/><line x1="31.22" y1="67.34" x2="35.00" y2="67.34" stroke="#a31515" stroke-width="1.2" stroke-dasharray="0.62 0.326" opacity="0.85"/><line x1="35.95" y1="67.34" x2="42.57" y2="67.34" stroke="#a31515" stroke-width="1.2" stroke-dasharray="0.62 0.326" opacity="0.85"/><line x1="43.52" y1="67.34" x2="45.41" y2="67.34" stroke="#a31515" stroke-width="1.2" stroke-dasharray="0.62 0.326" opacity="0.85"/><line x1="46.35" y1="67.34" x2="50.14" y2="67.34" stroke="#a31515" stroke-width="1.2" stroke-dasharray="0.62 0.326" opacity="0.85"/><line x1="51.08" y1="67.34" x2="54.87" y2="67.34" stroke="#a31515" stroke-width="1.2" stroke-dasharray="0.62 0.326" opacity="0.85"/><line x1="55.81" y1="67.34" x2="58.65" y2="67.34" stroke="#a31515" stroke-width="1.2" stroke-dasharray="0.62 0.326" opacity="0.85"/><line x1="59.60" y1="67.34" x2="68.11" y2="67.34" stroke="#a31515" stroke-width="1.2" stroke-dasharray="0.62 0.326" opacity="0.85"/><line x1="3.78" y1="69.24" x2="7.57" y2="69.24" stroke="#111111" stroke-width="1.2" stroke-dasharray="0.62 0.326" opacity="0.85"/><line x1="8.51" y1="69.24" x2="9.46" y2="69.24" stroke="#111111" stroke-width="1.2" stroke-dasharray="0.62 0.326" opacity="0.85"/><line x1="10.41" y1="69.24" x2="12.30" y2="69.24" stroke="#111111" stroke-width="1.2" stroke-dasharray="0.62 0.326" opacity="0.85"/><line x1="12.30" y1="69.24" x2="13.24" y2="69.24" stroke="#111111" stroke-width="1.2" stroke-dasharray="0.62 0.326" opacity="0.85"/><line x1="13.24" y1="69.24" x2="19.87" y2="69.24" stroke="#111111" stroke-width="1.2" stroke-dasharray="0.62 0.326" opacity="0.85"/><line x1="19.87" y1="69.24" x2="20.81" y2="69.24" stroke="#111111" stroke-width="1.2" stroke-dasharray="0.62 0.326" opacity="0.85"/><line x1="20.81" y1="69.24" x2="24.60" y2="69.24" stroke="#111111" stroke-width="1.2" stroke-dasharray="0.62 0.326" opacity="0.85"/><line x1="24.60" y1="69.24" x2="25.54" y2="69.24" stroke="#111111" stroke-width="1.2" stroke-dasharray="0.62 0.326" opacity="0.85"/><line x1="26.49" y1="69.24" x2="27.43" y2="69.24" stroke="#111111" stroke-width="1.2" stroke-dasharray="0.62 0.326" opacity="0.85"/><line x1="27.43" y1="69.24" x2="28.38" y2="69.24" stroke="#111111" stroke-width="1.2" stroke-dasharray="0.62 0.326" opacity="0.85"/><line x1="28.38" y1="69.24" x2="29.33" y2="69.24" stroke="#098658" stroke-width="1.2" stroke-dasharray="0.62 0.326" opacity="0.85"/><line x1="29.33" y1="69.24" x2="30.27" y2="69.24" stroke="#111111" stroke-width="1.2" stroke-dasharray="0.62 0.326" opacity="0.85"/><line x1="31.22" y1="69.24" x2="33.11" y2="69.24" stroke="#098658" stroke-width="1.2" stroke-dasharray="0.62 0.326" opacity="0.85"/><line x1="34.06" y1="69.24" x2="35.00" y2="69.24" stroke="#111111" stroke-width="1.2" stroke-dasharray="0.62 0.326" opacity="0.85"/><line x1="35.95" y1="69.24" x2="37.84" y2="69.24" stroke="#098658" stroke-width="1.2" stroke-dasharray="0.62 0.326" opacity="0.85"/><line x1="37.84" y1="69.24" x2="38.79" y2="69.24" stroke="#111111" stroke-width="1.2" stroke-dasharray="0.62 0.326" opacity="0.85"/><line x1="38.79" y1="69.24" x2="39.73" y2="69.24" stroke="#111111" stroke-width="1.2" stroke-dasharray="0.62 0.326" opacity="0.85"/><line x1="3.78" y1="71.14" x2="7.57" y2="71.14" stroke="#111111" stroke-width="1.2" stroke-dasharray="0.62 0.326" opacity="0.85"/><line x1="8.51" y1="71.14" x2="9.46" y2="71.14" stroke="#111111" stroke-width="1.2" stroke-dasharray="0.62 0.326" opacity="0.85"/><line x1="10.41" y1="71.14" x2="12.30" y2="71.14" stroke="#111111" stroke-width="1.2" stroke-dasharray="0.62 0.326" opacity="0.85"/><line x1="12.30" y1="71.14" x2="13.24" y2="71.14" stroke="#111111" stroke-width="1.2" stroke-dasharray="0.62 0.326" opacity="0.85"/><line x1="13.24" y1="71.14" x2="17.03" y2="71.14" stroke="#111111" stroke-width="1.2" stroke-dasharray="0.62 0.326" opacity="0.85"/><line x1="17.03" y1="71.14" x2="17.97" y2="71.14" stroke="#111111" stroke-width="1.2" stroke-dasharray="0.62 0.326" opacity="0.85"/><line x1="17.97" y1="71.14" x2="21.76" y2="71.14" stroke="#111111" stroke-width="1.2" stroke-dasharray="0.62 0.326" opacity="0.85"/><line x1="21.76" y1="71.14" x2="22.70" y2="71.14" stroke="#111111" stroke-width="1.2" stroke-dasharray="0.62 0.326" opacity="0.85"/><line x1="23.65" y1="71.14" x2="25.54" y2="71.14" stroke="#111111" stroke-width="1.2" stroke-dasharray="0.62 0.326" opacity="0.85"/><line x1="25.54" y1="71.14" x2="26.49" y2="71.14" stroke="#111111" stroke-width="1.2" stroke-dasharray="0.62 0.326" opacity="0.85"/><line x1="26.49" y1="71.14" x2="33.11" y2="71.14" stroke="#111111" stroke-width="1.2" stroke-dasharray="0.62 0.326" opacity="0.85"/><line x1="33.11" y1="71.14" x2="34.06" y2="71.14" stroke="#111111" stroke-width="1.2" stroke-dasharray="0.62 0.326" opacity="0.85"/><line x1="35.00" y1="71.14" x2="35.95" y2="71.14" stroke="#111111" stroke-width="1.2" stroke-dasharray="0.62 0.326" opacity="0.85"/><line x1="36.89" y1="71.14" x2="41.62" y2="71.14" stroke="#098658" stroke-width="1.2" stroke-dasharray="0.62 0.326" opacity="0.85"/><line x1="3.78" y1="73.04" x2="9.46" y2="73.04" stroke="#111111" stroke-width="1.2" stroke-dasharray="0.62 0.326" opacity="0.85"/><line x1="10.41" y1="73.04" x2="11.35" y2="73.04" stroke="#111111" stroke-width="1.2" stroke-dasharray="0.62 0.326" opacity="0.85"/><line x1="12.30" y1="73.04" x2="14.19" y2="73.04" stroke="#111111" stroke-width="1.2" stroke-dasharray="0.62 0.326" opacity="0.85"/><line x1="14.19" y1="73.04" x2="15.14" y2="73.04" stroke="#111111" stroke-width="1.2" stroke-dasharray="0.62 0.326" opacity="0.85"/><line x1="15.14" y1="73.04" x2="21.76" y2="73.04" stroke="#111111" stroke-width="1.2" stroke-dasharray="0.62 0.326" opacity="0.85"/><line x1="21.76" y1="73.04" x2="22.70" y2="73.04" stroke="#111111" stroke-width="1.2" stroke-dasharray="0.62 0.326" opacity="0.85"/><line x1="22.70" y1="73.04" x2="28.38" y2="73.04" stroke="#111111" stroke-width="1.2" stroke-dasharray="0.62 0.326" opacity="0.85"/><line x1="28.38" y1="73.04" x2="29.33" y2="73.04" stroke="#111111" stroke-width="1.2" stroke-dasharray="0.62 0.326" opacity="0.85"/><line x1="30.27" y1="73.04" x2="35.00" y2="73.04" stroke="#111111" stroke-width="1.2" stroke-dasharray="0.62 0.326" opacity="0.85"/><line x1="35.00" y1="73.04" x2="35.95" y2="73.04" stroke="#111111" stroke-width="1.2" stroke-dasharray="0.62 0.326" opacity="0.85"/><line x1="35.95" y1="73.04" x2="37.84" y2="73.04" stroke="#098658" stroke-width="1.2" stroke-dasharray="0.62 0.326" opacity="0.85"/><line x1="37.84" y1="73.04" x2="38.79" y2="73.04" stroke="#111111" stroke-width="1.2" stroke-dasharray="0.62 0.326" opacity="0.85"/><line x1="39.73" y1="73.04" x2="44.46" y2="73.04" stroke="#111111" stroke-width="1.2" stroke-dasharray="0.62 0.326" opacity="0.85"/><line x1="44.46" y1="73.04" x2="45.41" y2="73.04" stroke="#111111" stroke-width="1.2" stroke-dasharray="0.62 0.326" opacity="0.85"/><line x1="45.41" y1="73.04" x2="47.30" y2="73.04" stroke="#111111" stroke-width="1.2" stroke-dasharray="0.62 0.326" opacity="0.85"/><line x1="47.30" y1="73.04" x2="48.25" y2="73.04" stroke="#111111" stroke-width="1.2" stroke-dasharray="0.62 0.326" opacity="0.85"/><line x1="48.25" y1="73.04" x2="54.87" y2="73.04" stroke="#111111" stroke-width="1.2" stroke-dasharray="0.62 0.326" opacity="0.85"/><line x1="54.87" y1="73.04" x2="55.81" y2="73.04" stroke="#111111" stroke-width="1.2" stroke-dasharray="0.62 0.326" opacity="0.85"/><line x1="3.78" y1="74.93" x2="9.46" y2="74.93" stroke="#0000ff" stroke-width="1.2" stroke-dasharray="0.62 0.326" opacity="0.85"/><line x1="10.41" y1="74.93" x2="14.19" y2="74.93" stroke="#111111" stroke-width="1.2" stroke-dasharray="0.62 0.326" opacity="0.85"/><line x1="14.19" y1="74.93" x2="15.14" y2="74.93" stroke="#111111" stroke-width="1.2" stroke-dasharray="0.62 0.326" opacity="0.85"/><line x1="16.08" y1="74.93" x2="21.76" y2="74.93" stroke="#111111" stroke-width="1.2" stroke-dasharray="0.62 0.326" opacity="0.85"/><line x1="1.89" y1="78.73" x2="9.46" y2="78.73" stroke="#111111" stroke-width="1.2" stroke-dasharray="0.62 0.326" opacity="0.85"/><line x1="10.41" y1="78.73" x2="11.35" y2="78.73" stroke="#111111" stroke-width="1.2" stroke-dasharray="0.62 0.326" opacity="0.85"/><line x1="12.30" y1="78.73" x2="14.19" y2="78.73" stroke="#111111" stroke-width="1.2" stroke-dasharray="0.62 0.326" opacity="0.85"/><line x1="14.19" y1="78.73" x2="15.14" y2="78.73" stroke="#111111" stroke-width="1.2" stroke-dasharray="0.62 0.326" opacity="0.85"/><line x1="15.14" y1="78.73" x2="18.92" y2="78.73" stroke="#111111" stroke-width="1.2" stroke-dasharray="0.62 0.326" opacity="0.85"/><line x1="18.92" y1="78.73" x2="19.87" y2="78.73" stroke="#111111" stroke-width="1.2" stroke-dasharray="0.62 0.326" opacity="0.85"/><line x1="19.87" y1="78.73" x2="26.49" y2="78.73" stroke="#111111" stroke-width="1.2" stroke-dasharray="0.62 0.326" opacity="0.85"/><line x1="26.49" y1="78.73" x2="27.43" y2="78.73" stroke="#111111" stroke-width="1.2" stroke-dasharray="0.62 0.326" opacity="0.85"/><line x1="27.43" y1="78.73" x2="44.46" y2="78.73" stroke="#111111" stroke-width="1.2" stroke-dasharray="0.62 0.326" opacity="0.85"/><line x1="44.46" y1="78.73" x2="45.41" y2="78.73" stroke="#111111" stroke-width="1.2" stroke-dasharray="0.62 0.326" opacity="0.85"/><line x1="45.41" y1="78.73" x2="55.81" y2="78.73" stroke="#111111" stroke-width="1.2" stroke-dasharray="0.62 0.326" opacity="0.85"/><line x1="55.81" y1="78.73" x2="56.76" y2="78.73" stroke="#111111" stroke-width="1.2" stroke-dasharray="0.62 0.326" opacity="0.85"/><line x1="56.76" y1="78.73" x2="57.71" y2="78.73" stroke="#111111" stroke-width="1.2" stroke-dasharray="0.62 0.326" opacity="0.85"/><line x1="57.71" y1="78.73" x2="64.33" y2="78.73" stroke="#111111" stroke-width="1.2" stroke-dasharray="0.62 0.326" opacity="0.85"/><line x1="64.33" y1="78.73" x2="65.27" y2="78.73" stroke="#111111" stroke-width="1.2" stroke-dasharray="0.62 0.326" opacity="0.85"/><line x1="5.68" y1="80.62" x2="10.41" y2="80.62" stroke="#111111" stroke-width="1.2" stroke-dasharray="0.62 0.326" opacity="0.85"/><line x1="10.41" y1="80.62" x2="11.35" y2="80.62" stroke="#111111" stroke-width="1.2" stroke-dasharray="0.62 0.326" opacity="0.85"/><line x1="11.35" y1="80.62" x2="26.49" y2="80.62" stroke="#111111" stroke-width="1.2" stroke-dasharray="0.62 0.326" opacity="0.85"/><line x1="27.43" y1="80.62" x2="28.38" y2="80.62" stroke="#111111" stroke-width="1.2" stroke-dasharray="0.62 0.326" opacity="0.85"/><line x1="29.33" y1="80.62" x2="34.06" y2="80.62" stroke="#111111" stroke-width="1.2" stroke-dasharray="0.62 0.326" opacity="0.85"/><line x1="34.06" y1="80.62" x2="35.00" y2="80.62" stroke="#111111" stroke-width="1.2" stroke-dasharray="0.62 0.326" opacity="0.85"/><line x1="35.00" y1="80.62" x2="43.52" y2="80.62" stroke="#111111" stroke-width="1.2" stroke-dasharray="0.62 0.326" opacity="0.85"/><line x1="43.52" y1="80.62" x2="44.46" y2="80.62" stroke="#111111" stroke-width="1.2" stroke-dasharray="0.62 0.326" opacity="0.85"/><line x1="5.68" y1="82.52" x2="9.46" y2="82.52" stroke="#111111" stroke-width="1.2" stroke-dasharray="0.62 0.326" opacity="0.85"/><line x1="9.46" y1="82.52" x2="10.41" y2="82.52" stroke="#111111" stroke-width="1.2" stroke-dasharray="0.62 0.326" opacity="0.85"/><line x1="10.41" y1="82.52" x2="18.92" y2="82.52" stroke="#111111" stroke-width="1.2" stroke-dasharray="0.62 0.326" opacity="0.85"/><line x1="18.92" y1="82.52" x2="19.87" y2="82.52" stroke="#111111" stroke-width="1.2" stroke-dasharray="0.62 0.326" opacity="0.85"/><line x1="19.87" y1="82.52" x2="20.81" y2="82.52" stroke="#111111" stroke-width="1.2" stroke-dasharray="0.62 0.326" opacity="0.85"/><line x1="20.81" y1="82.52" x2="25.54" y2="82.52" stroke="#111111" stroke-width="1.2" stroke-dasharray="0.62 0.326" opacity="0.85"/><line x1="25.54" y1="82.52" x2="26.49" y2="82.52" stroke="#111111" stroke-width="1.2" stroke-dasharray="0.62 0.326" opacity="0.85"/><line x1="26.49" y1="82.52" x2="31.22" y2="82.52" stroke="#111111" stroke-width="1.2" stroke-dasharray="0.62 0.326" opacity="0.85"/><line x1="31.22" y1="82.52" x2="32.16" y2="82.52" stroke="#111111" stroke-width="1.2" stroke-dasharray="0.62 0.326" opacity="0.85"/><line x1="32.16" y1="82.52" x2="47.30" y2="82.52" stroke="#111111" stroke-width="1.2" stroke-dasharray="0.62 0.326" opacity="0.85"/><line x1="47.30" y1="82.52" x2="48.25" y2="82.52" stroke="#111111" stroke-width="1.2" stroke-dasharray="0.62 0.326" opacity="0.85"/><line x1="1.89" y1="84.42" x2="9.46" y2="84.42" stroke="#111111" stroke-width="1.2" stroke-dasharray="0.62 0.326" opacity="0.85"/><line x1="10.41" y1="84.42" x2="11.35" y2="84.42" stroke="#111111" stroke-width="1.2" stroke-dasharray="0.62 0.326" opacity="0.85"/><line x1="12.30" y1="84.42" x2="19.87" y2="84.42" stroke="#111111" stroke-width="1.2" stroke-dasharray="0.62 0.326" opacity="0.85"/><line x1="19.87" y1="84.42" x2="20.81" y2="84.42" stroke="#111111" stroke-width="1.2" stroke-dasharray="0.62 0.326" opacity="0.85"/><line x1="20.81" y1="84.42" x2="23.65" y2="84.42" stroke="#111111" stroke-width="1.2" stroke-dasharray="0.62 0.326" opacity="0.85"/><line x1="23.65" y1="84.42" x2="24.60" y2="84.42" stroke="#111111" stroke-width="1.2" stroke-dasharray="0.62 0.326" opacity="0.85"/><line x1="24.60" y1="84.42" x2="37.84" y2="84.42" stroke="#111111" stroke-width="1.2" stroke-dasharray="0.62 0.326" opacity="0.85"/><line x1="37.84" y1="84.42" x2="38.79" y2="84.42" stroke="#111111" stroke-width="1.2" stroke-dasharray="0.62 0.326" opacity="0.85"/><line x1="1.89" y1="88.21" x2="8.51" y2="88.21" stroke="#111111" stroke-width="1.2" stroke-dasharray="0.62 0.326" opacity="0.85"/><line x1="9.46" y1="88.21" x2="10.41" y2="88.21" stroke="#111111" stroke-width="1.2" stroke-dasharray="0.62 0.326" opacity="0.85"/><line x1="11.35" y1="88.21" x2="13.24" y2="88.21" stroke="#111111" stroke-width="1.2" stroke-dasharray="0.62 0.326" opacity="0.85"/><line x1="13.24" y1="88.21" x2="14.19" y2="88.21" stroke="#111111" stroke-width="1.2" stroke-dasharray="0.62 0.326" opacity="0.85"/><line x1="14.19" y1="88.21" x2="17.97" y2="88.21" stroke="#111111" stroke-width="1.2" stroke-dasharray="0.62 0.326" opacity="0.85"/><line x1="17.97" y1="88.21" x2="18.92" y2="88.21" stroke="#111111" stroke-width="1.2" stroke-dasharray="0.62 0.326" opacity="0.85"/><line x1="18.92" y1="88.21" x2="25.54" y2="88.21" stroke="#111111" stroke-width="1.2" stroke-dasharray="0.62 0.326" opacity="0.85"/><line x1="25.54" y1="88.21" x2="26.49" y2="88.21" stroke="#111111" stroke-width="1.2" stroke-dasharray="0.62 0.326" opacity="0.85"/><line x1="26.49" y1="88.21" x2="43.52" y2="88.21" stroke="#111111" stroke-width="1.2" stroke-dasharray="0.62 0.326" opacity="0.85"/><line x1="43.52" y1="88.21" x2="44.46" y2="88.21" stroke="#111111" stroke-width="1.2" stroke-dasharray="0.62 0.326" opacity="0.85"/><line x1="44.46" y1="88.21" x2="53.92" y2="88.21" stroke="#111111" stroke-width="1.2" stroke-dasharray="0.62 0.326" opacity="0.85"/><line x1="53.92" y1="88.21" x2="54.87" y2="88.21" stroke="#111111" stroke-width="1.2" stroke-dasharray="0.62 0.326" opacity="0.85"/><line x1="54.87" y1="88.21" x2="55.81" y2="88.21" stroke="#111111" stroke-width="1.2" stroke-dasharray="0.62 0.326" opacity="0.85"/><line x1="55.81" y1="88.21" x2="61.49" y2="88.21" stroke="#111111" stroke-width="1.2" stroke-dasharray="0.62 0.326" opacity="0.85"/><line x1="61.49" y1="88.21" x2="62.44" y2="88.21" stroke="#111111" stroke-width="1.2" stroke-dasharray="0.62 0.326" opacity="0.85"/><line x1="62.44" y1="88.21" x2="63.38" y2="88.21" stroke="#111111" stroke-width="1.2" stroke-dasharray="0.62 0.326" opacity="0.85"/><line x1="63.38" y1="88.21" x2="64.33" y2="88.21" stroke="#111111" stroke-width="1.2" stroke-dasharray="0.62 0.326" opacity="0.85"/><line x1="64.33" y1="88.21" x2="69.06" y2="88.21" stroke="#111111" stroke-width="1.2" stroke-dasharray="0.62 0.326" opacity="0.85"/><line x1="69.06" y1="88.21" x2="70.00" y2="88.21" stroke="#111111" stroke-width="1.2" stroke-dasharray="0.62 0.326" opacity="0.85"/><line x1="5.68" y1="90.11" x2="8.51" y2="90.11" stroke="#0000ff" stroke-width="1.2" stroke-dasharray="0.62 0.326" opacity="0.85"/><line x1="8.51" y1="90.11" x2="9.46" y2="90.11" stroke="#111111" stroke-width="1.2" stroke-dasharray="0.62 0.326" opacity="0.85"/><line x1="9.46" y1="90.11" x2="18.92" y2="90.11" stroke="#111111" stroke-width="1.2" stroke-dasharray="0.62 0.326" opacity="0.85"/><line x1="18.92" y1="90.11" x2="19.87" y2="90.11" stroke="#111111" stroke-width="1.2" stroke-dasharray="0.62 0.326" opacity="0.85"/><line x1="19.87" y1="90.11" x2="20.81" y2="90.11" stroke="#098658" stroke-width="1.2" stroke-dasharray="0.62 0.326" opacity="0.85"/><line x1="20.81" y1="90.11" x2="21.76" y2="90.11" stroke="#111111" stroke-width="1.2" stroke-dasharray="0.62 0.326" opacity="0.85"/><line x1="21.76" y1="90.11" x2="22.70" y2="90.11" stroke="#111111" stroke-width="1.2" stroke-dasharray="0.62 0.326" opacity="0.85"/><line x1="22.70" y1="90.11" x2="23.65" y2="90.11" stroke="#111111" stroke-width="1.2" stroke-dasharray="0.62 0.326" opacity="0.85"/><line x1="1.89" y1="92.01" x2="8.51" y2="92.01" stroke="#111111" stroke-width="1.2" stroke-dasharray="0.62 0.326" opacity="0.85"/><line x1="9.46" y1="92.01" x2="10.41" y2="92.01" stroke="#111111" stroke-width="1.2" stroke-dasharray="0.62 0.326" opacity="0.85"/><line x1="11.35" y1="92.01" x2="17.97" y2="92.01" stroke="#111111" stroke-width="1.2" stroke-dasharray="0.62 0.326" opacity="0.85"/><line x1="17.97" y1="92.01" x2="18.92" y2="92.01" stroke="#111111" stroke-width="1.2" stroke-dasharray="0.62 0.326" opacity="0.85"/><line x1="18.92" y1="92.01" x2="21.76" y2="92.01" stroke="#111111" stroke-width="1.2" stroke-dasharray="0.62 0.326" opacity="0.85"/><line x1="21.76" y1="92.01" x2="22.70" y2="92.01" stroke="#111111" stroke-width="1.2" stroke-dasharray="0.62 0.326" opacity="0.85"/><line x1="22.70" y1="92.01" x2="35.95" y2="92.01" stroke="#111111" stroke-width="1.2" stroke-dasharray="0.62 0.326" opacity="0.85"/><line x1="35.95" y1="92.01" x2="36.89" y2="92.01" stroke="#111111" stroke-width="1.2" stroke-dasharray="0.62 0.326" opacity="0.85"/><line x1="1.89" y1="95.80" x2="4.73" y2="95.80" stroke="#0000ff" stroke-width="1.2" stroke-dasharray="0.62 0.326" opacity="0.85"/><line x1="5.68" y1="95.80" x2="21.76" y2="95.80" stroke="#111111" stroke-width="1.2" stroke-dasharray="0.62 0.326" opacity="0.85"/><line x1="21.76" y1="95.80" x2="22.70" y2="95.80" stroke="#111111" stroke-width="1.2" stroke-dasharray="0.62 0.326" opacity="0.85"/><line x1="22.70" y1="95.80" x2="31.22" y2="95.80" stroke="#111111" stroke-width="1.2" stroke-dasharray="0.62 0.326" opacity="0.85"/><line x1="31.22" y1="95.80" x2="32.16" y2="95.80" stroke="#111111" stroke-width="1.2" stroke-dasharray="0.62 0.326" opacity="0.85"/><line x1="33.11" y1="95.80" x2="42.57" y2="95.80" stroke="#111111" stroke-width="1.2" stroke-dasharray="0.62 0.326" opacity="0.85"/><line x1="42.57" y1="95.80" x2="43.52" y2="95.80" stroke="#111111" stroke-width="1.2" stroke-dasharray="0.62 0.326" opacity="0.85"/><line x1="43.52" y1="95.80" x2="44.46" y2="95.80" stroke="#111111" stroke-width="1.2" stroke-dasharray="0.62 0.326" opacity="0.85"/><line x1="3.78" y1="97.70" x2="17.03" y2="97.70" stroke="#a31515" stroke-width="1.2" stroke-dasharray="0.62 0.326" opacity="0.85"/><line x1="17.97" y1="97.70" x2="20.81" y2="97.70" stroke="#a31515" stroke-width="1.2" stroke-dasharray="0.62 0.326" opacity="0.85"/><line x1="21.76" y1="97.70" x2="31.22" y2="97.70" stroke="#a31515" stroke-width="1.2" stroke-dasharray="0.62 0.326" opacity="0.85"/><line x1="32.16" y1="97.70" x2="35.00" y2="97.70" stroke="#a31515" stroke-width="1.2" stroke-dasharray="0.62 0.326" opacity="0.85"/><line x1="35.95" y1="97.70" x2="36.89" y2="97.70" stroke="#a31515" stroke-width="1.2" stroke-dasharray="0.62 0.326" opacity="0.85"/><line x1="37.84" y1="97.70" x2="43.52" y2="97.70" stroke="#a31515" stroke-width="1.2" stroke-dasharray="0.62 0.326" opacity="0.85"/><line x1="44.46" y1="97.70" x2="49.19" y2="97.70" stroke="#a31515" stroke-width="1.2" stroke-dasharray="0.62 0.326" opacity="0.85"/><line x1="50.14" y1="97.70" x2="58.65" y2="97.70" stroke="#a31515" stroke-width="1.2" stroke-dasharray="0.62 0.326" opacity="0.85"/><line x1="3.78" y1="99.59" x2="17.03" y2="99.59" stroke="#111111" stroke-width="1.2" stroke-dasharray="0.62 0.326" opacity="0.85"/><line x1="17.97" y1="99.59" x2="18.92" y2="99.59" stroke="#111111" stroke-width="1.2" stroke-dasharray="0.62 0.326" opacity="0.85"/><line x1="19.87" y1="99.59" x2="21.76" y2="99.59" stroke="#111111" stroke-width="1.2" stroke-dasharray="0.62 0.326" opacity="0.85"/><line x1="21.76" y1="99.59" x2="22.70" y2="99.59" stroke="#111111" stroke-width="1.2" stroke-dasharray="0.62 0.326" opacity="0.85"/><line x1="22.70" y1="99.59" x2="27.43" y2="99.59" stroke="#111111" stroke-width="1.2" stroke-dasharray="0.62 0.326" opacity="0.85"/><line x1="27.43" y1="99.59" x2="28.38" y2="99.59" stroke="#111111" stroke-width="1.2" stroke-dasharray="0.62 0.326" opacity="0.85"/><line x1="28.38" y1="99.59" x2="39.73" y2="99.59" stroke="#111111" stroke-width="1.2" stroke-dasharray="0.62 0.326" opacity="0.85"/><line x1="39.73" y1="99.59" x2="40.68" y2="99.59" stroke="#111111" stroke-width="1.2" stroke-dasharray="0.62 0.326" opacity="0.85"/><line x1="40.68" y1="99.59" x2="54.87" y2="99.59" stroke="#111111" stroke-width="1.2" stroke-dasharray="0.62 0.326" opacity="0.85"/><line x1="54.87" y1="99.59" x2="55.81" y2="99.59" stroke="#111111" stroke-width="1.2" stroke-dasharray="0.62 0.326" opacity="0.85"/><line x1="7.57" y1="101.49" x2="11.35" y2="101.49" stroke="#111111" stroke-width="1.2" stroke-dasharray="0.62 0.326" opacity="0.85"/><line x1="11.35" y1="101.49" x2="12.30" y2="101.49" stroke="#111111" stroke-width="1.2" stroke-dasharray="0.62 0.326" opacity="0.85"/><line x1="12.30" y1="101.49" x2="15.14" y2="101.49" stroke="#098658" stroke-width="1.2" stroke-dasharray="0.62 0.326" opacity="0.85"/><line x1="15.14" y1="101.49" x2="16.08" y2="101.49" stroke="#111111" stroke-width="1.2" stroke-dasharray="0.62 0.326" opacity="0.85"/><line x1="17.03" y1="101.49" x2="22.70" y2="101.49" stroke="#111111" stroke-width="1.2" stroke-dasharray="0.62 0.326" opacity="0.85"/><line x1="22.70" y1="101.49" x2="23.65" y2="101.49" stroke="#111111" stroke-width="1.2" stroke-dasharray="0.62 0.326" opacity="0.85"/><line x1="23.65" y1="101.49" x2="26.49" y2="101.49" stroke="#098658" stroke-width="1.2" stroke-dasharray="0.62 0.326" opacity="0.85"/><line x1="26.49" y1="101.49" x2="27.43" y2="101.49" stroke="#111111" stroke-width="1.2" stroke-dasharray="0.62 0.326" opacity="0.85"/><line x1="28.38" y1="101.49" x2="32.16" y2="101.49" stroke="#111111" stroke-width="1.2" stroke-dasharray="0.62 0.326" opacity="0.85"/><line x1="32.16" y1="101.49" x2="33.11" y2="101.49" stroke="#111111" stroke-width="1.2" stroke-dasharray="0.62 0.326" opacity="0.85"/><line x1="33.11" y1="101.49" x2="41.62" y2="101.49" stroke="#111111" stroke-width="1.2" stroke-dasharray="0.62 0.326" opacity="0.85"/><line x1="41.62" y1="101.49" x2="42.57" y2="101.49" stroke="#111111" stroke-width="1.2" stroke-dasharray="0.62 0.326" opacity="0.85"/><line x1="3.78" y1="103.39" x2="9.46" y2="103.39" stroke="#111111" stroke-width="1.2" stroke-dasharray="0.62 0.326" opacity="0.85"/><line x1="10.41" y1="103.39" x2="11.35" y2="103.39" stroke="#111111" stroke-width="1.2" stroke-dasharray="0.62 0.326" opacity="0.85"/><line x1="12.30" y1="103.39" x2="14.19" y2="103.39" stroke="#111111" stroke-width="1.2" stroke-dasharray="0.62 0.326" opacity="0.85"/><line x1="14.19" y1="103.39" x2="15.14" y2="103.39" stroke="#111111" stroke-width="1.2" stroke-dasharray="0.62 0.326" opacity="0.85"/><line x1="15.14" y1="103.39" x2="22.70" y2="103.39" stroke="#111111" stroke-width="1.2" stroke-dasharray="0.62 0.326" opacity="0.85"/><line x1="22.70" y1="103.39" x2="23.65" y2="103.39" stroke="#111111" stroke-width="1.2" stroke-dasharray="0.62 0.326" opacity="0.85"/><line x1="23.65" y1="103.39" x2="36.89" y2="103.39" stroke="#111111" stroke-width="1.2" stroke-dasharray="0.62 0.326" opacity="0.85"/><line x1="36.89" y1="103.39" x2="37.84" y2="103.39" stroke="#111111" stroke-width="1.2" stroke-dasharray="0.62 0.326" opacity="0.85"/><line x1="37.84" y1="103.39" x2="38.79" y2="103.39" stroke="#111111" stroke-width="1.2" stroke-dasharray="0.62 0.326" opacity="0.85"/><line x1="38.79" y1="103.39" x2="47.30" y2="103.39" stroke="#111111" stroke-width="1.2" stroke-dasharray="0.62 0.326" opacity="0.85"/><line x1="47.30" y1="103.39" x2="48.25" y2="103.39" stroke="#111111" stroke-width="1.2" stroke-dasharray="0.62 0.326" opacity="0.85"/><line x1="49.19" y1="103.39" x2="58.65" y2="103.39" stroke="#111111" stroke-width="1.2" stroke-dasharray="0.62 0.326" opacity="0.85"/><line x1="58.65" y1="103.39" x2="59.60" y2="103.39" stroke="#111111" stroke-width="1.2" stroke-dasharray="0.62 0.326" opacity="0.85"/><line x1="59.60" y1="103.39" x2="60.54" y2="103.39" stroke="#111111" stroke-width="1.2" stroke-dasharray="0.62 0.326" opacity="0.85"/><line x1="60.54" y1="103.39" x2="61.49" y2="103.39" stroke="#111111" stroke-width="1.2" stroke-dasharray="0.62 0.326" opacity="0.85"/><line x1="3.78" y1="105.29" x2="7.57" y2="105.29" stroke="#111111" stroke-width="1.2" stroke-dasharray="0.62 0.326" opacity="0.85"/><line x1="8.51" y1="105.29" x2="9.46" y2="105.29" stroke="#111111" stroke-width="1.2" stroke-dasharray="0.62 0.326" opacity="0.85"/><line x1="10.41" y1="105.29" x2="12.30" y2="105.29" stroke="#111111" stroke-width="1.2" stroke-dasharray="0.62 0.326" opacity="0.85"/><line x1="12.30" y1="105.29" x2="13.24" y2="105.29" stroke="#111111" stroke-width="1.2" stroke-dasharray="0.62 0.326" opacity="0.85"/><line x1="13.24" y1="105.29" x2="20.81" y2="105.29" stroke="#111111" stroke-width="1.2" stroke-dasharray="0.62 0.326" opacity="0.85"/><line x1="20.81" y1="105.29" x2="21.76" y2="105.29" stroke="#111111" stroke-width="1.2" stroke-dasharray="0.62 0.326" opacity="0.85"/><line x1="21.76" y1="105.29" x2="23.65" y2="105.29" stroke="#111111" stroke-width="1.2" stroke-dasharray="0.62 0.326" opacity="0.85"/><line x1="23.65" y1="105.29" x2="24.60" y2="105.29" stroke="#111111" stroke-width="1.2" stroke-dasharray="0.62 0.326" opacity="0.85"/><line x1="24.60" y1="105.29" x2="32.16" y2="105.29" stroke="#111111" stroke-width="1.2" stroke-dasharray="0.62 0.326" opacity="0.85"/><line x1="32.16" y1="105.29" x2="33.11" y2="105.29" stroke="#111111" stroke-width="1.2" stroke-dasharray="0.62 0.326" opacity="0.85"/><line x1="33.11" y1="105.29" x2="35.95" y2="105.29" stroke="#098658" stroke-width="1.2" stroke-dasharray="0.62 0.326" opacity="0.85"/><line x1="35.95" y1="105.29" x2="36.89" y2="105.29" stroke="#111111" stroke-width="1.2" stroke-dasharray="0.62 0.326" opacity="0.85"/><line x1="37.84" y1="105.29" x2="42.57" y2="105.29" stroke="#111111" stroke-width="1.2" stroke-dasharray="0.62 0.326" opacity="0.85"/><line x1="42.57" y1="105.29" x2="43.52" y2="105.29" stroke="#111111" stroke-width="1.2" stroke-dasharray="0.62 0.326" opacity="0.85"/><line x1="43.52" y1="105.29" x2="44.46" y2="105.29" stroke="#111111" stroke-width="1.2" stroke-dasharray="0.62 0.326" opacity="0.85"/><line x1="44.46" y1="105.29" x2="53.92" y2="105.29" stroke="#111111" stroke-width="1.2" stroke-dasharray="0.62 0.326" opacity="0.85"/><line x1="53.92" y1="105.29" x2="54.87" y2="105.29" stroke="#111111" stroke-width="1.2" stroke-dasharray="0.62 0.326" opacity="0.85"/><line x1="54.87" y1="105.29" x2="55.81" y2="105.29" stroke="#111111" stroke-width="1.2" stroke-dasharray="0.62 0.326" opacity="0.85"/><line x1="55.81" y1="105.29" x2="56.76" y2="105.29" stroke="#111111" stroke-width="1.2" stroke-dasharray="0.62 0.326" opacity="0.85"/><line x1="3.78" y1="109.08" x2="9.46" y2="109.08" stroke="#0000ff" stroke-width="1.2" stroke-dasharray="0.62 0.326" opacity="0.85"/><line x1="10.41" y1="109.08" x2="16.08" y2="109.08" stroke="#111111" stroke-width="1.2" stroke-dasharray="0.62 0.326" opacity="0.85"/><line x1="16.08" y1="109.08" x2="17.03" y2="109.08" stroke="#111111" stroke-width="1.2" stroke-dasharray="0.62 0.326" opacity="0.85"/><line x1="17.97" y1="109.08" x2="21.76" y2="109.08" stroke="#111111" stroke-width="1.2" stroke-dasharray="0.62 0.326" opacity="0.85"/><line x1="1.89" y1="112.87" x2="2.84" y2="112.87" stroke="#111111" stroke-width="1.2" stroke-dasharray="0.62 0.326" opacity="0.85"/><line x1="2.84" y1="112.87" x2="4.73" y2="112.87" stroke="#111111" stroke-width="1.2" stroke-dasharray="0.62 0.326" opacity="0.85"/><line x1="4.73" y1="112.87" x2="5.68" y2="112.87" stroke="#111111" stroke-width="1.2" stroke-dasharray="0.62 0.326" opacity="0.85"/><line x1="5.68" y1="112.87" x2="13.24" y2="112.87" stroke="#111111" stroke-width="1.2" stroke-dasharray="0.62 0.326" opacity="0.85"/><line x1="1.89" y1="114.77" x2="4.73" y2="114.77" stroke="#0000ff" stroke-width="1.2" stroke-dasharray="0.62 0.326" opacity="0.85"/><line x1="5.68" y1="114.77" x2="16.08" y2="114.77" stroke="#111111" stroke-width="1.2" stroke-dasharray="0.62 0.326" opacity="0.85"/><line x1="16.08" y1="114.77" x2="17.03" y2="114.77" stroke="#111111" stroke-width="1.2" stroke-dasharray="0.62 0.326" opacity="0.85"/><line x1="17.03" y1="114.77" x2="23.65" y2="114.77" stroke="#111111" stroke-width="1.2" stroke-dasharray="0.62 0.326" opacity="0.85"/><line x1="23.65" y1="114.77" x2="24.60" y2="114.77" stroke="#111111" stroke-width="1.2" stroke-dasharray="0.62 0.326" opacity="0.85"/><line x1="25.54" y1="114.77" x2="36.89" y2="114.77" stroke="#111111" stroke-width="1.2" stroke-dasharray="0.62 0.326" opacity="0.85"/><line x1="36.89" y1="114.77" x2="37.84" y2="114.77" stroke="#111111" stroke-width="1.2" stroke-dasharray="0.62 0.326" opacity="0.85"/><line x1="38.79" y1="114.77" x2="41.62" y2="114.77" stroke="#111111" stroke-width="1.2" stroke-dasharray="0.62 0.326" opacity="0.85"/><line x1="41.62" y1="114.77" x2="42.57" y2="114.77" stroke="#111111" stroke-width="1.2" stroke-dasharray="0.62 0.326" opacity="0.85"/><line x1="42.57" y1="114.77" x2="44.46" y2="114.77" stroke="#111111" stroke-width="1.2" stroke-dasharray="0.62 0.326" opacity="0.85"/><line x1="44.46" y1="114.77" x2="45.41" y2="114.77" stroke="#111111" stroke-width="1.2" stroke-dasharray="0.62 0.326" opacity="0.85"/><line x1="45.41" y1="114.77" x2="47.30" y2="114.77" stroke="#111111" stroke-width="1.2" stroke-dasharray="0.62 0.326" opacity="0.85"/><line x1="47.30" y1="114.77" x2="48.25" y2="114.77" stroke="#111111" stroke-width="1.2" stroke-dasharray="0.62 0.326" opacity="0.85"/><line x1="48.25" y1="114.77" x2="52.03" y2="114.77" stroke="#111111" stroke-width="1.2" stroke-dasharray="0.62 0.326" opacity="0.85"/><line x1="52.03" y1="114.77" x2="52.98" y2="114.77" stroke="#111111" stroke-width="1.2" stroke-dasharray="0.62 0.326" opacity="0.85"/><line x1="52.98" y1="114.77" x2="53.92" y2="114.77" stroke="#111111" stroke-width="1.2" stroke-dasharray="0.62 0.326" opacity="0.85"/><line x1="3.78" y1="116.67" x2="10.41" y2="116.67" stroke="#a31515" stroke-width="1.2" stroke-dasharray="0.62 0.326" opacity="0.85"/><line x1="11.35" y1="116.67" x2="14.19" y2="116.67" stroke="#a31515" stroke-width="1.2" stroke-dasharray="0.62 0.326" opacity="0.85"/><line x1="15.14" y1="116.67" x2="21.76" y2="116.67" stroke="#a31515" stroke-width="1.2" stroke-dasharray="0.62 0.326" opacity="0.85"/><line x1="22.70" y1="116.67" x2="33.11" y2="116.67" stroke="#a31515" stroke-width="1.2" stroke-dasharray="0.62 0.326" opacity="0.85"/><line x1="34.06" y1="116.67" x2="36.89" y2="116.67" stroke="#a31515" stroke-width="1.2" stroke-dasharray="0.62 0.326" opacity="0.85"/><line x1="37.84" y1="116.67" x2="38.79" y2="116.67" stroke="#a31515" stroke-width="1.2" stroke-dasharray="0.62 0.326" opacity="0.85"/><line x1="39.73" y1="116.67" x2="45.41" y2="116.67" stroke="#a31515" stroke-width="1.2" stroke-dasharray="0.62 0.326" opacity="0.85"/><line x1="46.35" y1="116.67" x2="51.08" y2="116.67" stroke="#a31515" stroke-width="1.2" stroke-dasharray="0.62 0.326" opacity="0.85"/><line x1="52.03" y1="116.67" x2="60.54" y2="116.67" stroke="#a31515" stroke-width="1.2" stroke-dasharray="0.62 0.326" opacity="0.85"/><line x1="3.78" y1="118.56" x2="9.46" y2="118.56" stroke="#111111" stroke-width="1.2" stroke-dasharray="0.62 0.326" opacity="0.85"/><line x1="9.46" y1="118.56" x2="10.41" y2="118.56" stroke="#111111" stroke-width="1.2" stroke-dasharray="0.62 0.326" opacity="0.85"/><line x1="11.35" y1="118.56" x2="15.14" y2="118.56" stroke="#111111" stroke-width="1.2" stroke-dasharray="0.62 0.326" opacity="0.85"/><line x1="16.08" y1="118.56" x2="17.03" y2="118.56" stroke="#111111" stroke-width="1.2" stroke-dasharray="0.62 0.326" opacity="0.85"/><line x1="17.97" y1="118.56" x2="24.60" y2="118.56" stroke="#111111" stroke-width="1.2" stroke-dasharray="0.62 0.326" opacity="0.85"/><line x1="3.78" y1="120.46" x2="14.19" y2="120.46" stroke="#111111" stroke-width="1.2" stroke-dasharray="0.62 0.326" opacity="0.85"/><line x1="15.14" y1="120.46" x2="16.08" y2="120.46" stroke="#111111" stroke-width="1.2" stroke-dasharray="0.62 0.326" opacity="0.85"/><line x1="17.03" y1="120.46" x2="18.92" y2="120.46" stroke="#111111" stroke-width="1.2" stroke-dasharray="0.62 0.326" opacity="0.85"/><line x1="18.92" y1="120.46" x2="19.87" y2="120.46" stroke="#111111" stroke-width="1.2" stroke-dasharray="0.62 0.326" opacity="0.85"/><line x1="19.87" y1="120.46" x2="25.54" y2="120.46" stroke="#111111" stroke-width="1.2" stroke-dasharray="0.62 0.326" opacity="0.85"/><line x1="25.54" y1="120.46" x2="26.49" y2="120.46" stroke="#111111" stroke-width="1.2" stroke-dasharray="0.62 0.326" opacity="0.85"/><line x1="26.49" y1="120.46" x2="37.84" y2="120.46" stroke="#111111" stroke-width="1.2" stroke-dasharray="0.62 0.326" opacity="0.85"/><line x1="37.84" y1="120.46" x2="38.79" y2="120.46" stroke="#111111" stroke-width="1.2" stroke-dasharray="0.62 0.326" opacity="0.85"/><line x1="39.73" y1="120.46" x2="45.41" y2="120.46" stroke="#111111" stroke-width="1.2" stroke-dasharray="0.62 0.326" opacity="0.85"/><line x1="45.41" y1="120.46" x2="46.35" y2="120.46" stroke="#111111" stroke-width="1.2" stroke-dasharray="0.62 0.326" opacity="0.85"/><line x1="47.30" y1="120.46" x2="48.25" y2="120.46" stroke="#111111" stroke-width="1.2" stroke-dasharray="0.62 0.326" opacity="0.85"/><line x1="49.19" y1="120.46" x2="52.98" y2="120.46" stroke="#111111" stroke-width="1.2" stroke-dasharray="0.62 0.326" opacity="0.85"/><line x1="3.78" y1="124.26" x2="14.19" y2="124.26" stroke="#111111" stroke-width="1.2" stroke-dasharray="0.62 0.326" opacity="0.85"/><line x1="15.14" y1="124.26" x2="16.08" y2="124.26" stroke="#111111" stroke-width="1.2" stroke-dasharray="0.62 0.326" opacity="0.85"/><line x1="17.03" y1="124.26" x2="19.87" y2="124.26" stroke="#111111" stroke-width="1.2" stroke-dasharray="0.62 0.326" opacity="0.85"/><line x1="19.87" y1="124.26" x2="20.81" y2="124.26" stroke="#111111" stroke-width="1.2" stroke-dasharray="0.62 0.326" opacity="0.85"/><line x1="20.81" y1="124.26" x2="31.22" y2="124.26" stroke="#111111" stroke-width="1.2" stroke-dasharray="0.62 0.326" opacity="0.85"/><line x1="31.22" y1="124.26" x2="32.16" y2="124.26" stroke="#111111" stroke-width="1.2" stroke-dasharray="0.62 0.326" opacity="0.85"/><line x1="3.78" y1="126.15" x2="9.46" y2="126.15" stroke="#0000ff" stroke-width="1.2" stroke-dasharray="0.62 0.326" opacity="0.85"/><line x1="10.41" y1="126.15" x2="20.81" y2="126.15" stroke="#111111" stroke-width="1.2" stroke-dasharray="0.62 0.326" opacity="0.85"/><line x1="1.89" y1="129.95" x2="2.84" y2="129.95" stroke="#008000" stroke-width="1.2" stroke-dasharray="0.62 0.326" opacity="0.85"/><line x1="3.78" y1="129.95" x2="7.57" y2="129.95" stroke="#008000" stroke-width="1.2" stroke-dasharray="0.62 0.326" opacity="0.85"/><line x1="8.51" y1="129.95" x2="13.24" y2="129.95" stroke="#008000" stroke-width="1.2" stroke-dasharray="0.62 0.326" opacity="0.85"/><line x1="1.89" y1="131.84" x2="15.14" y2="131.84" stroke="#111111" stroke-width="1.2" stroke-dasharray="0.62 0.326" opacity="0.85"/><line x1="16.08" y1="131.84" x2="17.03" y2="131.84" stroke="#111111" stroke-width="1.2" stroke-dasharray="0.62 0.326" opacity="0.85"/><line x1="17.97" y1="131.84" x2="34.06" y2="131.84" stroke="#111111" stroke-width="1.2" stroke-dasharray="0.62 0.326" opacity="0.85"/><line x1="34.06" y1="131.84" x2="35.00" y2="131.84" stroke="#111111" stroke-width="1.2" stroke-dasharray="0.62 0.326" opacity="0.85"/><line x1="35.00" y1="131.84" x2="44.46" y2="131.84" stroke="#111111" stroke-width="1.2" stroke-dasharray="0.62 0.326" opacity="0.85"/><line x1="44.46" y1="131.84" x2="45.41" y2="131.84" stroke="#111111" stroke-width="1.2" stroke-dasharray="0.62 0.326" opacity="0.85"/><line x1="45.41" y1="131.84" x2="46.35" y2="131.84" stroke="#111111" stroke-width="1.2" stroke-dasharray="0.62 0.326" opacity="0.85"/><line x1="46.35" y1="131.84" x2="47.30" y2="131.84" stroke="#098658" stroke-width="1.2" stroke-dasharray="0.62 0.326" opacity="0.85"/><line x1="47.30" y1="131.84" x2="48.25" y2="131.84" stroke="#111111" stroke-width="1.2" stroke-dasharray="0.62 0.326" opacity="0.85"/><line x1="49.19" y1="131.84" x2="59.60" y2="131.84" stroke="#111111" stroke-width="1.2" stroke-dasharray="0.62 0.326" opacity="0.85"/><line x1="59.60" y1="131.84" x2="60.54" y2="131.84" stroke="#111111" stroke-width="1.2" stroke-dasharray="0.62 0.326" opacity="0.85"/><line x1="1.89" y1="133.74" x2="15.14" y2="133.74" stroke="#111111" stroke-width="1.2" stroke-dasharray="0.62 0.326" opacity="0.85"/><line x1="16.08" y1="133.74" x2="17.03" y2="133.74" stroke="#111111" stroke-width="1.2" stroke-dasharray="0.62 0.326" opacity="0.85"/><line x1="17.97" y1="133.74" x2="34.06" y2="133.74" stroke="#111111" stroke-width="1.2" stroke-dasharray="0.62 0.326" opacity="0.85"/><line x1="34.06" y1="133.74" x2="35.00" y2="133.74" stroke="#111111" stroke-width="1.2" stroke-dasharray="0.62 0.326" opacity="0.85"/><line x1="35.00" y1="133.74" x2="45.41" y2="133.74" stroke="#111111" stroke-width="1.2" stroke-dasharray="0.62 0.326" opacity="0.85"/><line x1="45.41" y1="133.74" x2="46.35" y2="133.74" stroke="#111111" stroke-width="1.2" stroke-dasharray="0.62 0.326" opacity="0.85"/><line x1="47.30" y1="133.74" x2="56.76" y2="133.74" stroke="#111111" stroke-width="1.2" stroke-dasharray="0.62 0.326" opacity="0.85"/><line x1="56.76" y1="133.74" x2="57.71" y2="133.74" stroke="#111111" stroke-width="1.2" stroke-dasharray="0.62 0.326" opacity="0.85"/><line x1="1.89" y1="135.64" x2="10.41" y2="135.64" stroke="#111111" stroke-width="1.2" stroke-dasharray="0.62 0.326" opacity="0.85"/><line x1="11.35" y1="135.64" x2="12.30" y2="135.64" stroke="#111111" stroke-width="1.2" stroke-dasharray="0.62 0.326" opacity="0.85"/><line x1="13.24" y1="135.64" x2="26.49" y2="135.64" stroke="#111111" stroke-width="1.2" stroke-dasharray="0.62 0.326" opacity="0.85"/><line x1="27.43" y1="135.64" x2="28.38" y2="135.64" stroke="#111111" stroke-width="1.2" stroke-dasharray="0.62 0.326" opacity="0.85"/><line x1="29.33" y1="135.64" x2="42.57" y2="135.64" stroke="#111111" stroke-width="1.2" stroke-dasharray="0.62 0.326" opacity="0.85"/><line x1="1.89" y1="139.43" x2="2.84" y2="139.43" stroke="#111111" stroke-width="1.2" stroke-dasharray="0.62 0.326" opacity="0.85"/><line x1="2.84" y1="139.43" x2="4.73" y2="139.43" stroke="#111111" stroke-width="1.2" stroke-dasharray="0.62 0.326" opacity="0.85"/><line x1="4.73" y1="139.43" x2="5.68" y2="139.43" stroke="#111111" stroke-width="1.2" stroke-dasharray="0.62 0.326" opacity="0.85"/><line x1="5.68" y1="139.43" x2="13.24" y2="139.43" stroke="#111111" stroke-width="1.2" stroke-dasharray="0.62 0.326" opacity="0.85"/><line x1="1.89" y1="141.33" x2="4.73" y2="141.33" stroke="#0000ff" stroke-width="1.2" stroke-dasharray="0.62 0.326" opacity="0.85"/><line x1="5.68" y1="141.33" x2="10.41" y2="141.33" stroke="#111111" stroke-width="1.2" stroke-dasharray="0.62 0.326" opacity="0.85"/><line x1="10.41" y1="141.33" x2="11.35" y2="141.33" stroke="#111111" stroke-width="1.2" stroke-dasharray="0.62 0.326" opacity="0.85"/><line x1="11.35" y1="141.33" x2="12.30" y2="141.33" stroke="#111111" stroke-width="1.2" stroke-dasharray="0.62 0.326" opacity="0.85"/><line x1="12.30" y1="141.33" x2="13.24" y2="141.33" stroke="#111111" stroke-width="1.2" stroke-dasharray="0.62 0.326" opacity="0.85"/><line x1="13.24" y1="141.33" x2="14.19" y2="141.33" stroke="#111111" stroke-width="1.2" stroke-dasharray="0.62 0.326" opacity="0.85"/><line x1="3.78" y1="143.22" x2="10.41" y2="143.22" stroke="#a31515" stroke-width="1.2" stroke-dasharray="0.62 0.326" opacity="0.85"/><line x1="11.35" y1="143.22" x2="17.97" y2="143.22" stroke="#a31515" stroke-width="1.2" stroke-dasharray="0.62 0.326" opacity="0.85"/><line x1="18.92" y1="143.22" x2="26.49" y2="143.22" stroke="#a31515" stroke-width="1.2" stroke-dasharray="0.62 0.326" opacity="0.85"/><line x1="27.43" y1="143.22" x2="29.33" y2="143.22" stroke="#a31515" stroke-width="1.2" stroke-dasharray="0.62 0.326" opacity="0.85"/><line x1="30.27" y1="143.22" x2="33.11" y2="143.22" stroke="#a31515" stroke-width="1.2" stroke-dasharray="0.62 0.326" opacity="0.85"/><line x1="34.06" y1="143.22" x2="39.73" y2="143.22" stroke="#a31515" stroke-width="1.2" stroke-dasharray="0.62 0.326" opacity="0.85"/><line x1="3.78" y1="147.02" x2="8.51" y2="147.02" stroke="#a31515" stroke-width="1.2" stroke-dasharray="0.62 0.326" opacity="0.85"/><line x1="5.68" y1="148.92" x2="7.57" y2="148.92" stroke="#a31515" stroke-width="1.2" stroke-dasharray="0.62 0.326" opacity="0.85"/><line x1="8.51" y1="148.92" x2="9.46" y2="148.92" stroke="#a31515" stroke-width="1.2" stroke-dasharray="0.62 0.326" opacity="0.85"/><line x1="10.41" y1="148.92" x2="13.24" y2="148.92" stroke="#a31515" stroke-width="1.2" stroke-dasharray="0.62 0.326" opacity="0.85"/><line x1="14.19" y1="148.92" x2="19.87" y2="148.92" stroke="#a31515" stroke-width="1.2" stroke-dasharray="0.62 0.326" opacity="0.85"/><line x1="20.81" y1="148.92" x2="26.49" y2="148.92" stroke="#a31515" stroke-width="1.2" stroke-dasharray="0.62 0.326" opacity="0.85"/><line x1="27.43" y1="148.92" x2="36.89" y2="148.92" stroke="#a31515" stroke-width="1.2" stroke-dasharray="0.62 0.326" opacity="0.85"/><line x1="37.84" y1="148.92" x2="39.73" y2="148.92" stroke="#a31515" stroke-width="1.2" stroke-dasharray="0.62 0.326" opacity="0.85"/><line x1="40.68" y1="148.92" x2="43.52" y2="148.92" stroke="#a31515" stroke-width="1.2" stroke-dasharray="0.62 0.326" opacity="0.85"/><line x1="44.46" y1="148.92" x2="51.08" y2="148.92" stroke="#a31515" stroke-width="1.2" stroke-dasharray="0.62 0.326" opacity="0.85"/><line x1="52.03" y1="148.92" x2="57.71" y2="148.92" stroke="#a31515" stroke-width="1.2" stroke-dasharray="0.62 0.326" opacity="0.85"/><line x1="58.65" y1="148.92" x2="61.49" y2="148.92" stroke="#a31515" stroke-width="1.2" stroke-dasharray="0.62 0.326" opacity="0.85"/><line x1="62.44" y1="148.92" x2="63.38" y2="148.92" stroke="#a31515" stroke-width="1.2" stroke-dasharray="0.62 0.326" opacity="0.85"/><line x1="64.33" y1="148.92" x2="69.06" y2="148.92" stroke="#a31515" stroke-width="1.2" stroke-dasharray="0.62 0.326" opacity="0.85"/><line x1="70.00" y1="148.92" x2="71.90" y2="148.92" stroke="#a31515" stroke-width="1.2" stroke-dasharray="0.62 0.326" opacity="0.85"/><line x1="7.57" y1="150.81" x2="16.08" y2="150.81" stroke="#a31515" stroke-width="1.2" stroke-dasharray="0.62 0.326" opacity="0.85"/><line x1="3.78" y1="154.61" x2="11.35" y2="154.61" stroke="#a31515" stroke-width="1.2" stroke-dasharray="0.62 0.326" opacity="0.85"/><line x1="5.68" y1="156.50" x2="6.62" y2="156.50" stroke="#a31515" stroke-width="1.2" stroke-dasharray="0.62 0.326" opacity="0.85"/><line x1="7.57" y1="156.50" x2="10.41" y2="156.50" stroke="#a31515" stroke-width="1.2" stroke-dasharray="0.62 0.326" opacity="0.85"/><line x1="11.35" y1="156.50" x2="14.19" y2="156.50" stroke="#a31515" stroke-width="1.2" stroke-dasharray="0.62 0.326" opacity="0.85"/><line x1="15.14" y1="156.50" x2="20.81" y2="156.50" stroke="#a31515" stroke-width="1.2" stroke-dasharray="0.62 0.326" opacity="0.85"/><line x1="21.76" y1="156.50" x2="31.22" y2="156.50" stroke="#a31515" stroke-width="1.2" stroke-dasharray="0.62 0.326" opacity="0.85"/><line x1="32.16" y1="156.50" x2="35.00" y2="156.50" stroke="#a31515" stroke-width="1.2" stroke-dasharray="0.62 0.326" opacity="0.85"/><line x1="35.95" y1="156.50" x2="40.68" y2="156.50" stroke="#a31515" stroke-width="1.2" stroke-dasharray="0.62 0.326" opacity="0.85"/><line x1="41.62" y1="156.50" x2="47.30" y2="156.50" stroke="#a31515" stroke-width="1.2" stroke-dasharray="0.62 0.326" opacity="0.85"/><line x1="48.25" y1="156.50" x2="51.08" y2="156.50" stroke="#a31515" stroke-width="1.2" stroke-dasharray="0.62 0.326" opacity="0.85"/><line x1="52.03" y1="156.50" x2="55.81" y2="156.50" stroke="#a31515" stroke-width="1.2" stroke-dasharray="0.62 0.326" opacity="0.85"/><line x1="56.76" y1="156.50" x2="64.33" y2="156.50" stroke="#a31515" stroke-width="1.2" stroke-dasharray="0.62 0.326" opacity="0.85"/><line x1="3.78" y1="158.40" x2="6.62" y2="158.40" stroke="#a31515" stroke-width="1.2" stroke-dasharray="0.62 0.326" opacity="0.85"/><line x1="3.78" y1="160.30" x2="13.24" y2="160.30" stroke="#111111" stroke-width="1.2" stroke-dasharray="0.62 0.326" opacity="0.85"/><line x1="14.19" y1="160.30" x2="15.14" y2="160.30" stroke="#111111" stroke-width="1.2" stroke-dasharray="0.62 0.326" opacity="0.85"/><line x1="16.08" y1="160.30" x2="26.49" y2="160.30" stroke="#111111" stroke-width="1.2" stroke-dasharray="0.62 0.326" opacity="0.85"/><line x1="26.49" y1="160.30" x2="27.43" y2="160.30" stroke="#111111" stroke-width="1.2" stroke-dasharray="0.62 0.326" opacity="0.85"/><line x1="27.43" y1="160.30" x2="40.68" y2="160.30" stroke="#111111" stroke-width="1.2" stroke-dasharray="0.62 0.326" opacity="0.85"/><line x1="40.68" y1="160.30" x2="41.62" y2="160.30" stroke="#111111" stroke-width="1.2" stroke-dasharray="0.62 0.326" opacity="0.85"/><line x1="42.57" y1="160.30" x2="43.52" y2="160.30" stroke="#111111" stroke-width="1.2" stroke-dasharray="0.62 0.326" opacity="0.85"/><line x1="43.52" y1="160.30" x2="44.46" y2="160.30" stroke="#111111" stroke-width="1.2" stroke-dasharray="0.62 0.326" opacity="0.85"/><line x1="3.78" y1="162.19" x2="13.24" y2="162.19" stroke="#111111" stroke-width="1.2" stroke-dasharray="0.62 0.326" opacity="0.85"/><line x1="14.19" y1="162.19" x2="15.14" y2="162.19" stroke="#111111" stroke-width="1.2" stroke-dasharray="0.62 0.326" opacity="0.85"/><line x1="16.08" y1="162.19" x2="26.49" y2="162.19" stroke="#111111" stroke-width="1.2" stroke-dasharray="0.62 0.326" opacity="0.85"/><line x1="26.49" y1="162.19" x2="27.43" y2="162.19" stroke="#111111" stroke-width="1.2" stroke-dasharray="0.62 0.326" opacity="0.85"/><line x1="27.43" y1="162.19" x2="40.68" y2="162.19" stroke="#111111" stroke-width="1.2" stroke-dasharray="0.62 0.326" opacity="0.85"/><line x1="40.68" y1="162.19" x2="41.62" y2="162.19" stroke="#111111" stroke-width="1.2" stroke-dasharray="0.62 0.326" opacity="0.85"/><line x1="42.57" y1="162.19" x2="52.03" y2="162.19" stroke="#111111" stroke-width="1.2" stroke-dasharray="0.62 0.326" opacity="0.85"/><line x1="52.03" y1="162.19" x2="52.98" y2="162.19" stroke="#111111" stroke-width="1.2" stroke-dasharray="0.62 0.326" opacity="0.85"/><line x1="53.92" y1="162.19" x2="55.81" y2="162.19" stroke="#111111" stroke-width="1.2" stroke-dasharray="0.62 0.326" opacity="0.85"/><line x1="55.81" y1="162.19" x2="56.76" y2="162.19" stroke="#111111" stroke-width="1.2" stroke-dasharray="0.62 0.326" opacity="0.85"/><line x1="56.76" y1="162.19" x2="64.33" y2="162.19" stroke="#111111" stroke-width="1.2" stroke-dasharray="0.62 0.326" opacity="0.85"/><line x1="64.33" y1="162.19" x2="65.27" y2="162.19" stroke="#111111" stroke-width="1.2" stroke-dasharray="0.62 0.326" opacity="0.85"/><line x1="3.78" y1="164.09" x2="4.73" y2="164.09" stroke="#111111" stroke-width="1.2" stroke-dasharray="0.62 0.326" opacity="0.85"/><line x1="5.68" y1="164.09" x2="6.62" y2="164.09" stroke="#111111" stroke-width="1.2" stroke-dasharray="0.62 0.326" opacity="0.85"/><line x1="7.57" y1="164.09" x2="9.46" y2="164.09" stroke="#111111" stroke-width="1.2" stroke-dasharray="0.62 0.326" opacity="0.85"/><line x1="9.46" y1="164.09" x2="10.41" y2="164.09" stroke="#111111" stroke-width="1.2" stroke-dasharray="0.62 0.326" opacity="0.85"/><line x1="10.41" y1="164.09" x2="12.30" y2="164.09" stroke="#111111" stroke-width="1.2" stroke-dasharray="0.62 0.326" opacity="0.85"/><line x1="12.30" y1="164.09" x2="13.24" y2="164.09" stroke="#111111" stroke-width="1.2" stroke-dasharray="0.62 0.326" opacity="0.85"/><line x1="13.24" y1="164.09" x2="19.87" y2="164.09" stroke="#111111" stroke-width="1.2" stroke-dasharray="0.62 0.326" opacity="0.85"/><line x1="19.87" y1="164.09" x2="20.81" y2="164.09" stroke="#111111" stroke-width="1.2" stroke-dasharray="0.62 0.326" opacity="0.85"/><line x1="20.81" y1="164.09" x2="30.27" y2="164.09" stroke="#111111" stroke-width="1.2" stroke-dasharray="0.62 0.326" opacity="0.85"/><line x1="30.27" y1="164.09" x2="31.22" y2="164.09" stroke="#111111" stroke-width="1.2" stroke-dasharray="0.62 0.326" opacity="0.85"/><line x1="3.78" y1="165.99" x2="9.46" y2="165.99" stroke="#0000ff" stroke-width="1.2" stroke-dasharray="0.62 0.326" opacity="0.85"/><line x1="10.41" y1="165.99" x2="11.35" y2="165.99" stroke="#111111" stroke-width="1.2" stroke-dasharray="0.62 0.326" opacity="0.85"/><line x1="1.89" y1="169.78" x2="2.84" y2="169.78" stroke="#111111" stroke-width="1.2" stroke-dasharray="0.62 0.326" opacity="0.85"/><line x1="2.84" y1="169.78" x2="4.73" y2="169.78" stroke="#111111" stroke-width="1.2" stroke-dasharray="0.62 0.326" opacity="0.85"/><line x1="4.73" y1="169.78" x2="5.68" y2="169.78" stroke="#111111" stroke-width="1.2" stroke-dasharray="0.62 0.326" opacity="0.85"/><line x1="5.68" y1="169.78" x2="13.24" y2="169.78" stroke="#111111" stroke-width="1.2" stroke-dasharray="0.62 0.326" opacity="0.85"/><line x1="1.89" y1="171.68" x2="4.73" y2="171.68" stroke="#0000ff" stroke-width="1.2" stroke-dasharray="0.62 0.326" opacity="0.85"/><line x1="5.68" y1="171.68" x2="9.46" y2="171.68" stroke="#111111" stroke-width="1.2" stroke-dasharray="0.62 0.326" opacity="0.85"/><line x1="9.46" y1="171.68" x2="10.41" y2="171.68" stroke="#111111" stroke-width="1.2" stroke-dasharray="0.62 0.326" opacity="0.85"/><line x1="10.41" y1="171.68" x2="15.14" y2="171.68" stroke="#111111" stroke-width="1.2" stroke-dasharray="0.62 0.326" opacity="0.85"/><line x1="15.14" y1="171.68" x2="16.08" y2="171.68" stroke="#111111" stroke-width="1.2" stroke-dasharray="0.62 0.326" opacity="0.85"/><line x1="17.03" y1="171.68" x2="22.70" y2="171.68" stroke="#111111" stroke-width="1.2" stroke-dasharray="0.62 0.326" opacity="0.85"/><line x1="22.70" y1="171.68" x2="23.65" y2="171.68" stroke="#111111" stroke-width="1.2" stroke-dasharray="0.62 0.326" opacity="0.85"/><line x1="23.65" y1="171.68" x2="24.60" y2="171.68" stroke="#111111" stroke-width="1.2" stroke-dasharray="0.62 0.326" opacity="0.85"/><line x1="3.78" y1="173.58" x2="16.08" y2="173.58" stroke="#a31515" stroke-width="1.2" stroke-dasharray="0.62 0.326" opacity="0.85"/><line x1="17.03" y1="173.58" x2="21.76" y2="173.58" stroke="#a31515" stroke-width="1.2" stroke-dasharray="0.62 0.326" opacity="0.85"/><line x1="22.70" y1="173.58" x2="29.33" y2="173.58" stroke="#a31515" stroke-width="1.2" stroke-dasharray="0.62 0.326" opacity="0.85"/><line x1="30.27" y1="173.58" x2="35.00" y2="173.58" stroke="#a31515" stroke-width="1.2" stroke-dasharray="0.62 0.326" opacity="0.85"/><line x1="3.78" y1="177.37" x2="8.51" y2="177.37" stroke="#a31515" stroke-width="1.2" stroke-dasharray="0.62 0.326" opacity="0.85"/><line x1="5.68" y1="179.27" x2="11.35" y2="179.27" stroke="#a31515" stroke-width="1.2" stroke-dasharray="0.62 0.326" opacity="0.85"/><line x1="12.30" y1="179.27" x2="17.03" y2="179.27" stroke="#a31515" stroke-width="1.2" stroke-dasharray="0.62 0.326" opacity="0.85"/><line x1="17.97" y1="179.27" x2="30.27" y2="179.27" stroke="#a31515" stroke-width="1.2" stroke-dasharray="0.62 0.326" opacity="0.85"/><line x1="31.22" y1="179.27" x2="39.73" y2="179.27" stroke="#a31515" stroke-width="1.2" stroke-dasharray="0.62 0.326" opacity="0.85"/><line x1="40.68" y1="179.27" x2="42.57" y2="179.27" stroke="#a31515" stroke-width="1.2" stroke-dasharray="0.62 0.326" opacity="0.85"/><line x1="43.52" y1="179.27" x2="46.35" y2="179.27" stroke="#a31515" stroke-width="1.2" stroke-dasharray="0.62 0.326" opacity="0.85"/><line x1="47.30" y1="179.27" x2="52.98" y2="179.27" stroke="#a31515" stroke-width="1.2" stroke-dasharray="0.62 0.326" opacity="0.85"/><line x1="53.92" y1="179.27" x2="56.76" y2="179.27" stroke="#a31515" stroke-width="1.2" stroke-dasharray="0.62 0.326" opacity="0.85"/><line x1="57.71" y1="179.27" x2="62.44" y2="179.27" stroke="#a31515" stroke-width="1.2" stroke-dasharray="0.62 0.326" opacity="0.85"/><line x1="63.38" y1="179.27" x2="65.27" y2="179.27" stroke="#a31515" stroke-width="1.2" stroke-dasharray="0.62 0.326" opacity="0.85"/><line x1="66.22" y1="179.27" x2="73.79" y2="179.27" stroke="#a31515" stroke-width="1.2" stroke-dasharray="0.62 0.326" opacity="0.85"/><line x1="7.57" y1="181.16" x2="9.46" y2="181.16" stroke="#a31515" stroke-width="1.2" stroke-dasharray="0.62 0.326" opacity="0.85"/><line x1="10.41" y1="181.16" x2="12.30" y2="181.16" stroke="#a31515" stroke-width="1.2" stroke-dasharray="0.62 0.326" opacity="0.85"/><line x1="13.24" y1="181.16" x2="16.08" y2="181.16" stroke="#a31515" stroke-width="1.2" stroke-dasharray="0.62 0.326" opacity="0.85"/><line x1="17.03" y1="181.16" x2="20.81" y2="181.16" stroke="#a31515" stroke-width="1.2" stroke-dasharray="0.62 0.326" opacity="0.85"/><line x1="5.68" y1="183.06" x2="12.30" y2="183.06" stroke="#a31515" stroke-width="1.2" stroke-dasharray="0.62 0.326" opacity="0.85"/><line x1="13.24" y1="183.06" x2="17.97" y2="183.06" stroke="#a31515" stroke-width="1.2" stroke-dasharray="0.62 0.326" opacity="0.85"/><line x1="18.92" y1="183.06" x2="24.60" y2="183.06" stroke="#a31515" stroke-width="1.2" stroke-dasharray="0.62 0.326" opacity="0.85"/><line x1="25.54" y1="183.06" x2="28.38" y2="183.06" stroke="#a31515" stroke-width="1.2" stroke-dasharray="0.62 0.326" opacity="0.85"/><line x1="29.33" y1="183.06" x2="32.16" y2="183.06" stroke="#a31515" stroke-width="1.2" stroke-dasharray="0.62 0.326" opacity="0.85"/><line x1="33.11" y1="183.06" x2="40.68" y2="183.06" stroke="#a31515" stroke-width="1.2" stroke-dasharray="0.62 0.326" opacity="0.85"/><line x1="41.62" y1="183.06" x2="43.52" y2="183.06" stroke="#a31515" stroke-width="1.2" stroke-dasharray="0.62 0.326" opacity="0.85"/><line x1="44.46" y1="183.06" x2="51.08" y2="183.06" stroke="#a31515" stroke-width="1.2" stroke-dasharray="0.62 0.326" opacity="0.85"/><line x1="52.03" y1="183.06" x2="58.65" y2="183.06" stroke="#a31515" stroke-width="1.2" stroke-dasharray="0.62 0.326" opacity="0.85"/><line x1="59.60" y1="183.06" x2="67.17" y2="183.06" stroke="#a31515" stroke-width="1.2" stroke-dasharray="0.62 0.326" opacity="0.85"/><line x1="68.11" y1="183.06" x2="70.95" y2="183.06" stroke="#a31515" stroke-width="1.2" stroke-dasharray="0.62 0.326" opacity="0.85"/><line x1="7.57" y1="184.96" x2="12.30" y2="184.96" stroke="#a31515" stroke-width="1.2" stroke-dasharray="0.62 0.326" opacity="0.85"/><line x1="13.24" y1="184.96" x2="15.14" y2="184.96" stroke="#a31515" stroke-width="1.2" stroke-dasharray="0.62 0.326" opacity="0.85"/><line x1="16.08" y1="184.96" x2="23.65" y2="184.96" stroke="#a31515" stroke-width="1.2" stroke-dasharray="0.62 0.326" opacity="0.85"/><line x1="24.60" y1="184.96" x2="26.49" y2="184.96" stroke="#a31515" stroke-width="1.2" stroke-dasharray="0.62 0.326" opacity="0.85"/><line x1="27.43" y1="184.96" x2="29.33" y2="184.96" stroke="#a31515" stroke-width="1.2" stroke-dasharray="0.62 0.326" opacity="0.85"/><line x1="30.27" y1="184.96" x2="33.11" y2="184.96" stroke="#a31515" stroke-width="1.2" stroke-dasharray="0.62 0.326" opacity="0.85"/><line x1="34.06" y1="184.96" x2="37.84" y2="184.96" stroke="#a31515" stroke-width="1.2" stroke-dasharray="0.62 0.326" opacity="0.85"/><line x1="38.79" y1="184.96" x2="40.68" y2="184.96" stroke="#a31515" stroke-width="1.2" stroke-dasharray="0.62 0.326" opacity="0.85"/><line x1="41.62" y1="184.96" x2="49.19" y2="184.96" stroke="#a31515" stroke-width="1.2" stroke-dasharray="0.62 0.326" opacity="0.85"/><line x1="3.78" y1="188.75" x2="11.35" y2="188.75" stroke="#a31515" stroke-width="1.2" stroke-dasharray="0.62 0.326" opacity="0.85"/><line x1="5.68" y1="190.65" x2="6.62" y2="190.65" stroke="#a31515" stroke-width="1.2" stroke-dasharray="0.62 0.326" opacity="0.85"/><line x1="7.57" y1="190.65" x2="13.24" y2="190.65" stroke="#a31515" stroke-width="1.2" stroke-dasharray="0.62 0.326" opacity="0.85"/><line x1="14.19" y1="190.65" x2="17.97" y2="190.65" stroke="#a31515" stroke-width="1.2" stroke-dasharray="0.62 0.326" opacity="0.85"/><line x1="18.92" y1="190.65" x2="25.54" y2="190.65" stroke="#a31515" stroke-width="1.2" stroke-dasharray="0.62 0.326" opacity="0.85"/><line x1="3.78" y1="192.55" x2="6.62" y2="192.55" stroke="#a31515" stroke-width="1.2" stroke-dasharray="0.62 0.326" opacity="0.85"/><line x1="3.78" y1="194.44" x2="7.57" y2="194.44" stroke="#111111" stroke-width="1.2" stroke-dasharray="0.62 0.326" opacity="0.85"/><line x1="8.51" y1="194.44" x2="9.46" y2="194.44" stroke="#111111" stroke-width="1.2" stroke-dasharray="0.62 0.326" opacity="0.85"/><line x1="10.41" y1="194.44" x2="11.35" y2="194.44" stroke="#111111" stroke-width="1.2" stroke-dasharray="0.62 0.326" opacity="0.85"/><line x1="11.35" y1="194.44" x2="17.03" y2="194.44" stroke="#111111" stroke-width="1.2" stroke-dasharray="0.62 0.326" opacity="0.85"/><line x1="17.97" y1="194.44" x2="18.92" y2="194.44" stroke="#111111" stroke-width="1.2" stroke-dasharray="0.62 0.326" opacity="0.85"/><line x1="19.87" y1="194.44" x2="21.76" y2="194.44" stroke="#111111" stroke-width="1.2" stroke-dasharray="0.62 0.326" opacity="0.85"/><line x1="21.76" y1="194.44" x2="22.70" y2="194.44" stroke="#111111" stroke-width="1.2" stroke-dasharray="0.62 0.326" opacity="0.85"/><line x1="22.70" y1="194.44" x2="26.49" y2="194.44" stroke="#111111" stroke-width="1.2" stroke-dasharray="0.62 0.326" opacity="0.85"/><line x1="26.49" y1="194.44" x2="27.43" y2="194.44" stroke="#111111" stroke-width="1.2" stroke-dasharray="0.62 0.326" opacity="0.85"/><line x1="27.43" y1="194.44" x2="30.27" y2="194.44" stroke="#111111" stroke-width="1.2" stroke-dasharray="0.62 0.326" opacity="0.85"/><line x1="30.27" y1="194.44" x2="31.22" y2="194.44" stroke="#111111" stroke-width="1.2" stroke-dasharray="0.62 0.326" opacity="0.85"/><line x1="31.22" y1="194.44" x2="35.95" y2="194.44" stroke="#111111" stroke-width="1.2" stroke-dasharray="0.62 0.326" opacity="0.85"/><line x1="35.95" y1="194.44" x2="36.89" y2="194.44" stroke="#111111" stroke-width="1.2" stroke-dasharray="0.62 0.326" opacity="0.85"/><line x1="3.78" y1="196.34" x2="7.57" y2="196.34" stroke="#111111" stroke-width="1.2" stroke-dasharray="0.62 0.326" opacity="0.85"/><line x1="8.51" y1="196.34" x2="9.46" y2="196.34" stroke="#111111" stroke-width="1.2" stroke-dasharray="0.62 0.326" opacity="0.85"/><line x1="10.41" y1="196.34" x2="12.30" y2="196.34" stroke="#111111" stroke-width="1.2" stroke-dasharray="0.62 0.326" opacity="0.85"/><line x1="12.30" y1="196.34" x2="13.24" y2="196.34" stroke="#111111" stroke-width="1.2" stroke-dasharray="0.62 0.326" opacity="0.85"/><line x1="13.24" y1="196.34" x2="23.65" y2="196.34" stroke="#111111" stroke-width="1.2" stroke-dasharray="0.62 0.326" opacity="0.85"/><line x1="23.65" y1="196.34" x2="24.60" y2="196.34" stroke="#111111" stroke-width="1.2" stroke-dasharray="0.62 0.326" opacity="0.85"/><line x1="24.60" y1="196.34" x2="28.38" y2="196.34" stroke="#111111" stroke-width="1.2" stroke-dasharray="0.62 0.326" opacity="0.85"/><line x1="28.38" y1="196.34" x2="29.33" y2="196.34" stroke="#111111" stroke-width="1.2" stroke-dasharray="0.62 0.326" opacity="0.85"/><line x1="3.78" y1="198.24" x2="9.46" y2="198.24" stroke="#0000ff" stroke-width="1.2" stroke-dasharray="0.62 0.326" opacity="0.85"/><line x1="10.41" y1="198.24" x2="14.19" y2="198.24" stroke="#111111" stroke-width="1.2" stroke-dasharray="0.62 0.326" opacity="0.85"/><line x1="1.89" y1="202.03" x2="14.19" y2="202.03" stroke="#111111" stroke-width="1.2" stroke-dasharray="0.62 0.326" opacity="0.85"/><line x1="15.14" y1="202.03" x2="16.08" y2="202.03" stroke="#111111" stroke-width="1.2" stroke-dasharray="0.62 0.326" opacity="0.85"/><line x1="17.03" y1="202.03" x2="20.81" y2="202.03" stroke="#0000ff" stroke-width="1.2" stroke-dasharray="0.62 0.326" opacity="0.85"/><line x1="20.81" y1="202.03" x2="21.76" y2="202.03" stroke="#111111" stroke-width="1.2" stroke-dasharray="0.62 0.326" opacity="0.85"/><line x1="21.76" y1="202.03" x2="29.33" y2="202.03" stroke="#111111" stroke-width="1.2" stroke-dasharray="0.62 0.326" opacity="0.85"/><line x1="29.33" y1="202.03" x2="30.27" y2="202.03" stroke="#111111" stroke-width="1.2" stroke-dasharray="0.62 0.326" opacity="0.85"/><line x1="1.89" y1="203.93" x2="13.24" y2="203.93" stroke="#111111" stroke-width="1.2" stroke-dasharray="0.62 0.326" opacity="0.85"/><line x1="14.19" y1="203.93" x2="15.14" y2="203.93" stroke="#111111" stroke-width="1.2" stroke-dasharray="0.62 0.326" opacity="0.85"/><line x1="16.08" y1="203.93" x2="19.87" y2="203.93" stroke="#0000ff" stroke-width="1.2" stroke-dasharray="0.62 0.326" opacity="0.85"/><line x1="19.87" y1="203.93" x2="20.81" y2="203.93" stroke="#111111" stroke-width="1.2" stroke-dasharray="0.62 0.326" opacity="0.85"/><line x1="20.81" y1="203.93" x2="27.43" y2="203.93" stroke="#111111" stroke-width="1.2" stroke-dasharray="0.62 0.326" opacity="0.85"/><line x1="27.43" y1="203.93" x2="28.38" y2="203.93" stroke="#111111" stroke-width="1.2" stroke-dasharray="0.62 0.326" opacity="0.85"/><line x1="1.89" y1="205.83" x2="10.41" y2="205.83" stroke="#111111" stroke-width="1.2" stroke-dasharray="0.62 0.326" opacity="0.85"/><line x1="11.35" y1="205.83" x2="12.30" y2="205.83" stroke="#111111" stroke-width="1.2" stroke-dasharray="0.62 0.326" opacity="0.85"/><line x1="13.24" y1="205.83" x2="15.14" y2="205.83" stroke="#111111" stroke-width="1.2" stroke-dasharray="0.62 0.326" opacity="0.85"/><line x1="15.14" y1="205.83" x2="16.08" y2="205.83" stroke="#111111" stroke-width="1.2" stroke-dasharray="0.62 0.326" opacity="0.85"/><line x1="16.08" y1="205.83" x2="25.54" y2="205.83" stroke="#111111" stroke-width="1.2" stroke-dasharray="0.62 0.326" opacity="0.85"/><line x1="25.54" y1="205.83" x2="26.49" y2="205.83" stroke="#111111" stroke-width="1.2" stroke-dasharray="0.62 0.326" opacity="0.85"/><line x1="26.49" y1="205.83" x2="30.27" y2="205.83" stroke="#111111" stroke-width="1.2" stroke-dasharray="0.62 0.326" opacity="0.85"/><line x1="30.27" y1="205.83" x2="31.22" y2="205.83" stroke="#111111" stroke-width="1.2" stroke-dasharray="0.62 0.326" opacity="0.85"/><line x1="31.22" y1="205.83" x2="43.52" y2="205.83" stroke="#111111" stroke-width="1.2" stroke-dasharray="0.62 0.326" opacity="0.85"/><line x1="43.52" y1="205.83" x2="44.46" y2="205.83" stroke="#111111" stroke-width="1.2" stroke-dasharray="0.62 0.326" opacity="0.85"/><line x1="44.46" y1="205.83" x2="49.19" y2="205.83" stroke="#111111" stroke-width="1.2" stroke-dasharray="0.62 0.326" opacity="0.85"/><line x1="49.19" y1="205.83" x2="50.14" y2="205.83" stroke="#111111" stroke-width="1.2" stroke-dasharray="0.62 0.326" opacity="0.85"/><line x1="50.14" y1="205.83" x2="62.44" y2="205.83" stroke="#111111" stroke-width="1.2" stroke-dasharray="0.62 0.326" opacity="0.85"/><line x1="62.44" y1="205.83" x2="63.38" y2="205.83" stroke="#111111" stroke-width="1.2" stroke-dasharray="0.62 0.326" opacity="0.85"/><line x1="1.89" y1="207.72" x2="4.73" y2="207.72" stroke="#0000ff" stroke-width="1.2" stroke-dasharray="0.62 0.326" opacity="0.85"/><line x1="5.68" y1="207.72" x2="6.62" y2="207.72" stroke="#111111" stroke-width="1.2" stroke-dasharray="0.62 0.326" opacity="0.85"/><line x1="7.57" y1="207.72" x2="9.46" y2="207.72" stroke="#0000ff" stroke-width="1.2" stroke-dasharray="0.62 0.326" opacity="0.85"/><line x1="10.41" y1="207.72" x2="15.14" y2="207.72" stroke="#0000ff" stroke-width="1.2" stroke-dasharray="0.62 0.326" opacity="0.85"/><line x1="15.14" y1="207.72" x2="16.08" y2="207.72" stroke="#111111" stroke-width="1.2" stroke-dasharray="0.62 0.326" opacity="0.85"/><line x1="16.08" y1="207.72" x2="20.81" y2="207.72" stroke="#111111" stroke-width="1.2" stroke-dasharray="0.62 0.326" opacity="0.85"/><line x1="20.81" y1="207.72" x2="21.76" y2="207.72" stroke="#111111" stroke-width="1.2" stroke-dasharray="0.62 0.326" opacity="0.85"/><line x1="21.76" y1="207.72" x2="30.27" y2="207.72" stroke="#111111" stroke-width="1.2" stroke-dasharray="0.62 0.326" opacity="0.85"/><line x1="30.27" y1="207.72" x2="31.22" y2="207.72" stroke="#111111" stroke-width="1.2" stroke-dasharray="0.62 0.326" opacity="0.85"/><line x1="31.22" y1="207.72" x2="32.16" y2="207.72" stroke="#111111" stroke-width="1.2" stroke-dasharray="0.62 0.326" opacity="0.85"/><line x1="3.78" y1="209.62" x2="10.41" y2="209.62" stroke="#111111" stroke-width="1.2" stroke-dasharray="0.62 0.326" opacity="0.85"/><line x1="10.41" y1="209.62" x2="11.35" y2="209.62" stroke="#111111" stroke-width="1.2" stroke-dasharray="0.62 0.326" opacity="0.85"/><line x1="12.30" y1="209.62" x2="18.92" y2="209.62" stroke="#111111" stroke-width="1.2" stroke-dasharray="0.62 0.326" opacity="0.85"/><line x1="19.87" y1="209.62" x2="20.81" y2="209.62" stroke="#111111" stroke-width="1.2" stroke-dasharray="0.62 0.326" opacity="0.85"/><line x1="21.76" y1="209.62" x2="25.54" y2="209.62" stroke="#0000ff" stroke-width="1.2" stroke-dasharray="0.62 0.326" opacity="0.85"/><line x1="25.54" y1="209.62" x2="26.49" y2="209.62" stroke="#111111" stroke-width="1.2" stroke-dasharray="0.62 0.326" opacity="0.85"/><line x1="26.49" y1="209.62" x2="38.79" y2="209.62" stroke="#111111" stroke-width="1.2" stroke-dasharray="0.62 0.326" opacity="0.85"/><line x1="38.79" y1="209.62" x2="39.73" y2="209.62" stroke="#111111" stroke-width="1.2" stroke-dasharray="0.62 0.326" opacity="0.85"/><line x1="3.78" y1="211.52" x2="9.46" y2="211.52" stroke="#111111" stroke-width="1.2" stroke-dasharray="0.62 0.326" opacity="0.85"/><line x1="9.46" y1="211.52" x2="10.41" y2="211.52" stroke="#111111" stroke-width="1.2" stroke-dasharray="0.62 0.326" opacity="0.85"/><line x1="11.35" y1="211.52" x2="17.03" y2="211.52" stroke="#111111" stroke-width="1.2" stroke-dasharray="0.62 0.326" opacity="0.85"/><line x1="17.97" y1="211.52" x2="18.92" y2="211.52" stroke="#111111" stroke-width="1.2" stroke-dasharray="0.62 0.326" opacity="0.85"/><line x1="19.87" y1="211.52" x2="23.65" y2="211.52" stroke="#0000ff" stroke-width="1.2" stroke-dasharray="0.62 0.326" opacity="0.85"/><line x1="23.65" y1="211.52" x2="24.60" y2="211.52" stroke="#111111" stroke-width="1.2" stroke-dasharray="0.62 0.326" opacity="0.85"/><line x1="24.60" y1="211.52" x2="35.95" y2="211.52" stroke="#111111" stroke-width="1.2" stroke-dasharray="0.62 0.326" opacity="0.85"/><line x1="35.95" y1="211.52" x2="36.89" y2="211.52" stroke="#111111" stroke-width="1.2" stroke-dasharray="0.62 0.326" opacity="0.85"/><line x1="3.78" y1="215.31" x2="4.73" y2="215.31" stroke="#008000" stroke-width="1.2" stroke-dasharray="0.62 0.326" opacity="0.85"/><line x1="5.68" y1="215.31" x2="10.41" y2="215.31" stroke="#008000" stroke-width="1.2" stroke-dasharray="0.62 0.326" opacity="0.85"/><line x1="11.35" y1="215.31" x2="15.14" y2="215.31" stroke="#008000" stroke-width="1.2" stroke-dasharray="0.62 0.326" opacity="0.85"/><line x1="3.78" y1="217.21" x2="7.57" y2="217.21" stroke="#0000ff" stroke-width="1.2" stroke-dasharray="0.62 0.326" opacity="0.85"/><line x1="8.51" y1="217.21" x2="10.41" y2="217.21" stroke="#111111" stroke-width="1.2" stroke-dasharray="0.62 0.326" opacity="0.85"/><line x1="10.41" y1="217.21" x2="11.35" y2="217.21" stroke="#111111" stroke-width="1.2" stroke-dasharray="0.62 0.326" opacity="0.85"/><line x1="11.35" y1="217.21" x2="22.70" y2="217.21" stroke="#111111" stroke-width="1.2" stroke-dasharray="0.62 0.326" opacity="0.85"/><line x1="22.70" y1="217.21" x2="23.65" y2="217.21" stroke="#111111" stroke-width="1.2" stroke-dasharray="0.62 0.326" opacity="0.85"/><line x1="23.65" y1="217.21" x2="24.60" y2="217.21" stroke="#111111" stroke-width="1.2" stroke-dasharray="0.62 0.326" opacity="0.85"/><line x1="25.54" y1="217.21" x2="27.43" y2="217.21" stroke="#0000ff" stroke-width="1.2" stroke-dasharray="0.62 0.326" opacity="0.85"/><line x1="28.38" y1="217.21" x2="32.16" y2="217.21" stroke="#111111" stroke-width="1.2" stroke-dasharray="0.62 0.326" opacity="0.85"/><line x1="32.16" y1="217.21" x2="33.11" y2="217.21" stroke="#111111" stroke-width="1.2" stroke-dasharray="0.62 0.326" opacity="0.85"/><line x1="5.68" y1="219.10" x2="6.62" y2="219.10" stroke="#111111" stroke-width="1.2" stroke-dasharray="0.62 0.326" opacity="0.85"/><line x1="7.57" y1="219.10" x2="8.51" y2="219.10" stroke="#111111" stroke-width="1.2" stroke-dasharray="0.62 0.326" opacity="0.85"/><line x1="9.46" y1="219.10" x2="14.19" y2="219.10" stroke="#111111" stroke-width="1.2" stroke-dasharray="0.62 0.326" opacity="0.85"/><line x1="14.19" y1="219.10" x2="15.14" y2="219.10" stroke="#111111" stroke-width="1.2" stroke-dasharray="0.62 0.326" opacity="0.85"/><line x1="15.14" y1="219.10" x2="21.76" y2="219.10" stroke="#111111" stroke-width="1.2" stroke-dasharray="0.62 0.326" opacity="0.85"/><line x1="21.76" y1="219.10" x2="22.70" y2="219.10" stroke="#111111" stroke-width="1.2" stroke-dasharray="0.62 0.326" opacity="0.85"/><line x1="5.68" y1="221.00" x2="13.24" y2="221.00" stroke="#111111" stroke-width="1.2" stroke-dasharray="0.62 0.326" opacity="0.85"/><line x1="14.19" y1="221.00" x2="15.14" y2="221.00" stroke="#111111" stroke-width="1.2" stroke-dasharray="0.62 0.326" opacity="0.85"/><line x1="16.08" y1="221.00" x2="19.87" y2="221.00" stroke="#111111" stroke-width="1.2" stroke-dasharray="0.62 0.326" opacity="0.85"/><line x1="19.87" y1="221.00" x2="20.81" y2="221.00" stroke="#111111" stroke-width="1.2" stroke-dasharray="0.62 0.326" opacity="0.85"/><line x1="20.81" y1="221.00" x2="21.76" y2="221.00" stroke="#111111" stroke-width="1.2" stroke-dasharray="0.62 0.326" opacity="0.85"/><line x1="21.76" y1="221.00" x2="22.70" y2="221.00" stroke="#111111" stroke-width="1.2" stroke-dasharray="0.62 0.326" opacity="0.85"/><line x1="23.65" y1="221.00" x2="30.27" y2="221.00" stroke="#111111" stroke-width="1.2" stroke-dasharray="0.62 0.326" opacity="0.85"/><line x1="30.27" y1="221.00" x2="31.22" y2="221.00" stroke="#111111" stroke-width="1.2" stroke-dasharray="0.62 0.326" opacity="0.85"/><line x1="3.78" y1="222.90" x2="8.51" y2="222.90" stroke="#111111" stroke-width="1.2" stroke-dasharray="0.62 0.326" opacity="0.85"/><line x1="9.46" y1="222.90" x2="10.41" y2="222.90" stroke="#111111" stroke-width="1.2" stroke-dasharray="0.62 0.326" opacity="0.85"/><line x1="11.35" y1="222.90" x2="15.14" y2="222.90" stroke="#111111" stroke-width="1.2" stroke-dasharray="0.62 0.326" opacity="0.85"/><line x1="15.14" y1="222.90" x2="16.08" y2="222.90" stroke="#111111" stroke-width="1.2" stroke-dasharray="0.62 0.326" opacity="0.85"/><line x1="16.08" y1="222.90" x2="23.65" y2="222.90" stroke="#111111" stroke-width="1.2" stroke-dasharray="0.62 0.326" opacity="0.85"/><line x1="23.65" y1="222.90" x2="24.60" y2="222.90" stroke="#111111" stroke-width="1.2" stroke-dasharray="0.62 0.326" opacity="0.85"/><line x1="24.60" y1="222.90" x2="32.16" y2="222.90" stroke="#111111" stroke-width="1.2" stroke-dasharray="0.62 0.326" opacity="0.85"/><line x1="32.16" y1="222.90" x2="33.11" y2="222.90" stroke="#111111" stroke-width="1.2" stroke-dasharray="0.62 0.326" opacity="0.85"/><line x1="34.06" y1="222.90" x2="42.57" y2="222.90" stroke="#111111" stroke-width="1.2" stroke-dasharray="0.62 0.326" opacity="0.85"/><line x1="42.57" y1="222.90" x2="43.52" y2="222.90" stroke="#111111" stroke-width="1.2" stroke-dasharray="0.62 0.326" opacity="0.85"/><line x1="3.78" y1="226.69" x2="12.30" y2="226.69" stroke="#111111" stroke-width="1.2" stroke-dasharray="0.62 0.326" opacity="0.85"/><line x1="12.30" y1="226.69" x2="13.24" y2="226.69" stroke="#111111" stroke-width="1.2" stroke-dasharray="0.62 0.326" opacity="0.85"/><line x1="13.24" y1="226.69" x2="27.43" y2="226.69" stroke="#111111" stroke-width="1.2" stroke-dasharray="0.62 0.326" opacity="0.85"/><line x1="27.43" y1="226.69" x2="28.38" y2="226.69" stroke="#111111" stroke-width="1.2" stroke-dasharray="0.62 0.326" opacity="0.85"/><line x1="28.38" y1="226.69" x2="31.22" y2="226.69" stroke="#0000ff" stroke-width="1.2" stroke-dasharray="0.62 0.326" opacity="0.85"/><line x1="31.22" y1="226.69" x2="32.16" y2="226.69" stroke="#111111" stroke-width="1.2" stroke-dasharray="0.62 0.326" opacity="0.85"/><line x1="32.16" y1="226.69" x2="36.89" y2="226.69" stroke="#111111" stroke-width="1.2" stroke-dasharray="0.62 0.326" opacity="0.85"/><line x1="36.89" y1="226.69" x2="37.84" y2="226.69" stroke="#111111" stroke-width="1.2" stroke-dasharray="0.62 0.326" opacity="0.85"/><line x1="38.79" y1="226.69" x2="47.30" y2="226.69" stroke="#111111" stroke-width="1.2" stroke-dasharray="0.62 0.326" opacity="0.85"/><line x1="47.30" y1="226.69" x2="48.25" y2="226.69" stroke="#111111" stroke-width="1.2" stroke-dasharray="0.62 0.326" opacity="0.85"/><line x1="48.25" y1="226.69" x2="49.19" y2="226.69" stroke="#111111" stroke-width="1.2" stroke-dasharray="0.62 0.326" opacity="0.85"/><line x1="3.78" y1="230.49" x2="4.73" y2="230.49" stroke="#008000" stroke-width="1.2" stroke-dasharray="0.62 0.326" opacity="0.85"/><line x1="5.68" y1="230.49" x2="15.14" y2="230.49" stroke="#008000" stroke-width="1.2" stroke-dasharray="0.62 0.326" opacity="0.85"/><line x1="16.08" y1="230.49" x2="19.87" y2="230.49" stroke="#008000" stroke-width="1.2" stroke-dasharray="0.62 0.326" opacity="0.85"/><line x1="3.78" y1="232.38" x2="4.73" y2="232.38" stroke="#111111" stroke-width="1.2" stroke-dasharray="0.62 0.326" opacity="0.85"/><line x1="5.68" y1="232.38" x2="6.62" y2="232.38" stroke="#111111" stroke-width="1.2" stroke-dasharray="0.62 0.326" opacity="0.85"/><line x1="7.57" y1="232.38" x2="12.30" y2="232.38" stroke="#111111" stroke-width="1.2" stroke-dasharray="0.62 0.326" opacity="0.85"/><line x1="12.30" y1="232.38" x2="13.24" y2="232.38" stroke="#111111" stroke-width="1.2" stroke-dasharray="0.62 0.326" opacity="0.85"/><line x1="13.24" y1="232.38" x2="18.92" y2="232.38" stroke="#111111" stroke-width="1.2" stroke-dasharray="0.62 0.326" opacity="0.85"/><line x1="18.92" y1="232.38" x2="19.87" y2="232.38" stroke="#111111" stroke-width="1.2" stroke-dasharray="0.62 0.326" opacity="0.85"/><line x1="3.78" y1="234.28" x2="20.81" y2="234.28" stroke="#111111" stroke-width="1.2" stroke-dasharray="0.62 0.326" opacity="0.85"/><line x1="21.76" y1="234.28" x2="22.70" y2="234.28" stroke="#111111" stroke-width="1.2" stroke-dasharray="0.62 0.326" opacity="0.85"/><line x1="23.65" y1="234.28" x2="25.54" y2="234.28" stroke="#111111" stroke-width="1.2" stroke-dasharray="0.62 0.326" opacity="0.85"/><line x1="25.54" y1="234.28" x2="26.49" y2="234.28" stroke="#111111" stroke-width="1.2" stroke-dasharray="0.62 0.326" opacity="0.85"/><line x1="26.49" y1="234.28" x2="31.22" y2="234.28" stroke="#111111" stroke-width="1.2" stroke-dasharray="0.62 0.326" opacity="0.85"/><line x1="31.22" y1="234.28" x2="32.16" y2="234.28" stroke="#111111" stroke-width="1.2" stroke-dasharray="0.62 0.326" opacity="0.85"/><line x1="32.16" y1="234.28" x2="34.06" y2="234.28" stroke="#111111" stroke-width="1.2" stroke-dasharray="0.62 0.326" opacity="0.85"/><line x1="34.06" y1="234.28" x2="35.00" y2="234.28" stroke="#111111" stroke-width="1.2" stroke-dasharray="0.62 0.326" opacity="0.85"/><line x1="35.00" y1="234.28" x2="40.68" y2="234.28" stroke="#111111" stroke-width="1.2" stroke-dasharray="0.62 0.326" opacity="0.85"/><line x1="40.68" y1="234.28" x2="41.62" y2="234.28" stroke="#111111" stroke-width="1.2" stroke-dasharray="0.62 0.326" opacity="0.85"/><line x1="41.62" y1="234.28" x2="42.57" y2="234.28" stroke="#111111" stroke-width="1.2" stroke-dasharray="0.62 0.326" opacity="0.85"/><line x1="42.57" y1="234.28" x2="43.52" y2="234.28" stroke="#111111" stroke-width="1.2" stroke-dasharray="0.62 0.326" opacity="0.85"/><line x1="44.46" y1="234.28" x2="45.41" y2="234.28" stroke="#098658" stroke-width="1.2" stroke-dasharray="0.62 0.326" opacity="0.85"/><line x1="45.41" y1="234.28" x2="46.35" y2="234.28" stroke="#111111" stroke-width="1.2" stroke-dasharray="0.62 0.326" opacity="0.85"/><line x1="46.35" y1="234.28" x2="47.30" y2="234.28" stroke="#111111" stroke-width="1.2" stroke-dasharray="0.62 0.326" opacity="0.85"/><line x1="48.25" y1="234.28" x2="50.14" y2="234.28" stroke="#111111" stroke-width="1.2" stroke-dasharray="0.62 0.326" opacity="0.85"/><line x1="50.14" y1="234.28" x2="51.08" y2="234.28" stroke="#111111" stroke-width="1.2" stroke-dasharray="0.62 0.326" opacity="0.85"/><line x1="51.08" y1="234.28" x2="56.76" y2="234.28" stroke="#111111" stroke-width="1.2" stroke-dasharray="0.62 0.326" opacity="0.85"/><line x1="56.76" y1="234.28" x2="57.71" y2="234.28" stroke="#111111" stroke-width="1.2" stroke-dasharray="0.62 0.326" opacity="0.85"/><line x1="57.71" y1="234.28" x2="63.38" y2="234.28" stroke="#111111" stroke-width="1.2" stroke-dasharray="0.62 0.326" opacity="0.85"/><line x1="63.38" y1="234.28" x2="64.33" y2="234.28" stroke="#111111" stroke-width="1.2" stroke-dasharray="0.62 0.326" opacity="0.85"/><line x1="65.27" y1="234.28" x2="66.22" y2="234.28" stroke="#098658" stroke-width="1.2" stroke-dasharray="0.62 0.326" opacity="0.85"/><line x1="66.22" y1="234.28" x2="67.17" y2="234.28" stroke="#111111" stroke-width="1.2" stroke-dasharray="0.62 0.326" opacity="0.85"/><line x1="67.17" y1="234.28" x2="68.11" y2="234.28" stroke="#111111" stroke-width="1.2" stroke-dasharray="0.62 0.326" opacity="0.85"/><line x1="3.78" y1="236.18" x2="11.35" y2="236.18" stroke="#111111" stroke-width="1.2" stroke-dasharray="0.62 0.326" opacity="0.85"/><line x1="12.30" y1="236.18" x2="13.24" y2="236.18" stroke="#111111" stroke-width="1.2" stroke-dasharray="0.62 0.326" opacity="0.85"/><line x1="14.19" y1="236.18" x2="16.08" y2="236.18" stroke="#111111" stroke-width="1.2" stroke-dasharray="0.62 0.326" opacity="0.85"/><line x1="16.08" y1="236.18" x2="17.03" y2="236.18" stroke="#111111" stroke-width="1.2" stroke-dasharray="0.62 0.326" opacity="0.85"/><line x1="17.03" y1="236.18" x2="27.43" y2="236.18" stroke="#111111" stroke-width="1.2" stroke-dasharray="0.62 0.326" opacity="0.85"/><line x1="27.43" y1="236.18" x2="28.38" y2="236.18" stroke="#111111" stroke-width="1.2" stroke-dasharray="0.62 0.326" opacity="0.85"/><line x1="28.38" y1="236.18" x2="30.27" y2="236.18" stroke="#111111" stroke-width="1.2" stroke-dasharray="0.62 0.326" opacity="0.85"/><line x1="30.27" y1="236.18" x2="31.22" y2="236.18" stroke="#111111" stroke-width="1.2" stroke-dasharray="0.62 0.326" opacity="0.85"/><line x1="31.22" y1="236.18" x2="35.00" y2="236.18" stroke="#111111" stroke-width="1.2" stroke-dasharray="0.62 0.326" opacity="0.85"/><line x1="35.00" y1="236.18" x2="35.95" y2="236.18" stroke="#111111" stroke-width="1.2" stroke-dasharray="0.62 0.326" opacity="0.85"/><line x1="35.95" y1="236.18" x2="52.98" y2="236.18" stroke="#111111" stroke-width="1.2" stroke-dasharray="0.62 0.326" opacity="0.85"/><line x1="52.98" y1="236.18" x2="53.92" y2="236.18" stroke="#111111" stroke-width="1.2" stroke-dasharray="0.62 0.326" opacity="0.85"/><line x1="54.87" y1="236.18" x2="56.76" y2="236.18" stroke="#111111" stroke-width="1.2" stroke-dasharray="0.62 0.326" opacity="0.85"/><line x1="56.76" y1="236.18" x2="57.71" y2="236.18" stroke="#111111" stroke-width="1.2" stroke-dasharray="0.62 0.326" opacity="0.85"/><line x1="57.71" y1="236.18" x2="64.33" y2="236.18" stroke="#111111" stroke-width="1.2" stroke-dasharray="0.62 0.326" opacity="0.85"/><line x1="64.33" y1="236.18" x2="65.27" y2="236.18" stroke="#111111" stroke-width="1.2" stroke-dasharray="0.62 0.326" opacity="0.85"/><line x1="65.27" y1="236.18" x2="66.22" y2="236.18" stroke="#111111" stroke-width="1.2" stroke-dasharray="0.62 0.326" opacity="0.85"/><line x1="3.78" y1="238.07" x2="8.51" y2="238.07" stroke="#0000ff" stroke-width="1.2" stroke-dasharray="0.62 0.326" opacity="0.85"/><line x1="8.51" y1="238.07" x2="9.46" y2="238.07" stroke="#111111" stroke-width="1.2" stroke-dasharray="0.62 0.326" opacity="0.85"/><line x1="9.46" y1="238.07" x2="17.97" y2="238.07" stroke="#a31515" stroke-width="1.2" stroke-dasharray="0.62 0.326" opacity="0.85"/><line x1="18.92" y1="238.07" x2="20.81" y2="238.07" stroke="#a31515" stroke-width="1.2" stroke-dasharray="0.62 0.326" opacity="0.85"/><line x1="21.76" y1="238.07" x2="25.54" y2="238.07" stroke="#a31515" stroke-width="1.2" stroke-dasharray="0.62 0.326" opacity="0.85"/><line x1="26.49" y1="238.07" x2="29.33" y2="238.07" stroke="#a31515" stroke-width="1.2" stroke-dasharray="0.62 0.326" opacity="0.85"/><line x1="30.27" y1="238.07" x2="33.11" y2="238.07" stroke="#a31515" stroke-width="1.2" stroke-dasharray="0.62 0.326" opacity="0.85"/><line x1="34.06" y1="238.07" x2="35.00" y2="238.07" stroke="#111111" stroke-width="1.2" stroke-dasharray="0.62 0.326" opacity="0.85"/><line x1="35.95" y1="238.07" x2="36.89" y2="238.07" stroke="#111111" stroke-width="1.2" stroke-dasharray="0.62 0.326" opacity="0.85"/><line x1="36.89" y1="238.07" x2="37.84" y2="238.07" stroke="#111111" stroke-width="1.2" stroke-dasharray="0.62 0.326" opacity="0.85"/><line x1="37.84" y1="238.07" x2="38.79" y2="238.07" stroke="#111111" stroke-width="1.2" stroke-dasharray="0.62 0.326" opacity="0.85"/><line x1="39.73" y1="238.07" x2="47.30" y2="238.07" stroke="#111111" stroke-width="1.2" stroke-dasharray="0.62 0.326" opacity="0.85"/><line x1="47.30" y1="238.07" x2="48.25" y2="238.07" stroke="#111111" stroke-width="1.2" stroke-dasharray="0.62 0.326" opacity="0.85"/><line x1="48.25" y1="238.07" x2="52.98" y2="238.07" stroke="#111111" stroke-width="1.2" stroke-dasharray="0.62 0.326" opacity="0.85"/><line x1="52.98" y1="238.07" x2="53.92" y2="238.07" stroke="#111111" stroke-width="1.2" stroke-dasharray="0.62 0.326" opacity="0.85"/><line x1="53.92" y1="238.07" x2="54.87" y2="238.07" stroke="#111111" stroke-width="1.2" stroke-dasharray="0.62 0.326" opacity="0.85"/><line x1="54.87" y1="238.07" x2="55.81" y2="238.07" stroke="#111111" stroke-width="1.2" stroke-dasharray="0.62 0.326" opacity="0.85"/><line x1="55.81" y1="238.07" x2="56.76" y2="238.07" stroke="#111111" stroke-width="1.2" stroke-dasharray="0.62 0.326" opacity="0.85"/></svg>
<div class="b" style="left:702px;top:0px;width:1px;height:240px;background:#e8e8e8"></div>
</div>
<div class="b" style="left:725px;top:607px;width:1px;height:271px;background:#e0e0e0"></div>
<div class="t m" style="left:734.8px;top:606.5px;font-size:11px;letter-spacing:-0.36px;line-height:16px;font-weight:bold;color:#212121">Stack Trace</div>
<div class="t m" style="left:760px;top:635.5px;font-size:11px;letter-spacing:-0.36px;line-height:16px;color:#212121">Creation of graph op "Log"</div>
<div class="b m" style="left:929px;top:634.5px;width:26.5px;height:17px;background:#e3e5e8;border:1px solid #c8cacf;border-radius:3px;font-size:10.4px;line-height:15px;text-align:center;color:#333;">Log</div>
<div class="t m" style="left:760px;top:650.2px;font-size:11px;letter-spacing:-0.36px;line-height:16px;color:#9e9e9e">(Host name: cais)</div>
<div class="b" style="left:735px;top:667px;width:531px;height:211px;overflow:hidden">
<div class="b" style="left:0;top:-20.40px;width:531px;height:29.40px;background:transparent;border-top:1px solid #bdbdbd"></div>
<div class="t m" style="left:0;top:-19.40px;font-size:11px;letter-spacing:-0.36px;line-height:16px;color:#212121;">wrapped_fn_file.py</div>
<div class="t m" style="left:228.29999999999995px;top:-5.80px;font-size:11px;letter-spacing:-0.36px;line-height:16px;color:#212121;text-decoration:underline;text-underline-offset:0.7px;">Line 600</div>
<div class="t m" style="left:322.29999999999995px;top:-5.80px;font-size:11px;letter-spacing:-0.36px;line-height:16px;color:#212121;">wrapped_fn</div>
<div class="b" style="left:0;top:8.00px;width:531px;height:29.40px;background:transparent;border-top:1px solid #bdbdbd"></div>
<div class="t m" style="left:0;top:9.00px;font-size:11px;letter-spacing:-0.36px;line-height:16px;color:#212121;">func_graph.py</div>
<div class="t m" style="left:228.29999999999995px;top:22.60px;font-size:11px;letter-spacing:-0.36px;line-height:16px;color:#212121;text-decoration:underline;text-underline-offset:0.7px;">Line 969</div>
<div class="t m" style="left:322.29999999999995px;top:22.60px;font-size:11px;letter-spacing:-0.36px;line-height:16px;color:#212121;">wrapper</div>
<div class="b" style="left:0;top:36.40px;width:531px;height:32.20px;background:#ffd3b1;border-top:1px solid #bdbdbd"></div>
<div class="t m" style="left:0;top:37.90px;font-size:11px;letter-spacing:-0.36px;line-height:16px;color:#212121;font-weight:bold;">debug_mnist_v2.py</div>
<div class="t m" style="left:228.29999999999995px;top:53.00px;font-size:11px;letter-spacing:-0.36px;line-height:16px;color:#212121;text-decoration:underline;text-underline-offset:0.7px;font-weight:bold;">Line 216</div>
<div class="t m" style="left:322.29999999999995px;top:53.00px;font-size:11px;letter-spacing:-0.36px;line-height:16px;color:#212121;font-weight:bold;">loss</div>
<svg class="b" style="left:215px;top:51px" width="10" height="16" viewBox="950 718 10 16"><rect x="954.4" y="721" width="1.6" height="7" fill="#212121"/><polygon points="952.3,730.6 957.9,730.6 956.2,727.2 954.2,727.2" fill="#212121"/></svg>
<div class="b" style="left:0;top:67.60px;width:531px;height:29.40px;background:transparent;border-top:1px solid #bdbdbd"></div>
<div class="t m" style="left:0;top:68.60px;font-size:11px;letter-spacing:-0.36px;line-height:16px;color:#212121;">gen_math_ops.py</div>
<div class="t m" style="left:228.29999999999995px;top:82.20px;font-size:11px;letter-spacing:-0.36px;line-height:16px;color:#212121;text-decoration:underline;text-underline-offset:0.7px;">Line 5264</div>
<div class="t m" style="left:322.29999999999995px;top:82.20px;font-size:11px;letter-spacing:-0.36px;line-height:16px;color:#212121;">log</div>
<div class="b" style="left:0;top:96.50px;width:531px;height:29.40px;background:transparent;border-top:1px solid #bdbdbd"></div>
<div class="t m" style="left:0;top:97.50px;font-size:11px;letter-spacing:-0.36px;line-height:16px;color:#212121;">op_def_library.py</div>
<div class="t m" style="left:228.29999999999995px;top:111.10px;font-size:11px;letter-spacing:-0.36px;line-height:16px;color:#212121;text-decoration:underline;text-underline-offset:0.7px;">Line 755</div>
<div class="t m" style="left:322.29999999999995px;top:111.10px;font-size:11px;letter-spacing:-0.36px;line-height:16px;color:#212121;">_apply_op_helper</div>
<div class="b" style="left:0;top:125.40px;width:531px;height:29.40px;background:transparent;border-top:1px solid #bdbdbd"></div>
<div class="t m" style="left:0;top:126.40px;font-size:11px;letter-spacing:-0.36px;line-height:16px;color:#212121;">op_callbacks.py</div>
<div class="t m" style="left:228.29999999999995px;top:140.00px;font-size:11px;letter-spacing:-0.36px;line-height:16px;color:#212121;text-decoration:underline;text-underline-offset:0.7px;">Line 208</div>
<div class="t m" style="left:322.29999999999995px;top:140.00px;font-size:11px;letter-spacing:-0.36px;line-height:16px;color:#212121;">invoke_op_callbacks</div>
<div class="b" style="left:0;top:153.80px;width:531px;height:29.40px;background:transparent;border-top:1px solid #bdbdbd"></div>
<div class="t m" style="left:0;top:154.80px;font-size:11px;letter-spacing:-0.36px;line-height:16px;color:#212121;">dumping_callback.py</div>
<div class="t m" style="left:228.29999999999995px;top:168.40px;font-size:11px;letter-spacing:-0.36px;line-height:16px;color:#212121;text-decoration:underline;text-underline-offset:0.7px;">Line 577</div>
<div class="t m" style="left:322.29999999999995px;top:168.40px;font-size:11px;letter-spacing:-0.36px;line-height:16px;color:#212121;">callback</div>
<div class="b" style="left:0;top:182.20px;width:531px;height:29.40px;background:transparent;border-top:1px solid #bdbdbd"></div>
<div class="t m" style="left:0;top:183.20px;font-size:11px;letter-spacing:-0.36px;line-height:16px;color:#212121;">dumping_callback.py</div>
<div class="t m" style="left:228.29999999999995px;top:196.80px;font-size:11px;letter-spacing:-0.36px;line-height:16px;color:#212121;text-decoration:underline;text-underline-offset:0.7px;">Line 258</div>
<div class="t m" style="left:322.29999999999995px;top:196.80px;font-size:11px;letter-spacing:-0.36px;line-height:16px;color:#212121;">_process_stack_frames</div>
<div class="b" style="left:0;top:210px;width:531px;height:1px;background:#bdbdbd"></div>
<div class="b" style="left:0;top:0;width:531px;height:5px;background:linear-gradient(rgba(0,0,0,0.14),rgba(0,0,0,0))"></div>
</div>
<div class="b" style="left:1266px;top:667px;width:14px;height:211px;background:#f1f1f1"></div>
<div class="b" style="left:1267px;top:801px;width:12px;height:63px;background:#c1c1c1"></div>
<div class="b" style="left:1269px;top:672px;width:0;height:0;border-left:4px solid transparent;border-right:4px solid transparent;border-bottom:4px solid #505050"></div>
<div class="b" style="left:1269px;top:869px;width:0;height:0;border-left:4px solid transparent;border-right:4px solid transparent;border-top:4px solid #505050"></div>
</body></html>
